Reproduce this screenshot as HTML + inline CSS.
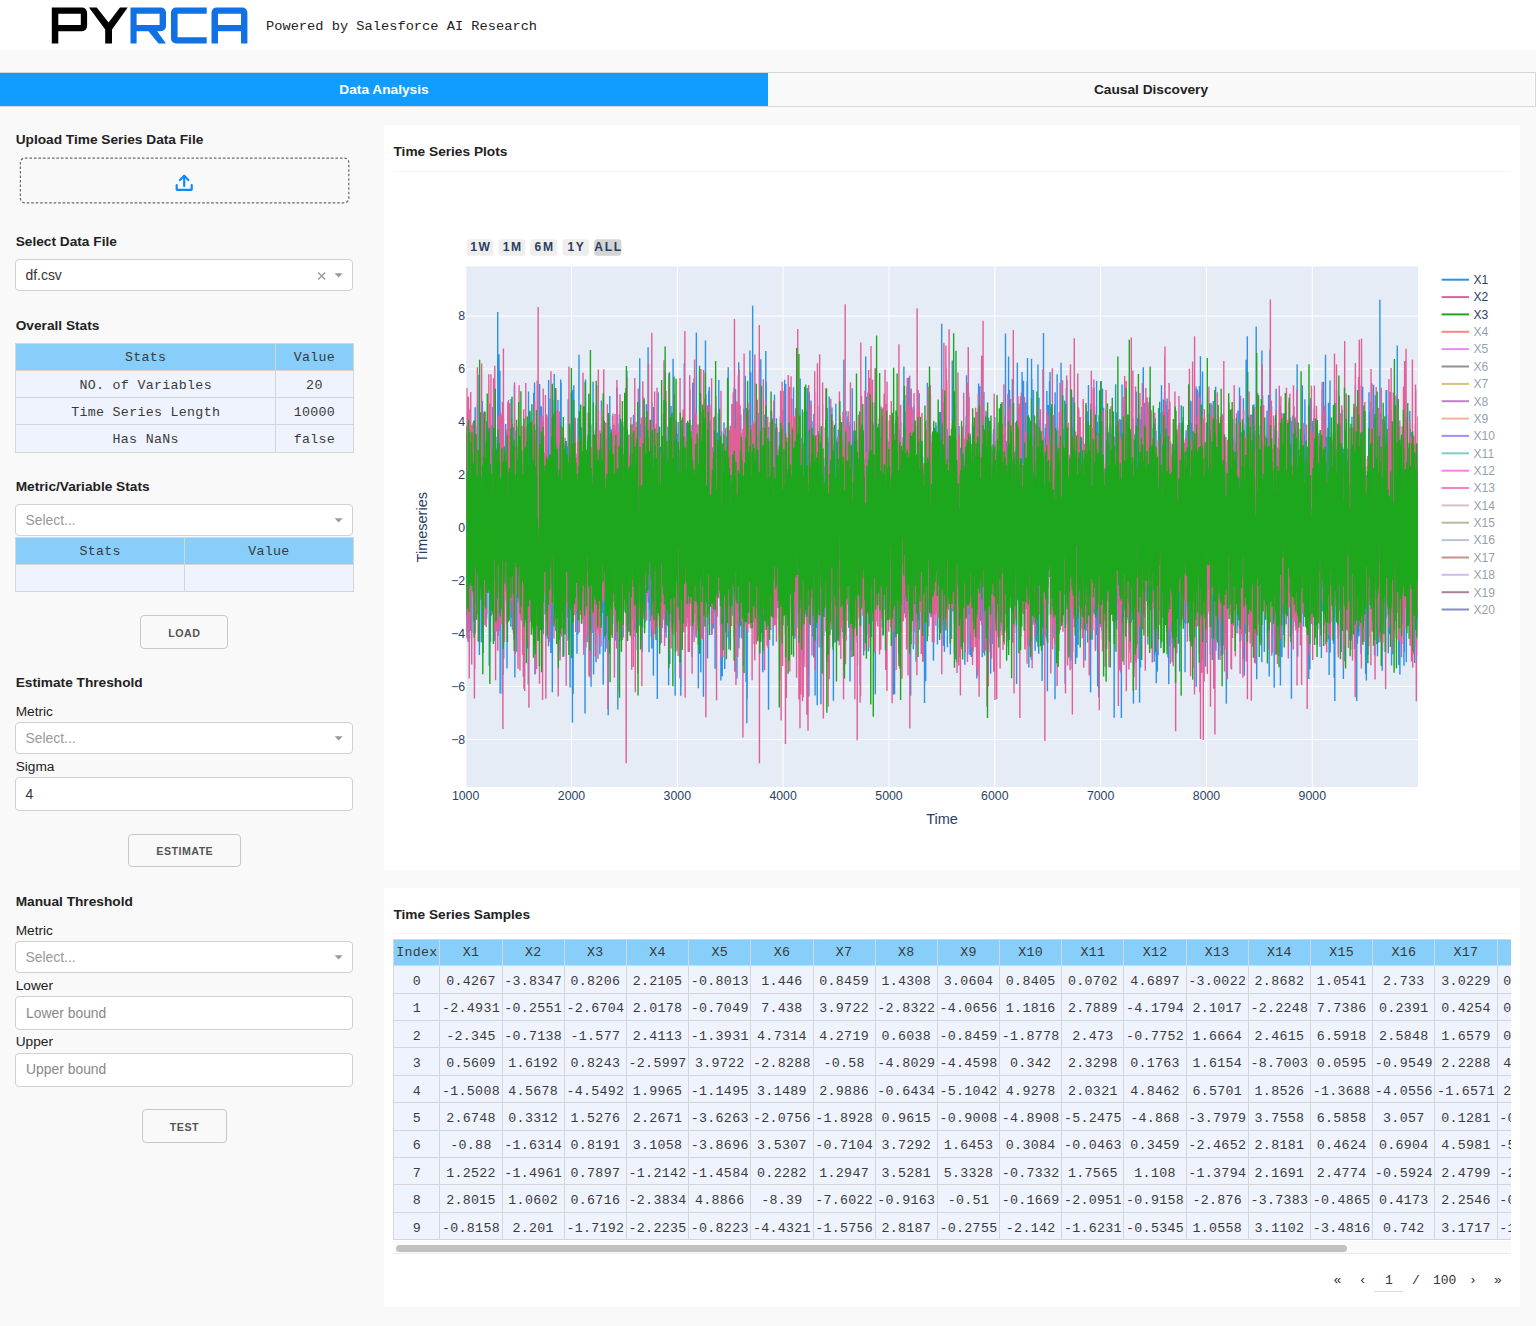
<!DOCTYPE html>
<html><head><meta charset="utf-8"><title>PyRCA</title>
<style>
html,body{margin:0;padding:0}
body{width:1536px;height:1326px;overflow:hidden;background:#f9f9f9;position:relative;font-family:"Liberation Sans", sans-serif}
.abs{position:absolute;box-sizing:border-box}
.t{position:absolute;white-space:pre;line-height:1;font-family:"Liberation Sans", sans-serif}
.m{font-family:"Liberation Mono", monospace}
.tab{display:flex;align-items:center;justify-content:center;font:bold 13.7px "Liberation Sans", sans-serif}
.inp{background:#fff;border:1px solid #d0d0d0;border-radius:4px}
.btn{display:flex;align-items:center;justify-content:center;border:1px solid #c8c8c8;border-radius:4px;font:bold 10.7px "Liberation Sans", sans-serif;letter-spacing:0.45px;color:#555;padding-top:2px}
table{border-collapse:collapse;table-layout:fixed}
.st th,.st td{box-sizing:border-box;border:1px solid #d6d6d6;padding:0;text-align:center;font:13.3px "Liberation Mono", monospace;letter-spacing:0.3px;color:#3a3a3a;background:#eff3fe}
.st td{padding-top:3px}
.st th{background:#87cefa;font-weight:normal;padding-top:1px}
.dt{border-collapse:collapse;table-layout:fixed}
.dt th,.dt td{box-sizing:border-box;border:1px solid #d6d6d6;padding:0;text-align:center;font:13.3px "Liberation Mono", monospace;letter-spacing:0.3px;color:#3a3a3a;background:#eff3fe;height:27.4px;white-space:nowrap;overflow:hidden}
.dt td{padding-top:4px}
.dt th{background:#87cefa;font-weight:normal;height:26.8px;padding-top:1px}
.tk{font:12.3px "Liberation Sans", sans-serif;fill:#2a3f5f}
.tt{font:14.5px "Liberation Sans", sans-serif;fill:#2a3f5f}
.lg{font:12.1px "Liberation Sans", sans-serif;fill:#2a3f5f}
.rb{font:bold 12.1px "Liberation Sans", sans-serif;fill:#2a3f5f;letter-spacing:1.7px}
</style></head><body>
<div class="abs" style="left:0;top:0;width:1536px;height:50px;background:#fff"></div><svg class="abs" style="left:0;top:0" width="260" height="50" viewBox="0 0 260 50">
<path fill="#000" fill-rule="evenodd" d="M51.8 7.5H82a5.1 5.1 0 0 1 5.1 5.1V26.1a5.1 5.1 0 0 1-5.1 5.1H58.3V43.5H51.8Z M58.3 13.7V24.9H80.8V13.7Z"/>
<path fill="#000" d="M89 7.5H96.7L108.6 22.6L120 7.5H127.7L112 29.5V43.5H105.2V29.5Z"/>
<path fill="#1170e4" fill-rule="evenodd" d="M130.5 7.5H160.9a5.1 5.1 0 0 1 5.1 5.1V26.1a5.1 5.1 0 0 1-5.1 5.1H157.1L166 43.5H158.5L148.5 31.2H136.6V43.5H130.5Z M136.6 13.7V24.9H159.6V13.7Z"/>
<path fill="#1170e4" fill-rule="evenodd" d="M176.1 7.5H206.7V13.7H177.6V37.2H206.7V43.5H176.1a5.1 5.1 0 0 1-5.1-5.1V12.6a5.1 5.1 0 0 1 5.1-5.1Z"/>
<path fill="#1170e4" fill-rule="evenodd" d="M216.6 7.5H242.3a5.1 5.1 0 0 1 5.1 5.1V43.5H241V31.2H218V43.5H211.5V12.6a5.1 5.1 0 0 1 5.1-5.1Z M218 13.7V24.9H241V13.7Z"/>
</svg><div class="t m" style="left:266px;top:19.5px;font-size:13.7px;color:#222;">Powered by Salesforce AI Research</div><div class="abs" style="left:0;top:72px;width:1536px;height:35px;border:1px solid #d6d6d6;background:#f9f9f9"></div><div class="abs tab" style="left:0;top:73px;width:768px;height:33px;background:#119dff;color:#fff">Data Analysis</div><div class="abs tab" style="left:768px;top:73px;width:767px;height:33px;color:#222;border-right:1px solid #fff">Causal Discovery</div><div class="t" style="left:15.7px;top:133.4px;font-size:13.7px;font-weight:bold;color:#222;">Upload Time Series Data File</div><svg class="abs" style="left:0;top:150px" width="360" height="60"><rect x="20.4" y="8.05" width="328.4" height="44.8" rx="4.5" fill="none" stroke="#6a6a6a" stroke-width="1.2" stroke-dasharray="2.6 1.9"/></svg><svg class="abs" style="left:170px;top:168px" width="28" height="28" viewBox="0 0 28 28">
<g fill="none" stroke="#0b8bff" stroke-width="2.2" stroke-linecap="round" stroke-linejoin="round">
<path d="M14.2 18V7.8"/><path d="M10 12L14.2 7.8L18.4 12"/><path d="M6.7 17.2V21.3a0.6 0.6 0 0 0 0.6 0.6H21.1a0.6 0.6 0 0 0 0.6-0.6V17.2"/></g></svg><div class="t" style="left:15.7px;top:235.4px;font-size:13.7px;font-weight:bold;color:#222;">Select Data File</div><div class="abs inp" style="left:15.3px;top:258.8px;width:337.6px;height:32.6px"></div><div class="t" style="left:25.5px;top:269.2px;font-size:13.9px;font-weight:normal;color:#333;">df.csv</div><svg class="abs" style="left:316px;top:270.6px" width="12" height="10" viewBox="0 0 12 10"><path d="M2.2 1.4L9.2 8.6M9.2 1.4L2.2 8.6" stroke="#999" stroke-width="1.4"/></svg><svg class="abs" style="left:333px;top:272.1px" width="11" height="7" viewBox="0 0 11 7"><path d="M1.7 1.2H9.6L5.65 5.5Z" fill="#999"/></svg><div class="t" style="left:15.7px;top:318.9px;font-size:13.7px;font-weight:bold;color:#222;">Overall Stats</div><table class="abs st" style="left:15.3px;top:343px"><tr><th style="width:259.8px;height:26.7px">Stats</th><th style="width:77.6px;height:26.7px">Value</th></tr><tr><td style="height:27.3px">NO. of Variables</td><td style="height:27.3px">20</td></tr><tr><td style="height:27.3px">Time Series Length</td><td style="height:27.3px">10000</td></tr><tr><td style="height:27.3px">Has NaNs</td><td style="height:27.3px">false</td></tr></table><div class="t" style="left:15.7px;top:480.3px;font-size:13.7px;font-weight:bold;color:#222;">Metric/Variable Stats</div><div class="abs inp" style="left:15.3px;top:504.4px;width:337.6px;height:31.6px"></div><div class="t" style="left:25.5px;top:514.3px;font-size:13.9px;font-weight:normal;color:#999;">Select...</div><svg class="abs" style="left:333px;top:517.1999999999999px" width="11" height="7" viewBox="0 0 11 7"><path d="M1.7 1.2H9.6L5.65 5.5Z" fill="#999"/></svg><table class="abs st" style="left:15.3px;top:537.3px"><tr><th style="width:168.6px;height:26.5px">Stats</th><th style="width:169px;height:26.5px">Value</th></tr><tr><td style="height:27.3px"></td><td style="height:27.3px"></td></tr></table><div class="abs btn" style="left:140.2px;top:614.5px;width:88.2px;height:34.3px">LOAD</div><div class="t" style="left:15.7px;top:676.3px;font-size:13.7px;font-weight:bold;color:#222;">Estimate Threshold</div><div class="t" style="left:15.7px;top:705.0px;font-size:13.7px;font-weight:normal;color:#222;">Metric</div><div class="abs inp" style="left:15.3px;top:722.2px;width:337.6px;height:32.2px"></div><div class="t" style="left:25.5px;top:732.4px;font-size:13.9px;font-weight:normal;color:#999;">Select...</div><svg class="abs" style="left:333px;top:735.3000000000001px" width="11" height="7" viewBox="0 0 11 7"><path d="M1.7 1.2H9.6L5.65 5.5Z" fill="#999"/></svg><div class="t" style="left:15.7px;top:759.9px;font-size:13.7px;font-weight:normal;color:#222;">Sigma</div><div class="abs inp" style="left:15.3px;top:777.3px;width:337.6px;height:33.5px"></div><div class="t" style="left:25.5px;top:788.2px;font-size:13.9px;font-weight:normal;color:#333;">4</div><div class="abs btn" style="left:128.2px;top:833.5px;width:113.2px;height:33.7px">ESTIMATE</div><div class="t" style="left:15.7px;top:894.9px;font-size:13.7px;font-weight:bold;color:#222;">Manual Threshold</div><div class="t" style="left:15.7px;top:924.0px;font-size:13.7px;font-weight:normal;color:#222;">Metric</div><div class="abs inp" style="left:15.3px;top:941.4px;width:337.6px;height:31.8px"></div><div class="t" style="left:25.5px;top:951.4px;font-size:13.9px;font-weight:normal;color:#999;">Select...</div><svg class="abs" style="left:333px;top:954.3px" width="11" height="7" viewBox="0 0 11 7"><path d="M1.7 1.2H9.6L5.65 5.5Z" fill="#999"/></svg><div class="t" style="left:15.7px;top:978.7px;font-size:13.7px;font-weight:normal;color:#222;">Lower</div><div class="abs inp" style="left:15.3px;top:996.3px;width:337.6px;height:33.7px"></div><div class="t" style="left:26px;top:1006.9px;font-size:13.9px;font-weight:normal;color:#888;">Lower bound</div><div class="t" style="left:15.7px;top:1035.3px;font-size:13.7px;font-weight:normal;color:#222;">Upper</div><div class="abs inp" style="left:15.3px;top:1052.5px;width:337.6px;height:34px"></div><div class="t" style="left:26px;top:1063.4px;font-size:13.9px;font-weight:normal;color:#888;">Upper bound</div><div class="abs btn" style="left:141.6px;top:1109.3px;width:85.6px;height:33.8px">TEST</div><div class="abs" style="left:384px;top:125.2px;width:1136.4px;height:744.6px;background:#fff"></div><div class="t" style="left:393.5px;top:145.3px;font-size:13.7px;font-weight:bold;color:#222;">Time Series Plots</div><div class="abs" style="left:393px;top:171.4px;width:1118px;height:1px;background:#f4f4f4"></div><svg class="abs" style="left:0;top:0" width="1536" height="900" viewBox="0 0 1536 900"><rect x="466.3" y="266.4" width="951.7" height="520.6" fill="#e5ecf6"/><path d="M571.5 266.4V787M677.3 266.4V787M783.1 266.4V787M889.0 266.4V787M994.8 266.4V787M1100.6 266.4V787M1206.5 266.4V787M1312.3 266.4V787M466.3 739.5H1418M466.3 686.6H1418M466.3 633.6H1418M466.3 580.7H1418M466.3 527.8H1418M466.3 474.9H1418M466.3 422.0H1418M466.3 369.0H1418M466.3 316.1H1418" stroke="#fff" stroke-width="1" fill="none"/><clipPath id="cp"><rect x="466.3" y="266.4" width="951.7" height="520.6"/></clipPath><g clip-path="url(#cp)"><path transform="translate(465.65 527.8) scale(0.10583)" d="M0-19l1-746 1 76 1 976 1-119 1 129 1-618 1 353 1-452 1 1459 1-1920 1 935 1-437 1 460 1 136 1-474 1-203 1 578 1-28 1-472 1 876 1 362 1-1074 1 599 1 703 1-622 1-195 1 408 1 169 1-861 1-484 1 636 1 287 1-635 1-186 1 572 1-475 1-281 1 703 1 342 1-654 1 57 1-479 1 1341 1-351 1 100 1 503 1-1046 1-226 1 713 1-1196 1 318 1 109 1 127 1-312 1 1287 1-1094 1 6 1 1333 1-1189 1 336 1-581 1 687 1-237 1-203 1 686 1-830 1 396 1-336 1 571 1-905 1 271 1 440 1-456 1-353 1-299 1 1893 1-1382 1 235 1 315 1 513 1-1273 1 1417 1-1029 1-413 1 1632 1-730 1 567 1-874 1-715 1-286 1 2138 1-677 1-719 1-492 1 651 1 657 1-587 1 176 1 106 1 298 1-631 1 45 1 225 1 73 1 598 1-450 1-952 1 786 1 703 1-1561 1 453 1-888 1 1151 1 295 1 554 1-1559 1-700 1 1907 1-98 1-699 1 802 1-315 1 45 1-305 1-508 1 604 1-505 1 753 1-420 1 1387 1-387 1-1264 1 780 1-658 1 21 1-439 1 287 1-115 1 635 1 330 1 19 1-137 1 361 1-328 1-256 1-194 1 333 1 891 1-1041 1-168 1-483 1 285 1 687 1 45 1-1538 1 705 1-604 1-168 1 1658 1-677 1-41 1-57 1 10 1 191 1 16 1 943 1-752 1 328 1-492 1 334 1-611 1-113 1 287 1-4 1 126 1 304 1-159 1 186 1-497 1 210 1-319 1 1074 1-1246 1 928 1-16 1-302 1 206 1-481 1 487 1 279 1-126 1-1214 1 713 1 682 1-662 1 880 1-1882 1 1865 1-1127 1-37 1 1122 1-985 1-392 1 298 1 116 1-387 1 443 1-98 1 260 1-426 1 885 1-975 1 729 1 330 1-819 1-747 1 411 1 831 1-683 1 649 1-186 1-120 1 1354 1-1412 1 687 1-187 1 437 1 24 1-322 1-995 1-473 1 951 1-628 1 763 1 927 1-1160 1-167 1 492 1-411 1-152 1 808 1 345 1-707 1-5 1 79 1-753 1-416 1 1205 1-627 1-136 1 128 1-188 1 808 1-635 1-723 1 687 1 801 1-691 1-368 1 502 1 525 1-1185 1 1571 1-986 1 292 1 663 1-1358 1 490 1 852 1-995 1 582 1 827 1-682 1-536 1-210 1 265 1 68 1-239 1 383 1-781 1 578 1-81 1-139 1 899 1-196 1-1259 1 671 1 348 1-351 1 463 1-428 1 532 1-530 1 1043 1-1637 1 1038 1 601 1-764 1 83 1-295 1 730 1-868 1-1814 1 2757 1-909 1 365 1-283 1 1127 1-371 1-907 1 281 1-942 1 1316 1-494 1-1541 1 2070 1 77 1-488 1 5 1-500 1 402 1 499 1-545 1-1365 1 769 1 2280 1-1485 1 412 1-842 1 447 1-1184 1 563 1 23 1 396 1 128 1-214 1-538 1 428 1 499 1-915 1 609 1 152 1 401 1-127 1 40 1 1213 1-2143 1 253 1 440 1-709 1 342 1 37 1 1601 1-1261 1-430 1-607 1-129 1 233 1 1455 1 583 1-1557 1 305 1-525 1 612 1-195 1 968 1-1096 1 502 1-447 1-61 1 324 1-244 1 186 1-435 1 145 1 590 1 23 1-1312 1 1038 1-615 1 337 1 538 1 104 1-489 1-76 1-202 1 1059 1-378 1-282 1-954 1 2229 1-1575 1 551 1-547 1 520 1-482 1-675 1 681 1-45 1 34 1 632 1-727 1 422 1 340 1-435 1 106 1-552 1 448 1 274 1-1117 1 263 1-158 1 372 1 404 1 174 1-79 1-690 1 470 1 897 1-812 1 775 1-890 1 770 1 34 1-778 1 111 1 891 1-1356 1-796 1 2050 1-1857 1 1411 1-109 1-177 1 712 1-1544 1 454 1 700 1-267 1 697 1-657 1-723 1 1492 1-720 1-328 1-507 1-169 1 1016 1 159 1-669 1 457 1-30 1-782 1-343 1 801 1 258 1-429 1 1383 1-1052 1 587 1-1941 1 939 1 325 1 189 1 1306 1-1816 1-516 1 1327 1-794 1-22 1 1277 1-1397 1-236 1 633 1 165 1-479 1 1310 1-919 1-541 1 1292 1-1257 1 793 1 936 1-1112 1 488 1-727 1 839 1-1250 1 1007 1-616 1 534 1-152 1-852 1 549 1 343 1 482 1-1357 1 241 1 596 1-321 1 716 1-8 1-106 1-664 1 33 1 585 1-834 1-26 1 344 1-487 1 746 1-98 1-330 1 285 1-466 1 1152 1-1507 1 1242 1-347 1 682 1-1113 1-379 1 114 1 134 1 1345 1-436 1-180 1 266 1-1158 1 528 1 118 1-288 1 809 1-24 1-15 1-776 1 88 1-133 1-282 1 1371 1-449 1-398 1 842 1-460 1-869 1-50 1 14 1 582 1 143 1-726 1 817 1-400 1-556 1 953 1 136 1-338 1-342 1 66 1 183 1-225 1 1213 1-417 1-575 1 614 1 233 1-76 1-162 1-417 1 475 1-707 1-822 1 1037 1-800 1 555 1 792 1-486 1 408 1-984 1 1081 1-1393 1 419 1 1463 1-1579 1-433 1 1319 1-999 1 1566 1-1154 1 1077 1-1206 1 1277 1 475 1-1704 1-1064 1 1622 1-802 1 405 1 244 1-528 1-578 1 1619 1-1012 1 123 1 995 1-1709 1-189 1 1633 1-1514 1 946 1 124 1-938 1 718 1-54 1-672 1 129 1 223 1 1290 1 97 1-1519 1 1155 1-605 1 688 1-501 1 616 1-1636 1 1490 1-504 1 37 1-784 1 1477 1-780 1 99 1-416 1 32 1 527 1-396 1 346 1-474 1 321 1 311 1-353 1-221 1-1070 1 1551 1-449 1-650 1 1992 1-188 1-312 1-605 1-1437 1 1153 1-460 1 805 1 1261 1-84 1-1875 1 469 1 834 1-1359 1 1495 1-1504 1-178 1 1246 1 193 1-1098 1 1091 1-1101 1 1157 1-1126 1 401 1 296 1 261 1-638 1 1199 1-910 1 68 1-605 1 1087 1-1669 1 1139 1 465 1-1420 1-155 1 1041 1 395 1-510 1 397 1-212 1-1053 1 657 1 138 1-113 1 228 1-506 1-22 1 703 1-267 1-1299 1 1121 1 342 1-1258 1 1148 1 622 1-996 1 885 1-226 1-464 1 255 1 359 1-120 1 24 1-990 1 1062 1-84 1-1469 1 1459 1-1150 1 98 1 826 1 712 1-1053 1-123 1-166 1 504 1-638 1-104 1 1375 1-1397 1 706 1 416 1-139 1-1235 1 502 1 1560 1-1053 1 126 1 20 1 190 1 530 1-1304 1 1014 1-321 1 131 1 70 1-827 1 202 1 595 1 153 1-268 1-808 1 473 1-60 1 316 1-40 1-267 1 1159 1-1944 1 1350 1-123 1-1073 1 628 1 101 1 352 1 550 1-982 1-568 1 1178 1-1273 1 1401 1-221 1-698 1 285 1-389 1 806 1 163 1 470 1-373 1-72 1 198 1-977 1 547 1 746 1-2516 1 1867 1 236 1-1403 1 41 1 1304 1 181 1-266 1-1198 1 810 1 280 1-439 1-693 1 1459 1-566 1 562 1-2000 1 199 1 488 1 610 1-446 1 1553 1-1338 1 908 1-7 1-349 1-199 1-520 1-71 1 246 1 679 1-911 1 448 1-732 1 1180 1 1038 1-1286 1-1478 1 946 1 373 1-606 1 214 1 23 1 549 1-332 1-70 1 475 1 267 1-707 1-467 1 181 1 86 1-6 1-1170 1 1308 1-440 1-515 1 1071 1-119 1-438 1-362 1 773 1-28 1 153 1 729 1-1307 1 771 1 825 1-886 1 891 1-407 1-577 1 528 1-1121 1 1429 1-975 1-166 1-509 1 303 1 387 1 86 1 78 1-674 1 1010 1-662 1 345 1-188 1 283 1-1349 1 1571 1-512 1-13 1-187 1 88 1 15 1-314 1 1399 1-852 1 699 1-825 1 797 1-126 1-506 1-820 1 461 1 158 1-623 1 1321 1 646 1-939 1-82 1-851 1-509 1 1952 1-2142 1 513 1 409 1 264 1-1158 1 1320 1 312 1-345 1 848 1-1035 1 327 1-248 1-17 1 799 1-1336 1 1311 1-1071 1 1396 1-1105 1 670 1-485 1 390 1 862 1-601 1-666 1-313 1 1178 1 369 1-705 1-372 1 238 1 99 1-934 1-65 1 126 1 945 1-571 1 152 1 694 1-1299 1 447 1 322 1-1070 1 368 1-52 1-194 1 272 1 1115 1-493 1-783 1 997 1-453 1-203 1-587 1 80 1 225 1 611 1-620 1 218 1 388 1-854 1 485 1 704 1-1138 1 856 1-477 1 1191 1-846 1 522 1 15 1 527 1-2280 1 1290 1-218 1-489 1 692 1-358 1 1054 1-875 1 343 1-514 1 180 1 881 1 263 1-471 1-986 1 176 1 12 1 1363 1 378 1-1162 1-164 1 153 1-539 1 296 1 571 1-172 1-575 1 39 1 83 1-1317 1 1424 1-216 1 628 1-358 1-496 1-24 1 407 1-310 1 191 1 1090 1 784 1-3142 1 833 1 499 1 946 1-260 1-1481 1 2331 1-1386 1-671 1 408 1-344 1 499 1-1420 1 1924 1 188 1-920 1-650 1 835 1-621 1 889 1 368 1-1455 1-94 1 20 1 1109 1 403 1 8 1-532 1-454 1 42 1 1093 1-917 1 100 1-41 1 64 1 101 1-448 1 263 1-56 1 516 1-612 1 291 1 1122 1-1462 1 421 1-670 1 612 1-37 1-173 1 126 1 244 1 758 1-2046 1 1925 1-696 1-559 1 153 1-105 1-114 1-278 1 544 1-1468 1 2205 1-698 1 331 1 104 1-469 1-658 1 1220 1 0 1-808 1 102 1-795 1 523 1 449 1 314 1-306 1 220 1 669 1-773 1 104 1 32 1 111 1-1193 1 559 1-135 1 869 1 233 1-416 1-296 1 331 1-88 1-647 1 373 1 722 1-313 1 129 1-472 1 759 1-556 1-491 1 374 1 530 1-167 1-417 1-202 1-199 1 553 1 659 1-1543 1 634 1-60 1 56 1 756 1-404 1-325 1-436 1 547 1 1789 1-1619 1-334 1-530 1 328 1-1001 1 600 1 43 1 228 1 1308 1-1255 1 140 1 633 1-626 1 95 1 497 1-193 1 79 1-278 1 369 1-546 1 1386 1-920 1 789 1-676 1-563 1 279 1 74 1-101 1-844 1 1505 1-1121 1 1350 1-588 1-355 1 571 1-594 1-295 1 1082 1-628 1 168 1 880 1-987 1 344 1-1202 1 1246 1-1449 1 1256 1-1390 1 787 1 48 1-198 1-55 1-281 1-186 1 1170 1 508 1 800 1-1285 1-646 1 215 1 148 1 262 1 163 1-200 1-379 1 1212 1-1403 1 1230 1-731 1 268 1-149 1 381 1 61 1-519 1 481 1-1993 1 1618 1 135 1-60 1 294 1 779 1-1237 1-319 1 1021 1-849 1 684 1-661 1-222 1-71 1 28 1 641 1-891 1 748 1-449 1-200 1 568 1 551 1-1067 1 973 1-127 1 119 1-1094 1 566 1 1173 1-1678 1-752 1 152 1 1333 1-363 1-243 1-216 1 483 1 635 1-1040 1 79 1 1094 1-542 1-357 1 153 1-297 1-152 1 143 1 369 1 694 1-1105 1-442 1-323 1 1130 1 2 1-834 1 4 1 618 1-209 1 830 1-757 1 793 1-383 1-12 1 194 1 925 1-723 1-653 1 222 1 187 1-462 1-146 1-90 1 931 1-466 1 201 1 306 1 348 1-787 1 436 1-1702 1 1267 1 71 1 97 1-1279 1 1585 1-439 1 342 1-362 1-50 1-639 1 1415 1-785 1-921 1 1196 1-187 1 399 1 974 1-1414 1-720 1 925 1 775 1-1188 1 105 1-518 1 50 1 665 1-377 1 1237 1-1639 1 522 1-506 1 13 1 759 1-77 1 408 1 670 1-1088 1-161 1 697 1-1011 1 345 1-200 1 689 1 559 1-1430 1 94 1 405 1 175 1-81 1-78 1 209 1 845 1-1573 1 1282 1-653 1-15 1-319 1 1054 1-1587 1 310 1-65 1-280 1 1162 1 1314 1-1951 1-552 1 84 1 955 1-250 1-213 1 1177 1-642 1-17 1-1249 1 1257 1-1251 1 876 1 950 1-2191 1 1794 1-895 1-612 1 1260 1 391 1-1278 1 549 1 727 1-82 1-389 1-761 1 703 1-529 1-562 1 216 1-95 1 116 1 1598 1-1593 1 503 1 255 1 540 1 284 1-269 1-613 1 649 1-202 1-112 1-722 1 541 1-84 1-828 1 927 1-518 1 932 1-780 1 118 1-32 1 361 1 318 1-411 1 94 1-844 1 70 1 1187 1-1029 1 623 1-528 1 529 1 557 1-1400 1 318 1 944 1 374 1-763 1 364 1-460 1-554 1-477 1 1027 1-976 1 120 1 899 1 694 1-1418 1 137 1-982 1 520 1 364 1-510 1 1539 1-699 1 263 1-1135 1 662 1 2039 1-2492 1 1280 1-948 1 707 1-408 1-220 1 247 1 646 1-1324 1 563 1 233 1-407 1 698 1-1363 1 934 1-79 1 10 1 709 1 147 1-783 1-77 1-559 1 504 1 866 1-909 1-169 1-99 1 376 1 875 1-1340 1 1065 1-735 1 1208 1-1315 1 872 1-1051 1-383 1 334 1 1316 1-126 1-41 1-863 1 179 1 105 1-85 1-152 1-40 1-584 1 982 1-145 1 1159 1-299 1-355 1 278 1-791 1-461 1 831 1 28 1 16 1-361 1 380 1-546 1 71 1-24 1-236 1 413 1-63 1-909 1 1016 1-474 1 419 1 288 1 0 1 205 1-468 1 346 1-101 1-924 1 761 1-717 1 492 1-335 1 829 1-427 1-1399 1 1017 1-99 1 434 1-351 1 1136 1-175 1-720 1-219 1 692 1-125 1 98 1-97 1 570 1 131 1-760 1 932 1-426 1-179 1 221 1-725 1 385 1-205 1 524 1-150 1-705 1 84 1 467 1-466 1 100 1 16 1-807 1 1123 1-461 1 0 1 369 1 524 1-1044 1 242 1 120 1 16 1 1 1 516 1-667 1 1180 1-999 1 828 1-643 1-600 1 549 1 124 1-558 1 441 1 79 1-8 1-1071 1 477 1 104 1 940 1-1017 1 1076 1-997 1 898 1-1725 1 2046 1-1635 1 237 1 1450 1-863 1-948 1 174 1 1572 1-640 1 368 1-84 1-215 1-1397 1 961 1 202 1 62 1-563 1-14 1 906 1-1342 1 1434 1-453 1-409 1-709 1 1157 1-355 1-572 1 382 1-283 1 50 1 437 1-208 1-161 1 531 1-914 1 2016 1-600 1-1330 1 572 1 603 1-575 1-399 1 926 1-747 1 501 1-5 1-25 1-664 1 1255 1-423 1-580 1 1059 1 203 1-1209 1 319 1 84 1-163 1 627 1-2186 1 2192 1-308 1 554 1-565 1-1093 1 848 1-324 1 607 1-1292 1 927 1 795 1-1136 1 642 1-550 1 263 1-70 1 72 1 586 1 336 1-1394 1 625 1-237 1 422 1 877 1-420 1-1503 1 1227 1-227 1 611 1-529 1-87 1-85 1-83 1 314 1-32 1-315 1-189 1 262 1-1061 1 865 1 25 1 460 1-946 1 1153 1 335 1-362 1-896 1 992 1-1372 1 741 1 840 1-724 1-1132 1 1488 1 253 1-1025 1-447 1 163 1 757 1-290 1-78 1-477 1-548 1 1269 1-792 1 925 1-525 1 856 1-95 1-663 1 738 1-1004 1 809 1-353 1 90 1 141 1-261 1-534 1-1140 1 2415 1-837 1 268 1 415 1-675 1 656 1-451 1-741 1 1834 1-1276 1-112 1 790 1-833 1 96 1 395 1-879 1 1418 1-1098 1 494 1 463 1-495 1 97 1-657 1 1301 1-731 1 147 1-1141 1 1513 1-1224 1 1584 1-1181 1 270 1-289 1 609 1 702 1-227 1-1607 1 619 1 606 1-992 1 926 1-3 1 267 1-1344 1-441 1 1646 1-704 1-387 1-640 1 2540 1-1428 1-283 1 1195 1-1061 1 119 1-296 1 735 1-562 1 575 1-681 1 252 1 301 1 585 1-1724 1 304 1 129 1 868 1-176 1-1137 1 521 1 898 1-506 1-53 1 191 1 418 1-1237 1 374 1 443 1 773 1-557 1-326 1-491 1 695 1-832 1 544 1 498 1 1151 1-910 1 177 1-754 1-273 1-595 1 789 1 644 1-1976 1 1148 1 323 1-1 1 613 1-1119 1 147 1-684 1 274 1 131 1-220 1 867 1 89 1-222 1 673 1-621 1 104 1-562 1 384 1 1064 1-1091 1-780 1 1829 1-606 1-437 1 755 1-438 1-341 1 774 1-909 1-65 1 943 1-729 1-593 1 706 1-344 1-117 1 493 1-685 1 335 1 774 1-852 1-193 1 33 1 814 1-621 1-514 1 641 1-537 1-66 1 752 1-393 1 535 1-765 1 651 1 258 1-295 1 26 1-256 1-47 1 916 1-289 1-569 1-69 1 222 1-1434 1 852 1 671 1-453 1-344 1 546 1 1187 1-1038 1 26 1-1172 1 2233 1-1905 1 957 1-613 1 688 1-264 1-538 1 588 1-546 1 638 1 184 1-107 1 159 1-216 1-834 1 1424 1 275 1-924 1-958 1 358 1-156 1 40 1 1114 1-478 1 1563 1-1154 1-685 1 1217 1 283 1-429 1-855 1-534 1-800 1 650 1 1657 1 451 1-1391 1-512 1 1505 1-617 1-43 1-273 1 119 1-393 1-306 1 554 1-383 1-700 1 1695 1 14 1-877 1-757 1 947 1-522 1 788 1-690 1 867 1-733 1 156 1-1 1-553 1 172 1 937 1-837 1 1453 1-1514 1-991 1 1246 1 12 1 248 1-433 1 720 1-633 1 529 1 84 1-309 1 102 1 942 1-2146 1 1089 1 1032 1-1561 1 622 1-131 1-283 1 901 1 1153 1-1600 1-193 1-428 1 990 1-275 1-375 1 402 1-37 1-284 1 704 1-1452 1 1410 1-539 1 206 1 213 1-699 1-267 1-250 1 491 1 580 1-737 1 1298 1-840 1-266 1-23 1 966 1 196 1-1776 1 1223 1 640 1-229 1-704 1-655 1 667 1-676 1 549 1-138 1-287 1 766 1-377 1 385 1 141 1-726 1 831 1-506 1 491 1-394 1 248 1-912 1 572 1 3 1-883 1 2558 1-999 1 916 1-1536 1-249 1-114 1 213 1 642 1-1475 1 815 1 320 1 485 1-866 1 513 1-22 1-368 1-6 1 585 1-1166 1 1270 1 65 1-801 1 102 1 33 1 272 1-255 1 341 1 611 1-1341 1 985 1-441 1-540 1 398 1-1529 1 2330 1-366 1-470 1-713 1 903 1 666 1-1448 1 1162 1-407 1-607 1 873 1-122 1-528 1 389 1-275 1 694 1-466 1 548 1 262 1-1863 1 732 1-260 1 1061 1-528 1 99 1 684 1-1106 1 713 1-292 1 740 1-1412 1 131 1 207 1 732 1-208 1-991 1 843 1-305 1 71 1 708 1-1487 1 1974 1-1242 1 175 1 861 1-1097 1-106 1 264 1 494 1-718 1-374 1 502 1-845 1 486 1 51 1-350 1 1154 1-78 1-584 1-2 1-557 1 205 1 545 1-25 1 278 1 49 1 49 1-764 1 773 1-66 1-289 1 377 1-161 1 1099 1-1440 1 381 1-281 1-101 1 1250 1-2398 1 1258 1-16 1 1099 1-1359 1 113 1 429 1-347 1-587 1 905 1 316 1-1262 1 597 1 246 1-1396 1 1204 1 186 1-247 1 375 1-346 1 37 1 454 1-223 1-319 1-40 1-112 1-113 1 303 1-150 1 506 1-69 1-727 1 1696 1-1318 1-1568 1 2822 1-1884 1 1835 1-1189 1-706 1 80 1 1350 1 224 1 80 1-1210 1 626 1-221 1-141 1-84 1-69 1 233 1 974 1-1721 1 2364 1-2239 1 1035 1-227 1 183 1-85 1-195 1 145 1 461 1-1095 1 804 1-1081 1 841 1 312 1-643 1-254 1 1020 1-361 1-962 1 1365 1-84 1-572 1 777 1 704 1-449 1-1148 1-158 1 35 1 113 1 914 1-1075 1-267 1 1041 1-923 1 736 1-313 1-100 1 1042 1-1660 1 1305 1-424 1 221 1-536 1 15 1 231 1-784 1 636 1 384 1 1395 1-1461 1 4 1 327 1-6 1-818 1-254 1-478 1 423 1 1041 1-542 1 911 1-1178 1 210 1 544 1-284 1 82 1 217 1-1101 1-1004 1 1283 1-132 1 505 1 287 1-1432 1 1441 1-429 1 290 1-399 1 360 1-362 1 1046 1-655 1-828 1 1352 1-206 1-1146 1 544 1-374 1 1860 1-1341 1 800 1 66 1-1015 1-435 1 1509 1-218 1-295 1-257 1 678 1-2022 1 942 1 535 1 89 1-1602 1 47 1 1540 1-472 1-514 1 1379 1-336 1-1093 1 1154 1-147 1 517 1-331 1-816 1 853 1 273 1-382 1-1355 1 902 1 417 1-403 1-163 1 182 1 1091 1-1190 1 290 1-597 1 1243 1-1358 1 874 1 686 1-1718 1 1045 1-503 1 304 1-710 1-7 1-5 1 227 1 1320 1 38 1-1066 1 654 1-804 1 171 1 895 1-213 1 55 1-139 1-386 1-503 1-374 1 1311 1-231 1-1202 1 375 1 374 1 1465 1-760 1-662 1 425 1-1464 1 1078 1-109 1 785 1-31 1-215 1-23 1-222 1-345 1 77 1-434 1 1337 1-888 1-16 1-766 1 1026 1-309 1 649 1-704 1 14 1 583 1-107 1-232 1-348 1 984 1-1157 1 692 1-1269 1 250 1 1060 1 126 1-1754 1 1040 1 35 1 563 1-166 1-532 1 107 1 821 1-1177 1 531 1 716 1-1106 1 665 1-545 1 760 1-521 1 1129 1-1135 1 1076 1-957 1 1534 1-1404 1-448 1 136 1-405 1 1290 1-1501 1-21 1 1594 1-230 1-127 1-312 1-118 1 1507 1-1738 1 481 1 434 1-1118 1 736 1-841 1 342 1 485 1-847 1 208 1 744 1 628 1-604 1-661 1 486 1-1136 1 853 1 37 1-118 1 730 1-432 1 306 1 957 1-323 1-1427 1 670 1-183 1 769 1-504 1-778 1 389 1 349 1-1162 1 902 1 165 1-848 1 1633 1-1296 1 944 1-185 1-59 1-461 1 12 1-111 1 54 1-677 1-163 1 556 1-27 1 642 1 410 1-958 1 315 1-466 1 1520 1-2553 1 2239 1-741 1-542 1 1347 1-471 1 831 1-334 1 287 1-1157 1-108 1 347 1-897 1-71 1 791 1 121 1 31 1 101 1-997 1 605 1 323 1-60 1-438 1 535 1-404 1 199 1-789 1 111 1 1460 1-712 1-495 1 658 1-714 1 269 1-146 1 372 1-208 1-125 1 1130 1-314 1 58 1-1530 1 781 1-39 1 112 1 392 1 128 1-902 1 692 1-1106 1 783 1 59 1 176 1-83 1-61 1-842 1-460 1 1974 1-797 1-257 1 911 1-152 1-100 1 1102 1-1728 1 393 1 27 1-100 1-94 1-1167 1 1205 1-369 1 765 1-493 1 376 1-93 1 426 1-50 1-718 1-164 1 161 1 639 1-558 1 1610 1-1965 1 554 1-175 1-505 1 896 1-780 1 789 1-556 1 537 1-402 1-648 1 1186 1-23 1-160 1-355 1-1382 1 1877 1 825 1-783 1 524 1-578 1-326 1 551 1-157 1 669 1-1156 1 524 1-1035 1 19 1 1083 1-282 1-239 1-398 1 1371 1-903 1-1092 1 1101 1-176 1 124 1 673 1-1209 1 384 1 59 1-318 1-35 1 1513 1-1341 1 600 1-419 1 492 1 86 1-1026 1 541 1 154 1 3 1-209 1 54 1 1325 1-843 1-360 1-554 1-348 1 1294 1-1620 1 1037 1-223 1 576 1 39 1-1152 1 932 1-66 1-712 1-319 1 1816 1-740 1-101 1-1030 1-368 1 1418 1-240 1-279 1-161 1 828 1-664 1 876 1 1114 1-731 1-900 1-322 1 1715 1-257 1-1001 1 1886 1-2221 1-269 1 2263 1-2115 1 540 1-910 1 640 1 293 1-204 1-463 1 421 1 84 1 836 1-1087 1 254 1-1021 1 1044 1 41 1 304 1-762 1 522 1 282 1-1301 1-102 1 1260 1 322 1-1215 1 1108 1-2065 1 1669 1-620 1 1275 1-713 1-637 1 369 1 551 1-1689 1 968 1 546 1 212 1-189 1-916 1 1199 1-454 1 481 1-1172 1 801 1-580 1 167 1 648 1-724 1-135 1 1179 1-1046 1-1614 1 2180 1-530 1 1117 1-1016 1 594 1-768 1 463 1 638 1-1290 1 746 1 452 1-612 1 585 1-772 1 260 1 174 1-588 1 1103 1-1276 1 1688 1-2048 1 808 1 253 1 268 1-728 1 401 1 10 1-687 1 833 1-113 1-378 1-365 1 694 1-176 1 65 1-396 1-425 1 1378 1-455 1-49 1-362 1-518 1 863 1-131 1-523 1 1352 1-270 1-181 1-252 1-135 1 426 1-1293 1 1401 1-287 1-734 1 179 1 448 1-222 1-251 1 473 1-376 1 892 1-562 1 977 1-427 1 143 1-1363 1 978 1-434 1 698 1-411 1 44 1 330 1-977 1 1439 1-1306 1-1160 1 1988 1-485 1 909 1-874 1 978 1-1348 1 642 1 775 1-313 1 169 1-743 1-649 1 717 1 449 1-194 1-543 1 1462 1-1727 1 106 1 1640 1-2082 1 1617 1-812 1-798 1 1616 1 123 1-417 1-19 1-541 1 223 1-15 1-8 1-171 1 386 1-678 1 189 1 583 1-1631 1 1777 1-1153 1 850 1-636 1-93 1-196 1-323 1 1299 1-2126 1 1408 1 698 1 312 1-2129 1 401 1 954 1-449 1-320 1 699 1 299 1-224 1-503 1 469 1 720 1-1142 1 1427 1-562 1-1143 1 575 1 2 1 73 1-532 1 623 1 1093 1-1263 1 1904 1-583 1-2090 1 313 1 865 1-224 1-92 1-527 1 1021 1 63 1-145 1-441 1-72 1 378 1-663 1 1025 1-544 1 354 1 181 1-1285 1 890 1 395 1-602 1 599 1-919 1-146 1-101 1 1199 1-525 1-1145 1 1184 1-852 1-150 1 1672 1-1491 1 263 1-71 1-468 1 707 1 219 1-306 1 550 1-484 1 1443 1-2152 1 1300 1-616 1 131 1 120 1-4 1 27 1 980 1-629 1-1001 1 1275 1 19 1-1823 1 522 1-204 1 906 1-162 1-283 1 115 1 374 1 791 1-419 1 446 1-1769 1 1135 1-125 1-266 1 154 1-293 1 662 1 518 1-1880 1 1415 1-135 1 185 1-142 1-325 1-416 1 1033 1-769 1 552 1-1073 1 1394 1-762 1-351 1 1187 1-840 1-20 1 540 1-331 1-689 1 426 1 377 1-117 1-374 1-468 1 271 1 37 1-475 1 1772 1-61 1 476 1-1767 1 1777 1-1276 1-454 1 1223 1-417 1-226 1-563 1 1276 1-1042 1-214 1 315 1-8 1-619 1 583 1 139 1 177 1-558 1 533 1-534 1 313 1-582 1 1087 1-490 1-155 1-36 1-406 1 417 1-288 1-597 1 632 1 1074 1 208 1-1184 1 591 1-377 1 263 1-836 1 61 1 1313 1-790 1 324 1 569 1-1104 1 446 1-331 1-1146 1 647 1 127 1 852 1 437 1-1370 1 875 1-196 1 237 1-269 1-1300 1 1535 1-19 1-273 1-46 1 837 1 324 1-671 1-207 1 324 1 122 1-33 1-306 1-154 1 852 1-608 1-508 1 270 1 696 1-564 1-189 1-443 1 1348 1-1299 1 645 1-374 1-269 1 874 1-36 1-389 1-472 1 715 1 489 1-403 1-606 1-436 1 937 1-102 1-81 1-24 1 456 1-283 1-368 1 63 1 46 1 576 1-255 1 91 1-988 1-226 1 623 1-702 1 1058 1-3 1 564 1-856 1 384 1-307 1-221 1 408 1 492 1-603 1 15 1-57 1-361 1 496 1 29 1-1117 1 368 1 649 1 470 1-273 1-462 1-259 1-872 1 1477 1-223 1 283 1-245 1 258 1 381 1-1166 1 498 1-645 1 995 1-428 1-220 1 1410 1-311 1-1153 1 361 1 1077 1-612 1 174 1-317 1-1128 1 1177 1-1447 1 1266 1 268 1-1280 1 344 1-241 1-315 1 488 1-89 1 1634 1-498 1-705 1 131 1-288 1 664 1-884 1-505 1 795 1-141 1 182 1-235 1 396 1 399 1-391 1 49 1 910 1-980 1 115 1-101 1 421 1-573 1-79 1 741 1-573 1-254 1 21 1 926 1 59 1-582 1 598 1-1972 1 1844 1-6 1-800 1 623 1 1045 1-1221 1 470 1-255 1 609 1-392 1-409 1-46 1 579 1-218 1 78 1-550 1 163 1 613 1-1050 1 746 1-602 1 726 1-673 1 232 1-96 1-248 1 36 1 152 1 1 1 797 1-667 1 1178 1 28 1-1071 1-49 1-954 1 460 1-246 1 786 1-418 1-401 1 351 1 96 1 138 1 567 1-16 1 298 1-1023 1 377 1 223 1-573 1 515 1-899 1-481 1 809 1 633 1 447 1-1949 1 867 1 903 1-1250 1 1523 1-682 1-113 1 68 1 433 1-1966 1 1553 1-435 1 194 1 910 1-585 1-423 1-402 1 711 1-397 1 393 1-517 1 1706 1-1713 1 681 1-24 1 1262 1-992 1-936 1-947 1 1681 1-24 1-643 1 114 1 488 1-235 1 120 1-560 1-98 1-540 1 470 1 140 1 284 1-436 1 1074 1-1757 1 1048 1-632 1 1234 1-1022 1 352 1 329 1 269 1 119 1-1500 1 324 1 618 1-45 1 516 1 621 1-25 1-662 1-254 1 570 1-1103 1 157 1 199 1 1076 1-865 1-104 1 691 1 518 1-2301 1 727 1 564 1-1112 1 273 1 372 1 125 1-311 1-384 1 782 1 169 1-457 1 1911 1-1633 1 278 1-219 1 94 1-293 1 131 1 20 1 113 1-330 1 541 1-838 1 1499 1-1061 1-140 1 969 1-473 1-987 1 819 1 423 1 1180 1-1868 1 134 1-286 1-810 1 1155 1-77 1 461 1-351 1-19 1-441 1 113 1 742 1-163 1-1043 1 1316 1-960 1-494 1 546 1 226 1-626 1 569 1 204 1 109 1-760 1 255 1-478 1 1058 1-13 1 69 1-402 1 547 1-911 1 330 1 743 1 1116 1-641 1-1836 1 844 1-118 1 323 1-461 1 1302 1 45 1-204 1-958 1-359 1 129 1 339 1 649 1-1168 1 606 1-147 1 31 1 222 1 143 1-74 1 394 1-866 1 237 1-670 1 1592 1-1679 1 700 1 51 1 362 1 6 1 381 1-1346 1 626 1-524 1-62 1 746 1-147 1 60 1-771 1 503 1-21 1-311 1 448 1-1192 1 1672 1-1228 1-85 1 1433 1-1128 1 327 1-332 1 1165 1-813 1 689 1-365 1-986 1 875 1 1191 1-480 1-146 1-1212 1 964 1 483 1-1504 1 487 1-52 1 642 1-1252 1 872 1 1041 1-470 1-166 1-383 1-521 1 839 1-71 1-1578 1 1194 1 343 1-316 1 723 1-1005 1-244 1 873 1-891 1 727 1-326 1 579 1 34 1 392 1-967 1 284 1-17 1 492 1 22 1-301 1-620 1 95 1 553 1-549 1-824 1 929 1-1077 1 893 1-505 1 1046 1-957 1 1326 1-803 1 325 1 935 1-355 1-1404 1 361 1-453 1 619 1 1743 1-1774 1 461 1-37 1-30 1 178 1 109 1-1238 1 448 1 619 1-130 1-786 1 334 1 105 1 799 1-445 1 395 1 439 1-1581 1 688 1 48 1 308 1-966 1-751 1 848 1-194 1 1224 1-800 1-23 1-716 1 833 1 537 1-494 1 207 1-1058 1 440 1 182 1 91 1-373 1 751 1 240 1 542 1-1726 1 384 1-77 1 338 1-911 1 1487 1-1229 1 1152 1-220 1 431 1-735 1 214 1-405 1 572 1 455 1-1103 1-405 1 311 1 445 1-258 1 1183 1-767 1-841 1 395 1 739 1-962 1 556 1-485 1 1203 1-496 1-479 1 13 1-141 1 317 1 106 1-377 1-221 1 1338 1-671 1-67 1-203 1-480 1 1315 1-1046 1 1272 1-549 1-130 1-142 1 192 1-55 1-97 1-40 1 883 1-249 1-540 1-542 1-267 1-1036 1 1539 1 501 1-541 1-282 1 304 1 672 1-538 1-33 1 766 1-113 1-1348 1 1920 1-1343 1 240 1-922 1 435 1 825 1-1189 1 1019 1-1428 1 187 1 972 1-478 1 330 1 607 1-1100 1 357 1-238 1-124 1-192 1 210 1 628 1-99 1-182 1 298 1 64 1-1172 1 766 1-785 1 1487 1-407 1 220 1-25 1-57 1-93 1 174 1-1248 1 628 1 792 1-111 1-719 1 111 1 643 1-855 1 1313 1-534 1-1226 1 2414 1-1338 1-664 1 631 1 354 1 61 1 663 1-421 1-775 1 354 1-310 1 76 1-242 1 1084 1-754 1 18 1-16 1 322 1 726 1-1572 1-103 1-866 1 913 1-508 1 583 1 543 1-487 1 926 1-785 1 195 1 527 1-1268 1 58 1 365 1-197 1-463 1 991 1 679 1-223 1-919 1 260 1 956 1-1565 1 617 1-780 1 269 1 872 1-296 1 462 1 59 1-303 1-445 1-485 1 1260 1-889 1 369 1 143 1-753 1 827 1-967 1 953 1 328 1-943 1 1241 1-152 1-558 1-106 1 151 1 952 1-357 1-1032 1-16 1 865 1-713 1 33 1-453 1 978 1-1225 1 984 1-977 1 289 1 1083 1-392 1-334 1-409 1 1343 1-495 1-628 1 81 1 856 1-86 1-743 1 814 1-703 1-383 1 504 1 1510 1-2158 1 13 1-149 1 312 1 1423 1-1735 1 600 1-333 1 615 1 47 1-4 1-1026 1 740 1 267 1 604 1-981 1 257 1-81 1-466 1 148 1 403 1-119 1 71 1-352 1 15 1 308 1 559 1-953 1-32 1 1105 1-817 1 435 1 1009 1-1200 1-558 1 943 1-13 1-967 1 1190 1-89 1-349 1-528 1-2 1 648 1-123 1-223 1 269 1 266 1 129 1-1013 1 523 1-1729 1 1256 1 772 1-423 1-190 1-32 1-27 1-4 1 332 1-442 1-862 1 1474 1-34 1-611 1-301 1 240 1-224 1 710 1 102 1-496 1-11 1-560 1 64 1 1897 1-1459 1 812 1 806 1-1401 1 315 1 101 1 525 1-150 1-449 1 719 1-777 1-124 1 149 1-252 1 206 1 613 1-71 1-655 1-465 1 457 1 366 1-374 1 1107 1-456 1-345 1-176 1 147 1-30 1 514 1-344 1-460 1 1172 1-359 1-478 1-1026 1 452 1-498 1 124 1 1005 1-213 1 620 1-1318 1 250 1 77 1-40 1 113 1 142 1-38 1-525 1 1121 1 145 1-588 1-649 1 516 1 249 1-582 1 404 1 1128 1-501 1 608 1-1049 1 127 1-497 1-938 1 1518 1-339 1 219 1 1361 1-1149 1-23 1-557 1 623 1 254 1-1054 1 367 1 464 1-77 1-256 1-627 1-338 1 1529 1-1386 1 623 1-172 1-342 1 1084 1-1021 1 1212 1-470 1 215 1-1421 1 26 1 494 1 135 1 586 1-1273 1 193 1 278 1 566 1 132 1-149 1-791 1 1272 1-595 1-849 1 418 1-480 1 741 1-8 1-534 1 407 1 172 1 476 1 543 1-1662 1 1065 1 182 1-901 1 979 1 258 1-437 1-283 1-188 1-134 1-255 1 605 1-269 1 266 1 294 1-582 1 27 1-835 1 698 1 722 1-721 1 472 1-1018 1 1827 1-580 1-2 1-434 1 139 1 812 1 152 1-1138 1-713 1 6 1 1031 1-478 1 737 1 321 1-1484 1 305 1 561 1 22 1-717 1 331 1 364 1-343 1 162 1 221 1 171 1-911 1 775 1 392 1-1657 1 311 1 401 1 327 1-146 1 913 1-793 1-162 1 263 1-351 1 666 1-525 1 970 1-853 1 326 1 396 1-514 1-231 1 341 1-842 1 899 1-903 1 116 1 737 1-1126 1 1545 1-1047 1 259 1-385 1 1288 1-207 1-198 1-468 1-35 1 38 1 154 1 247 1 367 1-518 1-528 1-268 1 840 1-870 1 1338 1-1174 1 1027 1-733 1 662 1 8 1-234 1-1083 1 1149 1-709 1 257 1-81 1-6 1-174 1 1008 1-686 1-168 1 513 1-517 1 758 1-961 1 785 1-232 1-590 1-158 1 906 1 39 1-895 1 2129 1-2321 1 25 1 1297 1-1241 1 456 1-53 1 1527 1-1004 1-164 1 119 1-11 1-56 1 1420 1-1467 1 271 1-332 1 225 1-272 1-157 1-821 1 1430 1-1382 1 1063 1 359 1 305 1-1273 1 1311 1-1337 1 312 1 503 1 55 1-634 1 182 1-324 1 410 1 282 1-579 1 956 1-1125 1 436 1 646 1-56 1-381 1 824 1-1770 1 234 1 1137 1-541 1-998 1 713 1 783 1 631 1-285 1-1565 1 484 1 899 1-1116 1 593 1 169 1-81 1-32 1-1184 1 1451 1-301 1-963 1-95 1 1379 1-1692 1 535 1 1438 1-1830 1 1827 1-1201 1 1019 1 350 1-1464 1 238 1 281 1-152 1 163 1 87 1 452 1-921 1 313 1 148 1 181 1-160 1 689 1-673 1 376 1-1265 1 1247 1-279 1-261 1-434 1 186 1 249 1-1197 1 1214 1-189 1-1344 1 2021 1-1034 1 290 1 982 1-387 1-813 1 1275 1-706 1-624 1 653 1-282 1 522 1-24 1-5 1-147 1-549 1 310 1-1058 1 793 1 153 1-1100 1 1316 1 389 1-536 1 694 1-896 1-474 1 406 1 584 1-147 1-351 1-389 1 882 1 9 1-839 1 484 1-70 1-78 1 702 1-349 1-676 1 680 1 23 1-278 1-50 1-1202 1 1871 1-531 1-1048 1 1107 1-193 1 1024 1-1356 1 57 1 28 1 560 1-308 1 244 1-513 1 483 1-447 1 1185 1-563 1 1408 1-1508 1-514 1 575 1-1457 1 1867 1-365 1 327 1-235 1-19 1 562 1-277 1-1681 1 1281 1-656 1 1219 1-644 1-365 1 396 1 190 1-181 1-121 1-449 1-209 1 1412 1 412 1-1042 1-109 1-398 1-196 1 968 1-1524 1 1008 1 1132 1-1524 1 381 1-5 1 1050 1-720 1-259 1 175 1-470 1-318 1-150 1 152 1 783 1-1044 1 815 1-332 1 614 1 644 1 488 1-1372 1 483 1-375 1-504 1 1355 1 131 1-1131 1-59 1 357 1 141 1 596 1-842 1 367 1-656 1-289 1 841 1-543 1 129 1-288 1-466 1 488 1-28 1-47 1 682 1-234 1-197 1-500 1-30 1-547 1 1881 1-588 1 943 1-665 1 619 1-1572 1 230 1 1023 1-788 1-226 1-559 1 508 1 394 1 122 1-402 1 180 1 438 1 415 1-1273 1 993 1-252 1-598 1 478 1-665 1 1262 1-1054 1 1169 1 97 1-257 1-649 1 444 1 394 1-1443 1 1210 1-475 1-206 1 408 1-468 1-144 1 403 1-639 1 914 1 261 1-707 1 656 1-752 1 268 1 205 1-586 1 24 1 1957 1-1478 1-257 1-196 1 579 1 338 1-712 1-312 1 1534 1-312 1-512 1 1121 1-1115 1-795 1 1056 1-673 1 575 1-734 1-127 1-366 1 688 1-547 1 365 1 490 1-1092 1 1162 1-431 1-1276 1 884 1 949 1-627 1 476 1-229 1 763 1-967 1 993 1-1078 1-2 1-265 1-775 1 2179 1-259 1-110 1-242 1-812 1 683 1 140 1 305 1-280 1-107 1-188 1 745 1-760 1-361 1 123 1 895 1-1161 1 10 1 283 1 857 1 137 1-849 1 600 1 173 1-1251 1-12 1 152 1-375 1 229 1 1156 1-1294 1 577 1-181 1-632 1 632 1-636 1 852 1 246 1 183 1-321 1 869 1-910 1 33 1 232 1 954 1-47 1-1604 1 935 1-1309 1 1172 1-603 1 1014 1-454 1-234 1-451 1-620 1 405 1 1358 1-820 1 98 1 263 1-689 1-557 1 1145 1-885 1-157 1 1383 1-1596 1 49 1 782 1-795 1 820 1-507 1 282 1 852 1-633 1 242 1 184 1 371 1-210 1 255 1-1334 1 1743 1-1147 1 388 1 359 1-1112 1 858 1-1129 1 780 1-288 1 261 1-439 1-163 1 782 1-248 1-995 1 1313 1-1342 1 1240 1 93 1 636 1-473 1 503 1-658 1-711 1 423 1 305 1 239 1-191 1 432 1-104 1-1810 1 960 1 651 1-894 1-466 1 1203 1-298 1 646 1 191 1-1674 1-1151 1 2344 1 498 1-1713 1 203 1 327 1-560 1 1019 1-346 1-290 1 622 1-445 1 402 1-389 1 165 1 1205 1-1165 1 856 1-326 1 458 1-1395 1 643 1 33 1-919 1 302 1 520 1 1050 1-1541 1 520 1 56 1-618 1 768 1-308 1-547 1 178 1 667 1-1163 1 172 1-418 1 1094 1-152 1-471 1 344 1 169 1 135 1 113 1 196 1-4 1-591 1 400 1 622 1-823 1-903 1 168 1 1894 1-654 1-913 1 392 1 5 1 113 1-107 1 605 1-1237 1 1251 1-506 1-942 1 252 1 613 1 0 1 331 1-54 1-148 1-884 1 993 1-561 1 76 1 13 1 385 1-570 1 321 1 35 1 319 1 940 1-1615 1-15 1 705 1-183 1-260 1 705 1-942 1-3 1-79 1-39 1 1579 1-1356 1 538 1-868 1 29 1 136 1 502 1-1612 1 1595 1 553 1-1126 1 1351 1-1884 1 506 1-175 1 157 1 358 1 961 1-402 1-651 1 427 1-320 1 588 1 58 1-605 1-247 1 410 1 548 1 383 1-2056 1 1765 1-149 1-79 1-905 1 922 1-727 1 141 1 803 1-725 1 771 1-591 1-502 1 545 1 377 1-274 1-129 1-289 1 1466 1-249 1-1300 1 340 1-70 1-112 1 211 1 162 1-312 1-309 1 182 1 179 1 592 1-711 1 775 1-269 1-457 1 18 1-543 1 118 1 218 1 452 1-173 1 128 1-1100 1 709 1 617 1 108 1-1160 1 1174 1-688 1 105 1-494 1 1079 1-744 1 144 1-331 1-313 1 699 1 181 1-612 1 1270 1-888 1 650 1 125 1 207 1 41 1-1380 1-25 1 427 1-517 1 558 1 291 1 325 1-1027 1-26 1-249 1 1145 1-288 1 593 1-1386 1 242 1 108 1 293 1 73 1 120 1-809 1 957 1-845 1 334 1 718 1 245 1-370 1-413 1 697 1-1067 1-284 1 330 1 1243 1 365 1-1789 1-345 1 1050 1-512 1 440 1 205 1-908 1 859 1-779 1-485 1 1026 1-1111 1 1774 1-1243 1 507 1-1425 1 1406 1 467 1-1350 1 1761 1-1101 1 673 1-1197 1 829 1-537 1 501 1 594 1 588 1-2203 1 869 1 775 1-469 1-728 1 1387 1-2103 1 1409 1 66 1-924 1 602 1 678 1-1074 1 262 1-378 1 1147 1 115 1-981 1 595 1 964 1-879 1-680 1 759 1-1123 1 999 1-227 1 857 1-462 1-343 1-429 1 220 1-491 1 1817 1-1234 1 95 1 505 1-563 1 395 1-658 1 434 1-478 1 795 1-1224 1 490 1-779 1 1078 1 206 1-358 1 338 1 323 1-593 1 45 1 329 1-150 1 332 1-629 1 837 1-1711 1 938 1-514 1 1208 1-871 1 269 1-628 1 62 1 1414 1-1570 1 1488 1-1596 1 785 1 644 1-1072 1 376 1 581 1-142 1-686 1 1042 1-287 1-1531 1 1478 1-642 1-44 1-289 1 45 1 1922 1-1152 1-942 1 1115 1-1476 1 889 1 830 1-1009 1-780 1 1478 1-695 1 815 1-169 1-395 1-226 1 91 1 80 1-1243 1 1975 1 440 1-1370 1 210 1 920 1-1790 1 1374 1 401 1-1037 1-125 1-971 1 2204 1-148 1-566 1 92 1-206 1 360 1 481 1-629 1-656 1-46 1 820 1-678 1 71 1 514 1-81 1-225 1-1561 1 1493 1 598 1-413 1 225 1-963 1 1874 1-606 1-1093 1 234 1 221 1-393 1 1163 1-962 1 856 1 81 1-1013 1 737 1-250 1-559 1 949 1-940 1-931 1 1390 1-659 1 106 1 1159 1 57 1-780 1 1216 1-1238 1-123 1-120 1 11 1-503 1 947 1-958 1 466 1 1 1 389 1-633 1 972 1-842 1-223 1 1017 1 161 1-111 1-408 1-230 1-292 1-581 1 155 1 768 1 377 1 465 1-1156 1 175 1 454 1-65 1-28 1 1402 1-1436 1-218 1 256 1 535 1-631 1-247 1-753 1 422 1 266 1 367 1 733 1-495 1 512 1-721 1-665 1 10 1 81 1 504 1-553 1 719 1 961 1-1194 1 57 1 1014 1-690 1 1091 1-1122 1-961 1 1058 1-1117 1 619 1 552 1 590 1-1440 1 49 1 1226 1-606 1-872 1 1057 1-651 1 1337 1-586 1-939 1 1088 1 147 1-28 1-578 1 683 1-834 1-383 1-555 1 1102 1-1148 1 600 1 446 1-423 1-569 1 13 1 422 1 483 1-527 1 351 1 27 1-52 1-886 1 1717 1-639 1 578 1-1115 1-141 1-138 1 974 1-233 1-408 1 334 1-63 1 54 1-43 1 220 1-317 1 1084 1-594 1 518 1-707 1 367 1-723 1-411 1 1423 1-262 1-632 1-633 1 380 1 188 1 285 1 219 1-471 1-66 1 194 1 422 1 582 1-429 1-270 1 448 1-846 1 994 1-635 1-373 1-264 1 325 1-548 1 1024 1 103 1-1060 1 1119 1-411 1 897 1-1623 1 230 1 835 1 566 1-1136 1-11 1-508 1-390 1 919 1 258 1 11 1 36 1 607 1-268 1-459 1 884 1-188 1-1438 1 1074 1-836 1-169 1 618 1-466 1 573 1 394 1-435 1-101 1-30 1 28 1 265 1-827 1 715 1 122 1-761 1 1092 1-565 1-838 1 799 1-769 1 949 1 143 1-198 1 225 1-115 1 46 1-702 1 227 1 344 1 305 1-2238 1 1927 1-906 1 1459 1-248 1-1112 1 1314 1-16 1-573 1 381 1-247 1-252 1-405 1 388 1-63 1-582 1-51 1 999 1 848 1-478 1-1175 1 875 1 129 1-145 1-1154 1 866 1 245 1 183 1 224 1-2214 1 1617 1-108 1 265 1-783 1 1172 1 516 1-760 1-515 1-1088 1 1320 1 444 1-358 1 313 1 2 1-495 1-116 1 540 1-994 1 664 1-108 1 356 1-500 1-24 1-143 1 836 1-819 1 679 1-378 1-366 1-436 1 1111 1 373 1-707 1-613 1 878 1-1561 1 2442 1-1919 1 191 1 31 1 1099 1-1240 1 107 1-45 1 835 1 9 1-871 1 536 1 402 1 268 1-622 1 917 1-1094 1 238 1 968 1-1136 1-425 1 541 1 894 1-410 1-817 1 1210 1-524 1-860 1 810 1 168 1-785 1-456 1 688 1 977 1 161 1-770 1 881 1-975 1-563 1 2021 1-1405 1-284 1 490 1-529 1-61 1-312 1-936 1 1350 1 691 1 72 1 120 1-1104 1 210 1-71 1 152 1-793 1 284 1 47 1 960 1-202 1 556 1-370 1-419 1 744 1-332 1-1508 1 1251 1 747 1-144 1-659 1-527 1 528 1-542 1 314 1 810 1-1218 1 843 1-1326 1 1403 1-253 1 227 1-157 1-411 1 365 1-779 1 431 1-657 1 858 1-694 1 50 1 763 1-1522 1 581 1 549 1 421 1-67 1 50 1-259 1 803 1-675 1 374 1-1286 1 509 1-513 1-405 1 1079 1-872 1 928 1-144 1 893 1-584 1-764 1 529 1 495 1-218 1 422 1-37 1 433 1-1443 1 9 1 682 1 698 1-625 1-1274 1 1891 1-467 1-18 1-720 1 1172 1-869 1 615 1-264 1 487 1-987 1 577 1 56 1-956 1 424 1-1140 1 1097 1 191 1-23 1-1488 1 851 1 867 1-342 1 473 1-668 1 660 1 31 1-566 1-516 1 283 1 60 1 400 1 1391 1-1272 1 24 1-420 1-690 1 563 1 1418 1-1000 1 148 1-541 1 443 1 1049 1-570 1-330 1 980 1-1090 1 93 1-769 1 675 1 288 1-282 1-80 1-541 1 1094 1 738 1-2845 1 1136 1 408 1-1353 1 2026 1-199 1-200 1-527 1 540 1-706 1 645 1-939 1 474 1 1210 1-925 1 632 1-571 1-78 1-1277 1 1412 1 785 1-980 1 727 1-1707 1 639 1-493 1 1126 1 369 1-763 1 953 1-234 1-117 1-351 1 788 1 309 1-1996 1 1128 1-206 1-445 1 89 1 625 1-119 1-1179 1 202 1 291 1-525 1 2030 1-1155 1 234 1 941 1-1296 1-177 1 221 1 1184 1-912 1-247 1 259 1-299 1-126 1-528 1 679 1-1377 1 1385 1-40 1-284 1 489 1 143 1-897 1 1937 1-211 1-2208 1 769 1 111 1 136 1 12 1 705 1-380 1 424 1-1250 1 296 1 227 1-86 1 299 1 585 1-1640 1 605 1 472 1-439 1-391 1 53 1 297 1-95 1 605 1-908 1 232 1-1 1 1291 1-1115 1-14 1-77 1 1953 1-417 1-1233 1 706 1-765 1 276 1-547 1 818 1 292 1-912 1 461 1 518 1 465 1-2950 1 2019 1-68 1 993 1-544 1-494 1-280 1-260 1 881 1-710 1-385 1 959 1-255 1 1001 1-568 1 326 1-1184 1 491 1-1023 1 809 1-354 1 165 1 180 1 737 1-1576 1 1008 1 1013 1-731 1 305 1-1321 1 75 1-280 1-380 1 1643 1 719 1-550 1-783 1 1808 1-1221 1-839 1 985 1-425 1 458 1-1544 1-119 1 1726 1-99 1-571 1-332 1 151 1-135 1-201 1-136 1-398 1 983 1 374 1-236 1-1349 1 808 1 71 1-371 1 62 1-658 1 1848 1-589 1-323 1-38 1 706 1 725 1-789 1 246 1-340 1-705 1 235 1 1080 1-229 1-550 1-552 1 705 1-164 1 1016 1-597 1 180 1-578 1 279 1 358 1 125 1-755 1 507 1-1043 1 577 1 247 1-685 1 1231 1-1231 1 956 1-844 1 823 1 157 1 526 1-1100 1-257 1 1100 1-1851 1 1046 1 650 1-1800 1 1380 1-1089 1 2498 1-2902 1 1147 1 114 1-190 1 862 1-1213 1 284 1 69 1 520 1 347 1-888 1-268 1 398 1 198 1 187 1-720 1-428 1 934 1 408 1-1930 1 2338 1-1054 1 210 1-822 1 842 1 886 1-306 1-722 1 76 1 372 1-60 1 582 1-47 1-495 1 35 1-319 1 602 1-1592 1 1925 1-1523 1 184 1-602 1 115 1 1566 1-972 1-238 1-106 1 247 1 628 1-1080 1 816 1 213 1-391 1 366 1 128 1-458 1-1454 1 1337 1 138 1 307 1-464 1 886 1-965 1 125 1 105 1-224 1 389 1-498 1 73 1-12 1 321 1-508 1 615 1-849 1 808 1-802 1 590 1 165 1 562 1-945 1 157 1 180 1-209 1 159 1 606 1 149 1-1043 1 260 1-774 1-283 1 683 1 109 1 42 1 266 1 429 1 1149 1-1959 1 102 1 319 1-55 1-485 1 30 1 418 1 255 1-490 1-115 1-813 1 1799 1-812 1 796 1-246 1-1617 1 1594 1-167 1 261 1-831 1 741 1 719 1-1043 1-395 1 492 1-105 1 494 1 141 1-545 1 660 1-400 1 318 1-435 1-595 1 480 1-675 1 445 1 288 1 449 1-582 1 731 1-1109 1 1216 1 28 1-309 1 474 1-1029 1 509 1-180 1-624 1 1635 1-1133 1-349 1-384 1 513 1 464 1-927 1 4 1-744 1 36 1 1362 1-911 1 671 1 709 1-996 1-348 1 2114 1-2128 1 1249 1-1409 1 793 1 50 1-720 1 999 1-1400 1 1764 1-208 1 281 1-938 1 353 1-502 1-171 1 174 1-163 1-6 1 681 1 378 1 142 1-998 1 740 1 255 1-74 1-358 1-258 1 280 1 449 1-904 1 1602 1-1099 1-784 1 448 1-531 1 627 1-273 1 311 1 273 1-465 1-340 1 1698 1-665 1 742 1-667 1 204 1-461 1-104 1-721 1-157 1 1175 1-177 1-644 1 731 1-136 1 833 1-1486 1 270 1 704 1 209 1-149 1-865 1 531 1 424 1-515 1-683 1-227 1-54 1 695 1-79 1-22 1-217 1 42 1 892 1-131 1-201 1-628 1 699 1 148 1-1028 1-253 1 1360 1-443 1-742 1 893 1-757 1 1340 1-687 1-503 1-502 1 333 1 1476 1-48 1-382 1-974 1 57 1-204 1 226 1 726 1-112 1 295 1-989 1 1201 1-759 1-105 1-565 1 1145 1-668 1 804 1-1164 1 798 1-32 1 369 1-197 1 23 1-22 1-1014 1 1231 1-706 1-341 1 1130 1 582 1-1502 1 1216 1-501 1-389 1-213 1 310 1 250 1-972 1 440 1-972 1 1617 1-465 1-27 1-334 1 177 1 117 1-1106 1 1211 1-343 1 144 1 456 1-774 1 1490 1-1719 1 1541 1-708 1-237 1 339 1 16 1-981 1-683 1 771 1 503 1 450 1 81 1-1130 1 180 1-242 1 180 1-184 1 1100 1 106 1 130 1-562 1 94 1-173 1 750 1-785 1-361 1 415 1 1581 1-1523 1 191 1-726 1 613 1-451 1 580 1-406 1-367 1 708 1-331 1 84 1-256 1 416 1-338 1 1310 1-908 1-601 1 89 1 928 1-93 1-679 1 21 1-59 1 227 1-24 1-527 1 1116 1 255 1-1355 1 1004 1-821 1 773 1 241 1-1498 1 913 1 758 1-672 1-26 1 22 1-211 1 745 1-489 1-415 1-95 1 301 1 502 1 661 1-1940 1 1458 1-377 1-263 1-244 1 265 1 447 1-438 1-1192 1-244 1 1536 1-488 1 1351 1-1107 1-283 1 572 1-1198 1 532 1 148 1 1822 1-1130 1-748 1 678 1 715 1-666 1-1185 1 475 1-106 1 379 1-802 1 2491 1-907 1-1757 1 489 1 455 1 331 1 829 1-782 1-161 1 442 1-1299 1 195 1 741 1-669 1 533 1-177 1 424 1-1672 1 2246 1-765 1-666 1 5 1 1496 1-382 1-480 1 397 1-73 1-236 1-55 1-710 1 1583 1-1558 1 725 1-458 1 526 1-1525 1 2345 1-1687 1 921 1-122 1-933 1 916 1-626 1-310 1 1157 1-1480 1 430 1 836 1-252 1 529 1-570 1-327 1-75 1 440 1 420 1 72 1 176 1-383 1-498 1 669 1 56 1 213 1-920 1 469 1 769 1-1541 1 28 1 587 1 210 1-179 1 502 1-1088 1-216 1 202 1 446 1 3 1-169 1-663 1 1412 1-438 1 378 1 295 1-871 1-450 1 1235 1-1153 1 177 1 116 1-504 1 1138 1-1281 1 1112 1-508 1 1176 1-1418 1 532 1 335 1 262 1-693 1-635 1 450 1 491 1 240 1 159 1-405 1 719 1-691 1-829 1 652 1 53 1 252 1-740 1 46 1-444 1 1194 1 235 1-285 1 352 1-664 1 216 1 242 1-456 1-594 1 163 1 758 1-374 1-156 1-196 1 567 1 531 1-919 1 741 1-338 1-57 1-669 1 783 1-356 1 212 1 188 1-803 1 755 1-529 1 107 1 1202 1-113 1 846 1-1939 1 20 1 440 1 0 1-115 1 175 1-333 1-1 1 480 1-1301 1 233 1 795 1-1448 1-158 1 679 1 26 1 998 1-151 1 711 1-654 1-784 1 779 1 712 1-1844 1-205 1 255 1 1709 1-1324 1 931 1-388 1-472 1-468 1 1213 1-156 1 515 1-715 1 552 1-269 1-708 1 436 1-75 1-91 1-294 1-329 1 1437 1 251 1-1198 1-101 1-393 1 342 1-534 1 688 1 647 1-925 1 1070 1-116 1-618 1 374 1-671 1 738 1-1243 1 1609 1-976 1 660 1-1060 1 1122 1-757 1 2219 1-1372 1-1350 1 824 1 60 1-453 1-861 1 1982 1-576 1 213 1-657 1 796 1 484 1-21 1-1236 1 254 1-366 1 1390 1-395 1-202 1-789 1 229 1 348 1 472 1-677 1 377 1-772 1-485 1 920 1 700 1-1980 1 987 1 55 1 238 1-33 1 45 1-96 1 995 1-444 1-353 1-135 1-27 1-133 1 1274 1-484 1-169 1-453 1 184 1-1228 1 1334 1-77 1 738 1-1907 1 985 1 111 1 299 1-413 1 247 1-885 1 1143 1-212 1 56 1-634 1 145 1-369 1 250 1-17 1 291 1-480 1 237 1 86 1 1094 1-642 1 125 1 639 1-1767 1-80 1 206 1 291 1-517 1 1789 1-1667 1 1865 1-1235 1 24 1-223 1-79 1-33 1 799 1-13 1 88 1-543 1 267 1 705 1-1440 1 1186 1-367 1 143 1 3 1-749 1 719 1 420 1-437 1 209 1 285 1-1382 1-136 1 1465 1-1698 1-149 1 1816 1-1019 1 394 1-626 1 2127 1-2010 1 559 1-476 1-231 1 1833 1-1305 1-27 1-341 1-302 1 214 1 863 1-836 1 827 1-861 1 532 1 3 1-177 1 975 1-719 1 494 1-1197 1-194 1 1532 1 450 1-1400 1 458 1 203 1-1815 1 1524 1 345 1-423 1-318 1-726 1 714 1 879 1-429 1-1314 1 2018 1-954 1-691 1 512 1 272 1 378 1-589 1-206 1 170 1-453 1 463 1-615 1 649 1-434 1 696 1-1167 1 275 1 317 1 948 1-665 1 1764 1-1453 1-297 1 581 1-579 1-286 1-646 1 1011 1 893 1 441 1-1232 1-601 1-126 1 577 1 428 1 25 1-319 1-130 1-287 1 270 1-1065 1 1043 1-190 1-311 1 54 1 899 1 550 1-181 1-943 1-126 1 140 1-253 1-285 1 1164 1-1877 1-59 1 1070 1 528 1-242 1 936 1-807 1 474 1-406 1 126 1-1345 1 1650 1-661 1 404 1-1123 1 294 1 1461 1-306 1-712 1 506 1-603 1 208 1 655 1-440 1-439 1 310 1-119 1-132 1 279 1-830 1 1475 1-980 1 559 1-521 1-249 1 117 1-22 1-48 1 129 1 430 1-544 1-135 1 60 1 331 1-1 1 1281 1-660 1-348 1-677 1-110 1 595 1 716 1-909 1-282 1 126 1 825 1 215 1-100 1 100 1-1172 1 388 1-1043 1 289 1 360 1 956 1-759 1 120 1 1048 1-77 1-300 1-1128 1 934 1 561 1-830 1-292 1 1026 1-1765 1 1503 1-1020 1 211 1 802 1-347 1-76 1 212 1-628 1 394 1 1014 1-1033 1 702 1-517 1-264 1 196 1-641 1 621 1 251 1-1229 1 518 1 493 1-81 1 232 1-273 1 591 1-1543 1 300 1 1969 1-726 1-517 1 340 1 840 1-1599 1 1067 1-1061 1 129 1-603 1 1367 1-1538 1 1728 1-1545 1 246 1 355 1 864 1-1531 1 457 1 1400 1 529 1-1096 1 112 1-891 1 325 1-102 1 470 1-829 1 863 1 533 1 507 1-1660 1 642 1 627 1-474 1-277 1-615 1 1601 1-977 1-653 1 150 1-197 1-660 1 1609 1-146 1-954 1-311 1 724 1 373 1 474 1-1011 1 153 1 806 1-312 1 259 1-889 1 414 1-789 1-62 1 579 1-490 1 80 1-258 1 1117 1-628 1-693 1 672 1 609 1-378 1-1162 1 1520 1 135 1-872 1 726 1 678 1 7 1-906 1 364 1-1191 1 1175 1 448 1-349 1 263 1-1371 1 1112 1-1302 1 534 1-836 1 1216 1-541 1 1673 1-924 1 157 1-1082 1 730 1-457 1 792 1 326 1-688 1-793 1 773 1-926 1 1085 1 13 1 0 1-54 1 246 1-257 1 326 1 127 1-1458 1 367 1 673 1 173 1 549 1-1229 1 720 1-1485 1 2093 1-1188 1-499 1 998 1-1466 1 585 1 8 1 1057 1-1079 1 10 1 498 1-951 1 833 1 1486 1-1489 1-806 1 1346 1-773 1 791 1-363 1 1548 1-514 1-862 1 160 1 738 1-1469 1 203 1 706 1 681 1-1512 1 614 1-698 1-229 1 849 1-64 1-565 1 586 1 987 1-1476 1 170 1 512 1-624 1 520 1 18 1-687 1 1247 1 141 1-838 1 670 1-1250 1 922 1 568 1-761 1 1047 1-2061 1 800 1-407 1 93 1 183 1 712 1-1048 1 641 1 248 1 729 1-1901 1 869 1 101 1 856 1-1627 1 598 1-641 1 599 1 465 1-812 1 1224 1-10 1-849 1-465 1-212 1 690 1 15 1-184 1 235 1 169 1-572 1 573 1-164 1-808 1 558 1 422 1-694 1 479 1-467 1 878 1-51 1 374 1-1455 1-159 1 122 1 476 1 89 1 248 1-466 1 438 1 472 1-1144 1 57 1 211 1 337 1 180 1-270 1-65 1 781 1-404 1 342 1-1230 1 1397 1-81 1-183 1-590 1 616 1-1518 1 579 1 1772 1-1483 1-70 1 913 1-664 1-98 1 410 1-304 1-248 1 482 1-255 1 644 1-1034 1 715 1-1047 1-478 1 218 1 1210 1-505 1 390 1-407 1 729 1 105 1-544 1 425 1-1147 1 284 1 220 1 273 1 13 1-645 1 506 1 34 1-1050 1 976 1 227 1-19 1-849 1 1001 1-11 1-889 1-39 1-139 1 1280 1-732 1 569 1-557 1 1128 1-780 1-723 1 494 1 1478 1-1927 1 358 1 360 1-152 1 180 1-834 1 670 1 886 1-423 1-1405 1 285 1 185 1 898 1-753 1-278 1 526 1-357 1-231 1 56 1 328 1-6 1 961 1-533 1-638 1-493 1 861 1-511 1 606 1 554 1-793 1-14 1 764 1-16 1-516 1 315 1-573 1 1052 1-1229 1 810 1-548 1 1081 1-1411 1 415 1-1079 1 2132 1 95 1-1440 1-99 1 1514 1-1310 1-228 1-267 1 720 1 948 1 223 1-2281 1 954 1-326 1 738 1-51 1-13 1 412 1-365 1 466 1-395 1-865 1 616 1 396 1-1361 1 239 1 714 1 1011 1-1719 1-9 1 1074 1-1141 1 1278 1-319 1 109 1-364 1 182 1-889 1 1009 1-449 1 225 1-113 1 606 1-447 1-805 1 317 1 1132 1-435 1 342 1-162 1-43 1 328 1-956 1-250 1 425 1 357 1-360 1 522 1-1022 1-733 1 2837 1-1732 1 190 1-83 1 268 1 693 1-805 1 183 1-143 1-58 1 257 1-1578 1 2000 1-485 1 503 1-631 1-967 1 902 1 446 1 280 1-1058 1 710 1-758 1 749 1-92 1-267 1 891 1-1603 1 1325 1-731 1-169 1-1077 1 1063 1-206 1 761 1-207 1-75 1-607 1 1162 1-789 1-1385 1 2157 1 496 1-746 1-219 1-1015 1 664 1-371 1 1047 1-381 1-187 1 642 1-638 1 319 1-288 1 917 1 363 1-1925 1 745 1 77 1-1511 1 883 1 318 1 623 1-583 1 76 1 274 1-950 1 378 1 104 1 781 1-73 1-1016 1 494 1 442 1-492 1 162 1 259 1-144 1-529 1 239 1 673 1-69 1-581 1 755 1-661 1 142 1 663 1 620 1-876 1-463 1-3 1-708 1 704 1 45 1-249 1 456 1-1214 1 1295 1 160 1-200 1-962 1 999 1 110 1-757 1-332 1 899 1-627 1 763 1-1155 1 1390 1-449 1 88 1 281 1-476 1-421 1 844 1-1537 1 933 1-50 1 625 1-397 1-537 1 1065 1-175 1 79 1 270 1-1090 1 807 1-1379 1 1632 1-511 1-218 1 584 1 645 1-837 1-352 1 521 1-684 1 1195 1-1212 1-1009 1 634 1-19 1 761 1 39 1-873 1 821 1-549 1 912 1-766 1 117 1 1349 1-1184 1-384 1 15 1 95 1-514 1 759 1 394 1-942 1-684 1 1387 1-1045 1 953 1 738 1-334 1-18 1-1142 1 597 1 369 1-382 1-717 1 834 1 362 1-608 1 672 1-754 1-275 1 454 1 348 1-310 1 866 1-1685 1-446 1 1321 1 1174 1-782 1 434 1 243 1-978 1 13 1 263 1-979 1 603 1 573 1-787 1 947 1-513 1 270 1-636 1 319 1 176 1-477 1-117 1 129 1-493 1 1221 1-816 1-720 1 938 1 1254 1-1796 1 663 1-480 1 210 1-194 1-340 1 617 1-372 1 1178 1-230 1-434 1-962 1 1360 1-270 1-573 1 673 1 436 1 377 1-1554 1 1082 1-833 1-94 1 853 1-815 1 1460 1-1144 1 525 1-717 1 17 1 10 1-248 1 712 1 455 1-116 1-1262 1 1150 1-391 1-397 1 290 1 469 1 633 1-1722 1 857 1 593 1-556 1-391 1 1137 1-1187 1 74 1-250 1 248 1 569 1 358 1-807 1 183 1-1159 1 1028 1-393 1 198 1 1021 1-1414 1 687 1 557 1-1048 1-464 1 764 1 92 1 203 1-120 1-868 1 580 1-191 1-86 1 1974 1-1742 1-228 1 195 1 962 1-394 1-822 1 147 1-16 1 894 1-797 1-660 1 790 1-735 1 272 1 23 1 842 1-13 1 13 1-1023 1-57 1 1285 1 138 1-792 1-664 1 583 1-204 1 85 1-53 1 399 1-344 1-115 1 445 1-1002 1 1536 1-379 1 257 1-1071 1-11 1 1028 1-461 1 295 1 512 1-313 1-636 1-131 1 725 1-408 1-462 1-311 1 577 1 649 1 426 1-919 1 211 1 152 1 59 1-72 1-399 1-292 1 833 1-1494 1 244 1 931 1-310 1-675 1 1356 1-166 1-4 1 223 1-962 1 519 1-177 1 9 1 157 1-955 1 936 1 385 1 290 1-389 1-483 1 8 1-64 1 392 1-476 1-11 1 923 1-892 1-10 1 383 1-762 1 578 1 451 1-944 1-462 1 1628 1-603 1-531 1 151 1-226 1-164 1 1726 1-1381 1 1290 1-378 1 78 1-872 1 1193 1-981 1 899 1-1955 1 1407 1-285 1 648 1-335 1-1054 1 595 1 785 1-367 1-192 1-1067 1 1044 1-309 1-345 1-743 1 970 1 959 1-44 1-1506 1 724 1 1303 1-788 1-30 1-65 1-551 1-16 1-374 1 1808 1-1224 1 280 1 480 1-1066 1 1215 1 34 1-1685 1 677 1-232 1-276 1 1454 1-1487 1 711 1-244 1-152 1 94 1 572 1-206 1-100 1-502 1 1834 1-2037 1 1318 1-1747 1 952 1-716 1 1114 1-1102 1 737 1 1 1-22 1 1659 1-568 1 79 1-960 1 173 1-589 1 265 1-501 1 1096 1-595 1 481 1 376 1 343 1-943 1 468 1-219 1 241 1 78 1-2210 1 1568 1 765 1-629 1-121 1 843 1-1428 1 1122 1-817 1 558 1 199 1-2284 1 2177 1 517 1-567 1 271 1-1180 1 370 1 919 1-1671 1 1130 1 614 1-1362 1 247 1 948 1 67 1-552 1 293 1-694 1 151 1 838 1-60 1-475 1-880 1 1102 1-704 1 708 1-614 1 573 1-564 1 747 1-81 1-1526 1 576 1 1239 1-1381 1 766 1-866 1 1534 1-706 1 189 1 155 1 263 1-1770 1 1110 1 176 1 763 1-1583 1-4 1 737 1 686 1-1110 1 326 1 830 1-2022 1 775 1 980 1-104 1-910 1-234 1 340 1 37 1 510 1-1400 1 1337 1-288 1-92 1 376 1-605 1-441 1 2152 1-1150 1-837 1-88 1 1069 1-651 1 275 1 24 1 442 1-932 1-112 1-228 1 759 1 72 1-568 1-1249 1 2024 1-83 1-1057 1 1652 1 797 1-2007 1-236 1 39 1 182 1-54 1 1020 1-993 1 1166 1 326 1-765 1 608 1-106 1-257 1-132 1-319 1 667 1-241 1-252 1-177 1-180 1-169 1 309 1-128 1-125 1 392 1-113 1 623 1-651 1-428 1 934 1-1124 1 1043 1-906 1-343 1 826 1 352 1-478 1 482 1 291 1-1111 1 1687 1-1608 1 958 1-973 1 820 1-1330 1 1327 1 994 1-2947 1 1651 1 90 1-66 1 177 1-351 1 601 1-1675 1 1641 1-767 1-396 1 893 1-625 1 807 1 259 1-110 1-1077 1 20 1 1118 1-1099 1 1098 1-620 1-295 1 1575 1-1530 1 528 1 673 1-1232 1 225 1-39 1 362 1 228 1 369 1-619 1 469 1-346 1-483 1-224 1 213 1 80 1 319 1-696 1-131 1 952 1-32 1 310 1-389 1 79 1-1364 1 341 1 1548 1-1215 1 578 1 856 1-1137 1 533 1-563 1-122 1 669 1-1224 1 775 1 525 1 485 1-2200 1 1725 1-493 1-126 1-344 1 1278 1 620 1-1449 1 913 1-691 1-1336 1 1517 1-724 1 1021 1-2339 1 1920 1-443 1 308 1 268 1-958 1 744 1 394 1-216 1-131 1-226 1-23 1 546 1-172 1-1474 1 1334 1-922 1 1030 1-454 1 564 1 775 1-813 1-816 1-221 1 111 1 932 1-127 1 470 1-811 1-309 1 339 1 557 1-656 1 174 1-220 1 379 1-222 1 529 1 64 1 971 1-1573 1 29 1 642 1-1434 1 183 1-287 1 1045 1 78 1-336 1-345 1-334 1 1411 1-453 1 1063 1-1011 1-673 1 127 1-958 1 959 1 633 1 190 1-585 1-797 1 1667 1-171 1-595 1 241 1-708 1 779 1-293 1 32 1-130 1-660 1 1527 1 251 1-138 1-688 1-234 1-240 1 127 1 105 1 1096 1-643 1-625 1 957 1-432 1-29 1-530 1 786 1 456 1-749 1-45 1-643 1 823 1-212 1 164 1-21 1-1465 1 2645 1-1794 1 795 1-500 1 926 1-996 1 578 1-785 1-460 1 1498 1 204 1-1578 1-463 1 1115 1 1192 1-291 1-1445 1-459 1 1080 1 702 1-1436 1 1441 1-388 1-30 1 6 1-678 1 866 1-641 1-539 1-1 1-148 1 987 1 765 1-1088 1-22 1-36 1 388 1-484 1 850 1-1058 1-547 1 935 1 46 1-334 1 49 1-13 1 210 1 277 1-1062 1 1587 1-1329 1 1134 1-763 1 818 1 341 1-293 1-36 1-1318 1 1110 1 57 1 159 1-541 1-4 1-333 1 718 1 292 1-651 1-534 1 71 1 991 1-280 1-475 1 521 1 471 1-912 1 314 1-372 1-316 1 765 1 367 1-215 1-875 1 385 1-387 1 640 1-619 1 695 1 90 1-361 1 66 1 66 1-166 1-515 1 927 1 615 1-1234 1-837 1 473 1 1279 1-938 1-377 1 123 1-527 1 553 1 2071 1-1914 1 766 1 88 1 450 1-247 1-519 1-834 1-27 1 272 1-327 1 932 1 253 1-1569 1 824 1 466 1-629 1 853 1-1327 1 1648 1-439 1-202 1 7 1 602 1-1207 1 135 1 322 1-298 1 595 1-819 1 880 1 283 1-509 1 11 1-315 1-186 1-582 1 1728 1 150 1-1075 1-587 1 156 1 647 1 74 1 28 1-1178 1 1127 1-303 1 881 1-1224 1 598 1 75 1 19 1-96 1-1618 1 1193 1-29 1 807 1 371 1 419 1-888 1-431 1-35 1 958 1-1197 1 688 1-961 1 787 1-172 1 441 1-27 1-411 1-306 1-82 1 809 1 303 1-944 1-488 1 1006 1-37 1 9 1-442 1-352 1 1072 1-777 1-566 1 474 1 771 1 385 1-842 1-745 1 312 1-363 1 1019 1-243 1 491 1-768 1 421 1 333 1-227 1-537 1-178 1 52 1-873 1 887 1 942 1-1127 1 1086 1 138 1-1025 1 735 1-335 1 288 1-179 1 869 1-1482 1-184 1 823 1-838 1 216 1-190 1-160 1 1522 1-1149 1 539 1-509 1 575 1-1311 1 226 1 940 1-257 1 120 1-15 1-380 1 1069 1 254 1-1431 1 436 1 449 1 126 1 453 1-676 1 815 1-1049 1-79 1 539 1-947 1 147 1 317 1 534 1-51 1 165 1 575 1-1105 1-403 1 1268 1-1054 1 342 1-201 1-340 1-113 1 905 1-804 1 658 1 1211 1-2592 1 1129 1 202 1-939 1 502 1 576 1-437 1-64 1 298 1 1232 1-1429 1 617 1 61 1-618 1-1190 1 1894 1-851 1 1013 1 73 1-703 1-727 1 361 1 0 1-532 1 415 1 608 1 208 1-366 1-372 1 385 1-50 1 182 1 138 1 224 1-229 1-1458 1 398 1-174 1 717 1 135 1-530 1 674 1-860 1 571 1-374 1 888 1-1469 1 912 1-260 1 799 1-32 1-787 1 1326 1-1633 1 1040 1-882 1 916 1-344 1-74 1-471 1 1002 1-796 1 146 1-271 1 911 1-475 1 418 1-201 1-821 1-65 1 1197 1-434 1-50 1 494 1-314 1 384 1-920 1 853 1-1336 1 1908 1-1431 1-20 1 712 1 592 1-1059 1 792 1-1306 1 554 1 71 1-71 1-361 1 437 1-321 1 103 1 500 1-915 1-279 1 277 1 557 1-315 1 983 1-136 1 33 1-167 1-797 1 933 1-105 1 491 1-459 1 548 1-1436 1 590 1-609 1-245 1 502 1 76 1 113 1 315 1 977 1-1320 1 494 1 165 1-232 1-311 1-401 1 943 1 150 1-1308 1 293 1-137 1 599 1 626 1-1519 1 45 1 1031 1-567 1-381 1-780 1 715 1 362 1 430 1 133 1-222 1 336 1-727 1 274 1 210 1 432 1-628 1 249 1-406 1 746 1-908 1 442 1-1136 1 1497 1-1529 1-526 1 1636 1-1163 1 503 1 1312 1-369 1-884 1 393 1-321 1 248 1-579 1 950 1 457 1-218 1-357 1 490 1-488 1 101 1 58 1-151 1 194 1-770 1 497 1-374 1 1235 1-820 1 282 1 826 1-2233 1 1878 1-1196 1 39 1-226 1 893 1 1183 1-1783 1 410 1-427 1 455 1-811 1 432 1 485 1-1543 1 1679 1 891 1-1292 1-203 1-51 1 620 1-293 1 462 1-238 1-605 1 663 1-693 1 540 1-187 1 230 1-821 1 576 1 505 1-509 1-591 1 514 1 740 1-167 1 156 1-1337 1 660 1-386 1 29 1 644 1-797 1 681 1-243 1 1312 1-1071 1 179 1 201 1-541 1 827 1-558 1 1282 1-1299 1 265 1-1358 1 867 1-228 1 1973 1-1393 1 411 1-1389 1 196 1 474 1-24 1 35 1 90 1-394 1 33 1 416 1 323 1-1313 1 1144 1 167 1-1709 1 1239 1 142 1 673 1-178 1-1354 1 948 1-830 1 1248 1-1068 1 372 1 310 1 759 1-1749 1 671 1 87 1-512 1 1058 1-1362 1 339 1 137 1-27 1 709 1-280 1-344 1 534 1-1047 1 298 1-321 1 1626 1-1710 1 1141 1 155 1-266 1-958 1 537 1 32 1-356 1-25 1-40 1 118 1 356 1-118 1 1054 1-676 1 1148 1-1178 1-109 1 482 1-130 1-882 1 788 1-205 1-1055 1 884 1-332 1 265 1-65 1-316 1 759 1-541 1 692 1-39 1-574 1 691 1 1121 1-1330 1-847 1 1283 1-888 1 537 1 641 1-665 1 1102 1-1940 1 884 1-425 1 215 1 827 1-605 1-878 1 208 1 661 1 195 1-360 1 682 1-863 1 1053 1-493 1-887 1 472 1 363 1-445 1 229 1-287 1-463 1 658 1 888 1-1180 1 681 1-1084 1 93 1 553 1-264 1 1067 1 154 1-775 1-382 1-563 1 1125 1 141 1-40 1-60 1-511 1 889 1-1213 1 1151 1-1984 1 1326 1-124 1 971 1-1080 1 1220 1-1526 1 823 1-494 1-144 1-236 1-230 1 122 1 212 1 753 1 290 1-1043 1 231 1 470 1-258 1-551 1 19 1 835 1 395 1 335 1-808 1-81 1 560 1-1323 1-462 1 1475 1-835 1 473 1-381 1 220 1 142 1-570 1 135 1 617 1-499 1 602 1-311 1-358 1 77 1 1118 1-1185 1 988 1-785 1-268 1 1219 1-236 1-1045 1 277 1 1325 1-1681 1 871 1 310 1-793 1 493 1-373 1-121 1-1200 1 831 1 370 1 88 1-138 1-78 1 617 1-629 1 664 1-67 1-264 1-614 1 107 1 2097 1-2310 1 638 1-11 1-763 1 1206 1 180 1 520 1-443 1-1108 1 905 1 125 1-789 1 779 1-141 1 28 1-667 1 606 1-104 1-175 1 916 1-877 1 863 1-336 1-399 1-325 1 207 1-726 1 521 1-251 1 581 1 93 1-1285 1 1837 1-1555 1 1063 1-785 1 1084 1-988 1 99 1 1342 1-811 1-712 1-206 1 397 1 478 1-285 1 690 1-169 1-673 1 126 1-392 1 290 1-224 1 379 1-395 1-1020 1 1899 1-621 1 332 1-533 1 18 1 702 1-535 1-31 1 176 1-237 1-593 1 428 1 478 1-277 1-973 1 1446 1-962 1 988 1 515 1-502 1-569 1 318 1 257 1 46 1 99 1 56 1-251 1 1042 1-1614 1 79 1 104 1-447 1 832 1-324 1 1434 1-1541 1 325 1-555 1-133 1 566 1 601 1-884 1-281 1-36 1 794 1 220 1-359 1 426 1 616 1-1390 1-40 1-120 1 836 1-451 1 650 1 148 1-1076 1 1267 1-817 1-1491 1 629 1 299 1 37 1 446 1 215 1-1442 1 1222 1 218 1-696 1 400 1-752 1 1068 1 106 1-235 1-1108 1 368 1 369 1 94 1-141 1 726 1-819 1 553 1-402 1 116 1-157 1 422 1-781 1 328 1 623 1-669 1 431 1-401 1-256 1 737 1-252 1-55 1 15 1-1101 1 928 1 824 1-692 1 363 1-1649 1 1695 1 262 1-1016 1 692 1-77 1-82 1 243 1-144 1 984 1-1158 1-412 1-676 1 994 1-422 1 856 1-1207 1-432 1 1052 1 371 1-217 1-828 1 1541 1-1393 1 1255 1-93 1-605 1-208 1-178 1-255 1 1412 1-665 1-386 1 275 1-472 1 601 1 184 1 1074 1-200 1-1472 1 1070 1-804 1-189 1 424 1-623 1 915 1-682 1 395 1 752 1 287 1-1000 1-1006 1 257 1 380 1-178 1-57 1 633 1-860 1 580 1 427 1-2418 1 1767 1 435 1-491 1 1097 1 5 1-1741 1 718 1 945 1 303 1-840 1 523 1-1313 1 1806 1-1749 1 1249 1 131 1-718 1 730 1-378 1-14 1 1042 1-689 1-851 1 1349 1-395 1-248 1-1025 1 0 1-319 1 1371 1-994 1 324 1 859 1-1017 1 296 1 367 1 235 1 299 1-1185 1 32 1 410 1 54 1 121 1-762 1 317 1 1108 1-1047 1-216 1 601 1-70 1 64 1-685 1 580 1-210 1-64 1-819 1 1712 1-2154 1 1986 1-555 1 332 1-529 1-236 1-1001 1 639 1 1051 1-505 1 56 1 441 1-707 1 182 1 400 1 138 1-787 1 464 1-736 1 185 1 1166 1 502 1-1207 1 405 1 203 1-176 1-1221 1 938 1-1193 1 629 1 1417 1-1229 1-588 1 1841 1-288 1-653 1 247 1-1264 1 1440 1-1446 1 1749 1-307 1-669 1-107 1 206 1-822 1-118 1-88 1 1165 1-549 1 648 1-963 1 2115 1-940 1-247 1 154 1-1174 1 1684 1-324 1 217 1-655 1 489 1-1045 1 28 1 1697 1 10 1-1665 1 241 1 1122 1-880 1 680 1-1153 1 1199 1-396 1-617 1 240 1-566 1 358 1 1082 1-980 1 771 1-1454 1-75 1 250 1-600 1 790 1-382 1 300 1 33 1 10 1 324 1-853 1 1635 1 271 1-451 1-1332 1 1049 1 309 1 18 1-739 1 293 1-709 1 861 1-698 1 1003 1-793 1-1413 1 1828 1-41 1-621 1 1108 1-300 1 49 1-452 1 918 1-1582 1 731 1-28 1 196 1-73 1 1286 1-2025 1 1217 1-963 1 552 1 31 1-400 1-668 1 1003 1 273 1-591 1 1660 1-909 1 74 1-354 1 568 1-1249 1 651 1-253 1 70 1 186 1 192 1-1098 1 261 1-376 1 934 1-247 1-46 1 388 1-164 1 892 1-242 1-152 1 125 1-888 1 39 1-25 1 377 1-717 1 53 1 195 1 511 1-1060 1 1542 1 250 1-186 1-1415 1 627 1 386 1 978 1-1183 1 433 1 619 1-1794 1 596 1-765 1 793 1-326 1 706 1-742 1 579 1-571 1 223 1 738 1-631 1-82 1 489 1-331 1-588 1-172 1 659 1 1317 1-1704 1-614 1 1168 1 352 1-655 1 52 1-379 1 851 1-1338 1 468 1 1087 1-1156 1 657 1-464 1 185 1 176 1-148 1 416 1 176 1-282 1 28 1-381 1 115 1 1019 1-1384 1 496 1-508 1 99 1 230 1-165 1 1125 1-1680 1-217 1 731 1 648 1-682 1 581 1-1107 1 1163 1 406 1-189 1-47 1-823 1 430 1-181 1 346 1-932 1 732 1-116 1-761 1 716 1 461 1-156 1-777 1 425 1 649 1-1094 1 1478 1 389 1-656 1 512 1-952 1-130 1 170 1 172 1 270 1-1113 1 1625 1-1512 1 264 1 184 1-290 1 1126 1-1424 1 263 1-339 1 1785 1-1300 1 217 1 1220 1-1106 1-218 1 474 1-659 1-101 1 569 1-56 1-628 1 985 1-834 1-465 1 765 1-228 1 195 1-447 1 1308 1 114 1-478 1-135 1-892 1-225 1 444 1-375 1 931 1 73 1 565 1-1519 1 352 1 325 1 736 1-184" stroke="#2E91E5" stroke-width="13.23" fill="none"/><path transform="translate(465.65 527.8) scale(0.10583)" d="M0 856l1-118 1 60 1-417 1-1268 1 1868 1-1559 1-195 1 991 1 211 1-718 1-455 1-576 1 774 1-430 1 1252 1 260 1 517 1-346 1-484 1-341 1 922 1-1304 1 563 1 330 1 76 1-1707 1 1134 1 654 1 34 1-1710 1 1480 1-1082 1-144 1 2296 1-2252 1 956 1 536 1-331 1-677 1 115 1-32 1 705 1-1228 1-136 1-203 1 510 1-547 1-123 1 852 1-109 1 183 1 19 1-191 1 1576 1-849 1-497 1 1590 1-408 1-1854 1 1620 1-365 1-514 1 522 1 235 1-211 1-54 1 93 1-467 1-874 1 768 1-777 1 542 1-59 1 153 1 542 1-441 1 72 1 867 1-1139 1 104 1 128 1 568 1 1271 1-2512 1 942 1 1291 1-1732 1 826 1-849 1 483 1-757 1 552 1-28 1 79 1-662 1 1548 1-1515 1 299 1 762 1-339 1 273 1-310 1-540 1 992 1-871 1-121 1 186 1-567 1 1001 1-468 1-1094 1 1501 1 102 1-88 1-356 1 738 1-229 1 925 1-432 1-18 1 86 1-439 1-697 1 660 1 576 1-959 1 44 1 963 1-950 1 749 1-271 1 65 1-954 1 1008 1-309 1-308 1-521 1-91 1 1348 1-1350 1 543 1-549 1 86 1 972 1-350 1 204 1-410 1-784 1 980 1 440 1-1959 1 2161 1-609 1 9 1 769 1-1263 1-166 1 701 1-85 1 135 1 979 1-1228 1 911 1-176 1-829 1-324 1 1098 1-1229 1-384 1 977 1 151 1-171 1 370 1 277 1-918 1-46 1 747 1-59 1 133 1 48 1 163 1 330 1-1475 1 768 1-256 1-1054 1 1392 1-649 1 1178 1-442 1-806 1 584 1 715 1 63 1-1141 1 774 1-981 1 247 1 362 1-154 1-497 1 437 1 597 1-779 1 417 1-74 1-486 1 147 1-418 1 729 1 163 1-70 1-434 1 714 1-269 1 292 1-41 1-361 1-1563 1 1685 1-386 1 98 1 162 1-124 1-1158 1 1333 1-1119 1 573 1 910 1-133 1-113 1 375 1-1338 1 440 1-69 1 930 1-893 1 600 1-1774 1 1507 1-224 1-78 1 531 1-50 1 2 1-744 1 944 1-340 1-292 1 441 1 571 1-104 1-463 1 329 1-1151 1 566 1 25 1 587 1-914 1 526 1 354 1-186 1-1799 1 1781 1 155 1-1202 1 246 1 610 1-990 1 1692 1-586 1 691 1-1788 1 788 1-1514 1 1267 1-9 1 956 1 33 1-410 1-824 1 1159 1 799 1-1918 1-34 1 1091 1-805 1-402 1-28 1 1631 1-968 1 499 1-1030 1 520 1 776 1-779 1-290 1 1280 1-115 1-400 1-221 1 159 1 756 1-157 1-911 1-269 1 776 1-630 1-1027 1 1249 1 136 1 156 1-706 1 142 1-16 1 372 1-472 1-5 1 332 1-781 1 1623 1-1361 1 500 1-581 1-638 1 1107 1 142 1-104 1-845 1-97 1 823 1-290 1-693 1 753 1 1222 1-412 1-201 1-529 1 573 1-1175 1 1120 1-1232 1 1337 1-1206 1 694 1-745 1-326 1 124 1 424 1 1077 1 37 1 1428 1-2809 1 122 1 145 1 1300 1-2353 1 2072 1-933 1 1503 1-610 1-1115 1 118 1 1279 1-604 1-731 1 1795 1-1581 1 1406 1-1321 1 541 1-752 1 912 1-96 1 5 1 370 1-407 1 451 1-273 1-754 1 612 1-848 1 223 1-74 1 1197 1-944 1-625 1 325 1-195 1-179 1 1846 1-1268 1 13 1 453 1 679 1-887 1 186 1-1285 1 390 1 1048 1 392 1-126 1-485 1 410 1-1646 1 1930 1-672 1-144 1-165 1 816 1-428 1-248 1-91 1 554 1-169 1-321 1-1032 1 1896 1-1158 1-539 1 1809 1-1732 1 21 1 815 1-549 1-318 1 990 1-233 1 788 1-233 1-465 1 96 1-1038 1 1114 1 600 1-1276 1-22 1 318 1 324 1 396 1-87 1-1319 1 450 1 412 1-192 1 464 1 353 1-274 1-253 1 967 1-119 1 178 1-773 1-641 1 1188 1-115 1 287 1-688 1 444 1-107 1 60 1-2036 1 1426 1 344 1-123 1-802 1-64 1 429 1 1358 1-1793 1-52 1 177 1 184 1 240 1-683 1 913 1-819 1 925 1-59 1 37 1 69 1-41 1-757 1-488 1 1376 1 204 1-1391 1 962 1-371 1 77 1-460 1 1089 1-1232 1 211 1 1821 1-1238 1 134 1-462 1 270 1 419 1-246 1-422 1 188 1 119 1-1441 1 1025 1 1000 1-750 1-126 1 800 1-672 1 581 1 838 1-1558 1-173 1 6 1 464 1 270 1-502 1-117 1-298 1-256 1 322 1 840 1-318 1 818 1-1288 1 83 1-371 1 425 1-657 1 1373 1-623 1 352 1-17 1 940 1-619 1 756 1-1003 1 224 1-501 1 1187 1-786 1-159 1 1245 1-2384 1 702 1 757 1-1604 1 324 1 2317 1-1316 1 198 1-404 1 603 1-417 1-205 1 1562 1-1588 1-778 1 775 1-623 1-266 1 784 1-64 1-11 1 501 1-1640 1 1108 1-72 1-241 1-320 1 1723 1-203 1-710 1-231 1 1053 1 99 1-1301 1 30 1 615 1 3 1 213 1 332 1-179 1-632 1 217 1-698 1 1394 1 233 1-1378 1 921 1-379 1-206 1 785 1 170 1-1094 1 1818 1-2029 1 1462 1-1570 1 302 1 46 1-156 1 213 1 920 1-1338 1 423 1-205 1 362 1 77 1-719 1-11 1 429 1 873 1-165 1 44 1-1296 1 367 1 262 1 126 1 356 1-947 1 1126 1-119 1-1033 1 127 1 422 1 726 1-2 1-1287 1 284 1-678 1 1188 1-239 1 522 1-1579 1 2030 1-1402 1-606 1 1562 1 296 1-261 1 252 1-1078 1 268 1 498 1-382 1-1093 1 1074 1 89 1-1426 1 1727 1-257 1-1181 1 877 1 1188 1-632 1 848 1-977 1-588 1 1202 1-1940 1 167 1 282 1 937 1-465 1-320 1-248 1-196 1 2105 1-887 1 275 1-502 1-336 1-1277 1 1464 1-613 1 487 1 90 1-1092 1 1752 1-1096 1-858 1-829 1 2415 1 255 1 202 1-520 1-251 1-9 1-683 1 886 1-388 1 1213 1-608 1-312 1 1360 1-1527 1-468 1 494 1-85 1 136 1 731 1-762 1 373 1-402 1 13 1-29 1 884 1-774 1-1111 1 499 1 719 1 306 1-1056 1 611 1 1091 1-815 1-1308 1 2075 1-1075 1 505 1-422 1 217 1 288 1 1045 1-1449 1-151 1 104 1 574 1-276 1-1744 1 2060 1-491 1 568 1-631 1-291 1-596 1 610 1 134 1-222 1-126 1 369 1-10 1-768 1 1195 1-389 1 516 1-248 1-1234 1 1351 1-749 1-986 1 978 1 422 1 381 1 1089 1-978 1-18 1-1157 1 162 1 1228 1-1180 1 775 1-1518 1 212 1 494 1 652 1-1337 1 542 1-178 1 374 1 484 1-650 1 993 1-1002 1 375 1 1130 1-1316 1 333 1 207 1-185 1-530 1 1180 1-39 1-1108 1 337 1 1180 1-1136 1 1121 1-1472 1 258 1-124 1 1245 1-453 1-1011 1 1394 1-1177 1 455 1-222 1 600 1-876 1 124 1-282 1-1002 1 1653 1-179 1 689 1-1724 1 1290 1-695 1 1171 1-546 1-528 1 73 1 461 1-726 1 477 1-581 1 791 1-548 1 686 1-1075 1 780 1-36 1 386 1-975 1 524 1 234 1-949 1 1281 1-1072 1-316 1 1981 1-1609 1 218 1 215 1-94 1 969 1-1053 1 168 1 1054 1-794 1 624 1-798 1 605 1-611 1 945 1-543 1-77 1-120 1-827 1-637 1 2266 1-1445 1 680 1 8 1 10 1-94 1-41 1-565 1-273 1 560 1 187 1-323 1 103 1-863 1 1689 1 268 1-680 1-344 1 323 1-266 1 1712 1-1097 1-59 1 418 1-444 1-220 1-373 1 800 1 450 1-1248 1-919 1 1074 1 19 1 673 1-726 1-825 1 2138 1-1799 1 1791 1-2081 1 399 1 680 1-360 1-833 1 1644 1-1361 1 355 1 349 1-873 1 1861 1-919 1 648 1-691 1-354 1 1291 1-1137 1-4 1 526 1-306 1-704 1 465 1-793 1 1616 1 123 1-1476 1 1527 1-1540 1 741 1-414 1 611 1-836 1-177 1 71 1 430 1 1090 1-1379 1 517 1-733 1 1702 1-1178 1 531 1-247 1-546 1 30 1-363 1 574 1-51 1 135 1 879 1-1334 1 1137 1-183 1-570 1 666 1-127 1 1218 1-964 1 146 1-287 1-698 1 488 1-80 1-148 1-544 1-44 1 394 1 396 1-680 1 707 1-70 1-292 1 474 1 361 1 82 1-557 1-311 1-256 1 845 1-596 1 107 1 282 1-1771 1 1938 1 55 1-582 1-841 1 1134 1-1015 1 1396 1-371 1-123 1 37 1-186 1 88 1 57 1 464 1-886 1 262 1-122 1-560 1 396 1 154 1-697 1 1093 1 660 1-584 1 383 1-575 1-10 1-98 1-206 1-202 1 115 1 166 1 266 1 115 1-276 1 144 1 484 1-388 1-646 1 377 1 516 1-621 1-228 1 991 1-1592 1 298 1 752 1-739 1 494 1-216 1 873 1-229 1-148 1-75 1 224 1 634 1-271 1-888 1 482 1-1190 1 186 1 912 1-245 1 1172 1-1457 1-231 1 1077 1 7 1-118 1-746 1-178 1 1161 1-344 1-524 1 180 1 296 1-468 1 814 1 333 1-1204 1-69 1-332 1 925 1 304 1-522 1 85 1-83 1 84 1-808 1 587 1-593 1 1171 1 173 1-1100 1 1218 1-34 1-8 1 408 1-1320 1-693 1 638 1-153 1 675 1 354 1-855 1 971 1 217 1-382 1-1098 1 393 1 359 1 480 1-73 1-731 1 238 1 400 1-1098 1 1035 1 554 1-778 1-761 1 213 1-127 1 1003 1-720 1 179 1 221 1 520 1-1369 1 651 1 378 1-743 1-1033 1 2332 1-1016 1-898 1-9 1 1659 1-285 1 882 1-1161 1 890 1-277 1-1430 1 1518 1 335 1-1050 1-116 1-19 1-553 1 1079 1-330 1-458 1 613 1-1059 1 239 1 547 1 121 1-131 1-167 1 1340 1-392 1-290 1 40 1-121 1-13 1-397 1 242 1-387 1 17 1 220 1 217 1 191 1-883 1 726 1-391 1-336 1 350 1 1056 1-477 1-1591 1 2112 1-1677 1 1379 1-688 1-569 1 1217 1-1172 1 1889 1-1203 1 286 1-610 1-212 1-238 1 28 1 910 1 293 1-783 1 569 1 928 1 46 1-1024 1-2 1-283 1-68 1 1060 1-1112 1 849 1-929 1 268 1-937 1 706 1 535 1-171 1-173 1-313 1-118 1 959 1 82 1-1043 1 426 1-626 1 335 1-715 1 613 1 1094 1-470 1-578 1 944 1-629 1-391 1-262 1 140 1 1394 1-1578 1 1210 1-574 1 527 1-1037 1 583 1-183 1-118 1 295 1 328 1-1211 1 488 1-112 1 1480 1 140 1-2141 1 559 1 1451 1-1273 1 196 1 627 1-324 1-1314 1 1485 1-699 1 753 1 423 1-2306 1 1019 1 675 1-63 1-53 1 459 1-871 1-108 1 616 1-214 1 730 1-905 1 1301 1-1091 1-907 1 1014 1-1750 1 2221 1-494 1-133 1-551 1-166 1 598 1 984 1-1717 1 452 1-89 1 1396 1-1201 1 377 1-658 1-445 1 1501 1-429 1-81 1 469 1-763 1 19 1 811 1-15 1-648 1 1179 1-1212 1-316 1 2 1 1033 1-1575 1-169 1 1840 1-1649 1 234 1 234 1 949 1-1029 1 1216 1-671 1-452 1 169 1 450 1-383 1 282 1-238 1 598 1 231 1-355 1 387 1-1357 1-839 1 1092 1-280 1 1275 1-527 1 563 1-1011 1 302 1 641 1-1382 1 828 1-467 1-66 1-303 1 82 1 716 1 155 1 242 1 240 1-1596 1 1332 1-1119 1 1305 1-78 1-952 1 658 1 370 1-1370 1 1652 1-262 1-842 1-469 1 868 1 477 1-1743 1 1266 1 367 1-424 1-603 1 2275 1-1004 1-1005 1 101 1 273 1 115 1-419 1-281 1 933 1-82 1-677 1 626 1 557 1-644 1 524 1-979 1-152 1 852 1-294 1-281 1-516 1 129 1 410 1-61 1-579 1 390 1 66 1 900 1-725 1-147 1 203 1 628 1 438 1-1371 1-14 1 280 1 580 1-244 1-221 1-465 1 364 1 514 1-173 1 377 1-1695 1 1430 1-1228 1 656 1-882 1 1641 1-1032 1 930 1-12 1-84 1 335 1-235 1-356 1-1080 1 1182 1 620 1-1216 1-430 1 2234 1-1712 1 1064 1 259 1-1419 1-464 1-220 1 1027 1 224 1-318 1-241 1-178 1-277 1 538 1-109 1 203 1 557 1-685 1-594 1 410 1 1658 1-2109 1 1368 1-1796 1 82 1 832 1-668 1 1537 1-351 1 291 1-601 1 176 1-97 1 70 1-782 1 851 1 260 1-305 1-204 1 23 1 851 1-299 1-100 1 366 1 399 1-563 1 1173 1-1344 1 578 1-551 1-105 1-1187 1-52 1-146 1 1235 1 337 1-777 1 1095 1-548 1 392 1-414 1-468 1 1068 1-777 1 44 1-18 1-155 1 515 1-180 1 160 1 696 1-1769 1 460 1 15 1 775 1 638 1-1177 1 685 1-1574 1 33 1 1315 1-1087 1 359 1 465 1 862 1-1265 1-166 1-21 1 833 1-344 1-13 1 8 1 373 1-989 1 293 1 558 1-479 1-320 1 367 1 15 1-270 1 897 1-848 1 790 1-507 1-601 1 979 1-939 1 286 1-416 1 1666 1 1396 1-1721 1-1765 1 1028 1 320 1-171 1-252 1 361 1-1450 1 1278 1 842 1-20 1-680 1-63 1-483 1-74 1-43 1 1194 1-845 1 633 1-483 1 712 1-1379 1-44 1 609 1 759 1-1170 1 443 1 965 1-1167 1-132 1 229 1 1327 1-1445 1-153 1 912 1-982 1 337 1-267 1 1579 1-839 1-451 1 1159 1-941 1-937 1 1910 1-1728 1 301 1 1048 1-47 1 43 1-698 1 1557 1-1762 1 1289 1-674 1 41 1-700 1 1034 1-97 1-1183 1-268 1 1001 1 182 1-358 1 112 1 39 1 595 1 723 1-1442 1 174 1-703 1 14 1-311 1 1268 1-724 1 1166 1-885 1-144 1 729 1-365 1-1508 1 1947 1-1118 1 832 1-748 1 2057 1-746 1-628 1-1131 1 1081 1 637 1-470 1-720 1 1377 1-951 1 151 1 123 1-483 1 685 1-790 1-37 1-655 1 818 1 237 1 615 1-340 1 450 1-1587 1 2186 1-1627 1-26 1-119 1 651 1-1572 1 1504 1 748 1-547 1 48 1-1211 1 796 1 521 1 2 1-460 1 185 1-217 1-660 1 1413 1-424 1-542 1 1020 1-1267 1-446 1 731 1-424 1 681 1-222 1-160 1 181 1-752 1 994 1-813 1 792 1-1196 1 116 1 608 1 1034 1-290 1 1071 1-2068 1 786 1 172 1-455 1 880 1-575 1-389 1-472 1-760 1 1814 1-1036 1 918 1 255 1-837 1 252 1 875 1-886 1-1205 1 1626 1-2 1-1206 1 583 1 591 1-738 1 601 1 152 1-703 1 769 1-1000 1-485 1 1348 1 22 1 22 1-409 1 453 1-527 1-418 1 1131 1-790 1-558 1 186 1 1054 1-1308 1 1338 1-1183 1 1560 1-1320 1 549 1 21 1 38 1 351 1-856 1 179 1-397 1 994 1-936 1-169 1 1145 1-1287 1-176 1 1635 1-159 1-2036 1 1262 1 286 1 475 1-956 1 666 1-507 1 114 1-160 1-113 1 566 1-445 1-80 1 513 1 280 1-592 1-779 1 1054 1 171 1-466 1 462 1-325 1 69 1 321 1-547 1 726 1-65 1 567 1-528 1-593 1-563 1-1106 1 1883 1 199 1-1429 1 2032 1-1387 1 352 1-789 1 1092 1-220 1 1123 1-635 1-336 1 317 1 95 1-1047 1 1509 1 128 1-103 1-431 1 141 1-372 1 244 1-1458 1 1462 1-326 1-441 1-1048 1 1471 1 223 1-921 1 835 1 685 1-11 1-656 1 554 1-1469 1 384 1-751 1 860 1 329 1-615 1 16 1 932 1-1559 1 890 1-375 1 808 1-936 1-731 1 1435 1 485 1-679 1 0 1-310 1 1332 1-1551 1 441 1 344 1 554 1-853 1-520 1 365 1 3 1 247 1-139 1 988 1-1698 1 269 1 770 1-184 1 858 1-310 1-763 1 666 1 255 1-478 1-548 1 994 1-908 1-70 1-27 1 57 1 268 1 212 1-750 1 1128 1-1283 1 1499 1-621 1-281 1 1215 1-1381 1-345 1 1296 1-525 1-595 1 21 1-147 1 1534 1-817 1-837 1 1586 1-125 1-672 1-9 1 795 1-257 1-511 1-146 1-1034 1 529 1 405 1 155 1-458 1-1134 1 1765 1 319 1 197 1-723 1 696 1 447 1-666 1 6 1-1034 1-372 1 1202 1 8 1-917 1 619 1 228 1-727 1 1051 1-949 1-858 1 2109 1-1134 1 411 1-906 1 184 1 1092 1-406 1 431 1-1130 1 1147 1-457 1-593 1 820 1 378 1 50 1-72 1-497 1 78 1-448 1 302 1-757 1 248 1-398 1 1190 1 354 1-1493 1 536 1 1474 1-892 1-603 1-462 1-681 1 720 1 507 1 434 1 234 1-98 1 256 1-634 1-640 1 322 1 881 1-991 1-259 1 740 1 67 1-154 1-270 1 1443 1-640 1 268 1-797 1-270 1 613 1-939 1 500 1-54 1 106 1 737 1-1698 1 885 1 1097 1-1325 1-174 1 1278 1-818 1-872 1 596 1 254 1 39 1-235 1 843 1-337 1-426 1 181 1-790 1 1848 1-2279 1 1499 1 113 1-354 1-660 1 753 1-935 1 107 1 631 1 125 1-9 1-243 1 969 1-1651 1 770 1-114 1 525 1-19 1-1254 1 1998 1-1260 1 595 1 529 1-1376 1 928 1-907 1 625 1 1043 1-1174 1 641 1-541 1 56 1-438 1 209 1 229 1 196 1 493 1 381 1-1346 1 842 1-425 1-677 1-112 1-9 1 395 1-155 1 15 1 85 1 852 1-860 1-376 1 573 1-100 1 1507 1-841 1-1995 1 1990 1-925 1-390 1 142 1 469 1 136 1 722 1-1750 1 948 1-624 1 1594 1 221 1 22 1-1627 1 647 1-12 1-315 1 106 1-30 1 496 1 178 1-663 1-509 1 925 1-396 1 266 1-481 1 968 1-1812 1 72 1 976 1 136 1 923 1-1534 1 439 1-27 1 1061 1-1365 1-663 1 1717 1-502 1-856 1 310 1-14 1-1414 1 988 1 723 1 1756 1-1538 1 695 1-45 1-1496 1 1389 1-548 1-919 1 1257 1-110 1 381 1-412 1 673 1-1075 1 544 1-676 1-97 1 410 1-119 1 307 1-538 1-233 1 272 1-558 1 681 1 140 1-317 1 1225 1-641 1 914 1-1351 1-404 1 1310 1-336 1-77 1-1042 1 463 1-549 1 380 1-20 1 1526 1 101 1-1999 1-617 1 2103 1-74 1-1355 1-539 1 1900 1-275 1-968 1 369 1 2 1-296 1 1191 1-143 1-1444 1 1898 1-1484 1 812 1-1106 1 872 1 64 1-800 1 680 1 2 1 1412 1-1756 1 430 1-727 1 866 1 431 1-1485 1 795 1 144 1 662 1-1676 1 281 1 1159 1-1056 1 132 1-419 1 719 1-1292 1 2492 1-229 1-1385 1-139 1 276 1-1192 1 1207 1 1193 1-1946 1 878 1 272 1-599 1 6 1 592 1-745 1 248 1 337 1-22 1 1186 1-707 1-34 1-234 1-1123 1 906 1 258 1 578 1-495 1 304 1 52 1-603 1 1009 1-548 1-1015 1 525 1 602 1-212 1 122 1-1186 1 48 1-243 1 1239 1-153 1-568 1 1187 1-340 1-942 1 941 1 158 1-805 1 450 1 218 1-452 1 1118 1-1483 1 321 1-103 1 82 1-288 1 1464 1-1084 1-833 1 1298 1 103 1-87 1 455 1-2417 1 1732 1-596 1 1055 1-148 1 145 1 355 1-606 1-1002 1 1124 1-1045 1-606 1 899 1-463 1-101 1 1122 1-85 1 772 1-797 1-1002 1 533 1 256 1 172 1 218 1-265 1-1661 1 606 1 577 1 304 1 261 1-1045 1 896 1-77 1-47 1-1003 1 696 1-895 1 1429 1 19 1 260 1-796 1 789 1-378 1-1145 1 490 1 516 1-36 1 1863 1-595 1-1712 1 1063 1-133 1-1004 1 1307 1-880 1 261 1-294 1 135 1-1097 1 608 1-521 1 1363 1-356 1-274 1-817 1 466 1 640 1 711 1-774 1 728 1-53 1-242 1-106 1 133 1-1089 1 757 1 563 1-639 1 969 1-1167 1-141 1-44 1 1057 1-1245 1 64 1-595 1 744 1 335 1 141 1 268 1 163 1-142 1-1025 1 725 1-126 1 279 1-518 1-277 1 68 1 1096 1-565 1-1416 1 1047 1 259 1 311 1 567 1 238 1-890 1-221 1 544 1-427 1-407 1 22 1-359 1 1571 1-1021 1-214 1 266 1 837 1 197 1-1951 1 1361 1-519 1 544 1 106 1-720 1-292 1 576 1 126 1-676 1 638 1 23 1 184 1-455 1 234 1 42 1 75 1-299 1-576 1 774 1 436 1-1782 1 687 1 885 1 736 1-1720 1 1172 1-420 1 1534 1-1980 1-237 1 784 1 47 1-94 1 688 1-40 1-1299 1 807 1-182 1 58 1-548 1 512 1-363 1-102 1 745 1-247 1-342 1-292 1 306 1-47 1 864 1-309 1-507 1 389 1-115 1-90 1-860 1 1437 1-1052 1 99 1 256 1 570 1-429 1 304 1-775 1 479 1-76 1 591 1-1217 1 1863 1-2520 1 1981 1-214 1-75 1 598 1-1428 1 1029 1 115 1-1130 1 292 1 1335 1-179 1-793 1-113 1-298 1 433 1-818 1 76 1 380 1 211 1-645 1-162 1 646 1 196 1-481 1 738 1-505 1-243 1 1088 1-192 1 677 1-789 1-615 1 555 1-552 1 251 1 470 1-1243 1 872 1-676 1 328 1 268 1-1035 1 1209 1 137 1-1116 1 530 1 649 1-223 1 529 1-1075 1-337 1 356 1-124 1-344 1 653 1 527 1-38 1-614 1 78 1 6 1 785 1-646 1-848 1 795 1-665 1 516 1 327 1-832 1-308 1 581 1-346 1 963 1 389 1 403 1-1058 1-840 1 1179 1 502 1-853 1 46 1 34 1 572 1-1459 1 1254 1-214 1 789 1-1218 1-674 1 393 1 1311 1-1118 1 1076 1-489 1 88 1-662 1 135 1 480 1-106 1-908 1 1692 1-544 1-1553 1 1136 1 616 1-888 1-236 1 1091 1-494 1 236 1-772 1 261 1 501 1-872 1 801 1-1493 1 479 1 903 1-309 1-539 1 378 1 926 1-289 1-3 1-111 1 881 1-1435 1-1572 1 1889 1 11 1 210 1-443 1 696 1-171 1-485 1 1629 1-960 1-1341 1 497 1 386 1-68 1 1609 1-1870 1 596 1-941 1 497 1-178 1 1270 1 57 1-2110 1 1311 1 112 1-1083 1 455 1-29 1-645 1 848 1 310 1 140 1 994 1-1171 1 22 1 289 1-1799 1 1981 1-299 1 97 1-64 1-681 1 646 1-590 1-1148 1 1692 1 166 1-69 1-1072 1 513 1 17 1 428 1 99 1-1435 1 125 1 1520 1 35 1-232 1-3 1-833 1-313 1 883 1 501 1-1108 1-312 1 1778 1-1060 1 741 1 4 1-24 1-1368 1 623 1 624 1-376 1-262 1 1093 1-1246 1 993 1-136 1-1425 1 2917 1-2600 1-26 1 823 1-852 1 576 1 460 1-605 1 544 1-112 1 338 1-2175 1 958 1 779 1 777 1-317 1-55 1 187 1-556 1-32 1-1085 1 141 1 1725 1-1703 1 1480 1-1246 1 530 1 84 1-165 1 601 1 324 1-1861 1 2024 1-1362 1 1017 1-830 1 291 1-123 1 583 1-708 1-906 1 643 1-329 1 1127 1-128 1-703 1 1475 1-1603 1 657 1 108 1-1054 1 1427 1-1393 1 1601 1 54 1-1351 1-91 1 1567 1-947 1-1145 1 1188 1 796 1-569 1-204 1 112 1 573 1-306 1-612 1-163 1 446 1-328 1 153 1 1045 1-1886 1 96 1 812 1 129 1-141 1-51 1-389 1-100 1 760 1 451 1 36 1-1639 1 1117 1 607 1 689 1-1766 1 446 1-46 1 746 1-332 1 77 1-439 1-1135 1 1520 1 381 1-1291 1 62 1 800 1-353 1 543 1-1635 1 856 1 1222 1-1505 1-62 1 1510 1-902 1 5 1 982 1 126 1-2889 1 2428 1-1027 1-97 1-209 1 77 1 494 1 571 1 264 1-1070 1 868 1-1178 1 731 1-897 1 1783 1-2073 1 1284 1-515 1 1138 1-1259 1 276 1-559 1 275 1-876 1 2271 1-702 1 558 1-768 1-661 1 9 1 976 1 546 1-923 1-388 1 1294 1-960 1 535 1-752 1 692 1-1094 1 1008 1-420 1-1928 1 4141 1-1968 1-90 1-345 1-45 1 163 1 531 1-297 1-453 1 1294 1-1575 1 689 1-853 1 1021 1-534 1 443 1-734 1-148 1 1057 1-782 1 525 1-498 1 714 1-17 1-562 1-287 1 446 1-148 1 545 1-883 1 635 1 568 1-1585 1 1756 1-1573 1 655 1-188 1-1106 1 1757 1 253 1 218 1-812 1-729 1 847 1-110 1-139 1 298 1-299 1 924 1 543 1-827 1-112 1-1057 1 498 1 862 1-1459 1 250 1 933 1-1656 1 1133 1 550 1-282 1-627 1 284 1 905 1-1730 1 1084 1 392 1-341 1-260 1-893 1 135 1 1983 1-902 1-224 1-129 1-433 1 172 1 1094 1-1739 1 592 1 1591 1-1774 1 479 1 1026 1-916 1-309 1 256 1 591 1-358 1 72 1 117 1-621 1 917 1-728 1-172 1-293 1 277 1 517 1 60 1 121 1-1395 1 1302 1 247 1-283 1-752 1-87 1 1538 1-1642 1 710 1-1144 1 167 1 1321 1 193 1 19 1-363 1-456 1-11 1-56 1-138 1 585 1-146 1-282 1-467 1 866 1 274 1-879 1 306 1-142 1 383 1-341 1 534 1 238 1-592 1 1024 1-1257 1-874 1 1899 1-159 1-787 1 769 1-762 1 413 1 179 1-773 1 847 1-19 1 518 1-1176 1 418 1 269 1-820 1 565 1-776 1 167 1 776 1 115 1-1259 1 910 1 333 1-322 1 956 1-1143 1 931 1-1157 1 741 1-498 1-899 1 259 1 937 1-435 1 924 1-904 1-575 1 215 1-107 1 407 1 953 1-713 1 677 1-1244 1 721 1 157 1 331 1-794 1-171 1 88 1 1236 1-1297 1 629 1 1099 1-1828 1 283 1 1147 1-1576 1 249 1-769 1 761 1 228 1 1130 1-2364 1 2240 1-663 1-676 1 607 1 1608 1-1547 1 78 1-931 1 726 1-985 1 300 1-66 1 249 1-1025 1 768 1 32 1 638 1 234 1 611 1 401 1-484 1-1263 1 974 1-343 1 154 1-294 1-311 1-685 1 1775 1-2123 1 1437 1 326 1-182 1-1078 1 393 1-425 1 1123 1-1163 1 957 1-404 1 742 1-223 1 164 1-967 1 89 1 2549 1-2126 1 17 1 869 1-59 1-1457 1 919 1-749 1 45 1 2107 1-2466 1 1733 1-498 1-255 1-375 1-2 1 466 1-66 1-396 1-303 1 812 1-581 1 46 1 706 1-203 1-117 1-1554 1 1251 1-328 1 5 1 903 1-699 1 1292 1-139 1-1145 1 548 1-449 1-219 1-909 1 1366 1-122 1 1448 1-2248 1 863 1 353 1-952 1 558 1 465 1 84 1-954 1-201 1 606 1 87 1-1452 1 1606 1 380 1-1048 1 809 1 483 1-1066 1 439 1-1391 1 851 1-405 1-181 1 427 1-273 1 1377 1-126 1-498 1-734 1 304 1-109 1-166 1 712 1 367 1 42 1-1425 1 1962 1-154 1-1103 1 891 1-1000 1 883 1-461 1 523 1-895 1 95 1-736 1 564 1 34 1 889 1-326 1 175 1 736 1-196 1-763 1-308 1-881 1 1551 1 438 1-1350 1 688 1 261 1-202 1 1159 1-1398 1-179 1 140 1 349 1-251 1-799 1 1229 1-1855 1 1307 1-199 1-1640 1 1612 1 418 1-414 1 971 1-1657 1 782 1 70 1 451 1-646 1-331 1 2245 1-774 1-1267 1 699 1-251 1 690 1-56 1-1450 1 480 1-110 1 2310 1-2053 1-104 1-54 1 707 1-1031 1-113 1 737 1 1594 1-1558 1-183 1-311 1 726 1-675 1 504 1-93 1 74 1-466 1-440 1 201 1 1216 1-1119 1 688 1-399 1 1897 1-2194 1 703 1-2 1-286 1 819 1-165 1 1089 1-1885 1 581 1-458 1-154 1 582 1-723 1 1768 1-1122 1-455 1 732 1-506 1 385 1-844 1-88 1 1083 1-141 1-424 1 330 1-341 1 234 1-241 1 814 1-857 1-441 1 1356 1-993 1 100 1-235 1 1662 1-1197 1 155 1-642 1-101 1 2230 1-1276 1-665 1-64 1 0 1 849 1-271 1-536 1-294 1 352 1 732 1 1324 1-1555 1-173 1-88 1-400 1-84 1-966 1 1259 1-261 1-770 1 441 1 969 1-855 1 1241 1-1260 1-52 1 838 1-983 1 333 1 649 1-849 1 927 1-435 1 880 1-1566 1 989 1 287 1-315 1-830 1-457 1 1111 1 428 1-474 1 80 1-344 1 412 1-271 1 1434 1-410 1-638 1 660 1-187 1-1178 1 641 1 4 1 5 1 282 1 34 1-237 1-442 1 278 1-101 1-750 1 638 1-388 1 271 1-338 1 1171 1 174 1-1187 1 315 1-273 1 1350 1-2380 1 1530 1-1335 1 1533 1-15 1 1113 1-1631 1 244 1 271 1-581 1 708 1-900 1 213 1 64 1 570 1 40 1-1221 1 770 1-41 1 65 1 137 1 723 1-1068 1 493 1 225 1-1230 1-752 1 1610 1-397 1 1067 1-1427 1 570 1-457 1-82 1 773 1-573 1 499 1-286 1 157 1 948 1-287 1 500 1 70 1-1376 1-569 1 387 1 655 1-1869 1 1215 1-466 1 970 1-456 1 936 1-364 1 628 1-920 1 427 1 264 1-1034 1 584 1-2 1-284 1 635 1-493 1 133 1 165 1-197 1-539 1 334 1 258 1 387 1-839 1-391 1 783 1 667 1-2132 1 1317 1-1108 1 2150 1-31 1-349 1-186 1 1380 1-577 1-1165 1 526 1-732 1 479 1 328 1-483 1-83 1 663 1-977 1 88 1 71 1 311 1-124 1-227 1-55 1 212 1-1003 1 611 1-602 1 126 1 1566 1-2072 1 2299 1-1246 1 598 1-195 1-735 1 2 1 260 1 687 1-558 1 306 1 31 1 455 1-203 1-857 1 1038 1 248 1-1066 1 63 1 459 1-1122 1 739 1-44 1 1849 1-1794 1-581 1 1421 1-1174 1 655 1 54 1 63 1 605 1 491 1-122 1-1835 1 481 1 1183 1-1428 1 125 1 494 1-594 1-7 1 172 1-500 1 1194 1-615 1-902 1-295 1 1155 1-968 1 1288 1 646 1-1343 1-336 1 1058 1-975 1 1658 1-235 1-304 1-278 1-168 1-84 1-359 1 951 1-186 1-1309 1 1132 1-571 1 336 1 169 1-400 1 856 1-619 1-297 1 291 1 355 1 148 1-211 1-793 1 385 1 679 1-1236 1 1181 1-848 1 630 1 887 1-823 1 277 1-243 1-24 1 230 1-443 1 179 1 635 1-930 1-59 1 554 1-248 1 234 1 152 1-344 1-476 1 110 1 1085 1-745 1-576 1-272 1 978 1-513 1 239 1 745 1-911 1 643 1 323 1-1707 1 219 1 533 1 876 1-1118 1 560 1-421 1 337 1-247 1 987 1-857 1-134 1-587 1 1826 1-2281 1-118 1 1297 1 325 1-1064 1 1742 1-879 1-731 1-453 1 501 1 423 1 81 1-146 1-498 1 1931 1-1185 1-195 1 399 1-255 1-778 1 895 1 64 1-1026 1 842 1 267 1 587 1-728 1 818 1-663 1-589 1 664 1-264 1-414 1-301 1-475 1 229 1 416 1 121 1 296 1 407 1 1251 1-1844 1 686 1-1204 1 1584 1 270 1-763 1-1019 1 850 1 77 1-898 1 747 1-363 1 457 1-149 1-2167 1 3173 1-1989 1 2218 1-88 1-1813 1 719 1-110 1-514 1 833 1 749 1-1142 1 565 1-1457 1 832 1-214 1 1230 1-945 1-85 1-242 1 1121 1-1062 1-360 1 872 1 117 1-615 1-291 1 772 1-757 1-505 1 797 1 348 1-573 1-401 1 92 1 676 1-318 1 819 1-414 1 339 1 93 1-344 1 306 1-326 1 15 1 713 1-366 1-684 1 590 1-1317 1-319 1 881 1 306 1-29 1 1113 1-625 1 950 1-1474 1-269 1 432 1 217 1 310 1-655 1 970 1-1343 1 1408 1 192 1-746 1-354 1 566 1-289 1-299 1 628 1-995 1 662 1-441 1 728 1 671 1-1387 1-204 1 997 1-391 1 739 1 144 1-1745 1-115 1 1265 1-1451 1 1441 1-661 1 298 1-46 1 1595 1-2421 1 1445 1-459 1-734 1 1411 1-721 1 35 1 39 1 609 1-958 1 1015 1-728 1-1027 1 944 1 852 1-914 1 915 1-311 1-598 1 571 1-339 1 1762 1-1839 1-680 1 1805 1-1070 1-830 1 459 1 178 1-94 1-103 1-376 1-526 1 894 1 416 1-960 1 210 1 228 1 93 1 461 1 584 1-1443 1 1228 1 152 1-203 1-685 1-386 1 254 1-763 1 2642 1-2583 1 1060 1-716 1 2175 1-1473 1-1866 1 2098 1-1299 1 912 1-291 1 1104 1-729 1-1292 1 437 1 1050 1-433 1 213 1-595 1-119 1 372 1 354 1-335 1 112 1 88 1 66 1 869 1-495 1 84 1-798 1 380 1-341 1 243 1 848 1-809 1 178 1-575 1 741 1-786 1 1127 1-979 1 307 1 356 1 590 1 258 1-2456 1 2072 1-1341 1 970 1-583 1-101 1 566 1-590 1 1011 1-1208 1-218 1 1141 1-494 1-85 1 70 1 17 1 376 1-341 1 522 1 1 1-806 1 758 1-35 1 41 1-908 1 1274 1-1594 1-499 1 1335 1-301 1-804 1 1343 1 83 1-816 1 422 1-1475 1 2248 1 376 1-1222 1 263 1 707 1-1410 1 453 1-1338 1 2459 1-179 1-776 1 204 1-1231 1 799 1-534 1 1298 1-844 1-143 1 57 1 138 1 189 1-1740 1 1516 1 6 1 466 1-308 1-291 1 990 1-1685 1 957 1-787 1 1552 1-1290 1 1407 1-1204 1-334 1-677 1 2286 1-1518 1-368 1 1556 1 245 1-258 1-746 1 728 1 257 1-1348 1 327 1 455 1-422 1 1290 1-749 1-470 1-87 1 825 1-958 1 1533 1-850 1 228 1-1414 1-651 1 1276 1 1411 1-139 1-1551 1-628 1 1408 1-504 1 1050 1 71 1-1545 1-366 1 797 1 101 1 62 1 310 1-25 1-1049 1 556 1 88 1 47 1 749 1-303 1-485 1 533 1 578 1-1346 1 255 1 662 1-358 1-580 1 418 1-362 1 249 1-250 1 171 1-97 1-246 1-62 1-413 1-8 1 1173 1 1058 1-1144 1-812 1 684 1 456 1 609 1-663 1-551 1-188 1 716 1 531 1-1571 1 1889 1-2302 1 1055 1 333 1 299 1-613 1 661 1-846 1 612 1-715 1 897 1 240 1 82 1-1708 1 799 1 84 1-1081 1 1580 1-973 1 191 1 11 1-305 1 128 1-720 1 1486 1 500 1-1103 1 761 1-1152 1 798 1-839 1-580 1 1143 1 150 1 162 1-360 1 599 1-933 1-203 1 1317 1-2102 1 1701 1-390 1-28 1 674 1-1635 1 2516 1-1033 1 615 1-1009 1-636 1 175 1 1360 1-646 1 59 1-13 1 675 1-1141 1 1791 1-2922 1 1332 1 343 1 171 1-1301 1 1068 1-973 1 1368 1-477 1 206 1-493 1-424 1 1363 1-1527 1 1174 1-621 1 1155 1-741 1 49 1-325 1-979 1 557 1 344 1-216 1 142 1 436 1-350 1-967 1 664 1 185 1-752 1 1484 1-235 1 566 1-1067 1 240 1 919 1-559 1-146 1 176 1-1605 1 944 1 203 1-458 1-59 1 1615 1-393 1-553 1 1556 1-1723 1 359 1 236 1-479 1-540 1 173 1 443 1-97 1-431 1 893 1-775 1 757 1-317 1-469 1 425 1 869 1-865 1 792 1-391 1-122 1-359 1 491 1-1415 1 768 1-126 1 246 1-203 1 854 1-287 1-1004 1 91 1 427 1-899 1 1859 1 119 1-193 1-1090 1 1669 1-1636 1 840 1-987 1-131 1 582 1 813 1-95 1-1463 1 302 1 630 1-205 1-1045 1 852 1-681 1 1179 1 59 1-7 1-179 1-921 1 1490 1-1465 1 1253 1-880 1 975 1-450 1-1909 1 2224 1-567 1 294 1 1071 1-1671 1 760 1 536 1-510 1-959 1 1891 1-2003 1 1947 1-1585 1 993 1 265 1-2114 1 1128 1-124 1 926 1-1476 1 161 1 522 1 432 1-819 1 912 1-968 1 25 1-118 1 1988 1-1565 1 383 1 244 1-953 1 932 1-366 1-331 1 406 1-1031 1 628 1-387 1 1496 1-1303 1 428 1-795 1 948 1-429 1 807 1-185 1 293 1-1763 1 1522 1-372 1 113 1 12 1-571 1 218 1 310 1-154 1-765 1 1267 1 388 1-442 1-754 1-205 1 1062 1-668 1 602 1-710 1 729 1-692 1 331 1 1047 1-870 1 155 1-1769 1 1731 1-796 1 1248 1-2266 1 802 1 836 1 500 1-417 1 478 1-1174 1 1786 1-1551 1-998 1 761 1-582 1 844 1 237 1 105 1 165 1-1529 1 1606 1 139 1-796 1 275 1-669 1 5 1-843 1 3332 1-2069 1 327 1 169 1-405 1 55 1-149 1 73 1-750 1-440 1 1779 1-481 1-292 1 367 1 438 1-626 1 1086 1-1327 1 1150 1-273 1-401 1-1246 1 175 1 594 1-514 1 475 1 860 1-405 1 8 1 301 1-751 1 659 1 140 1-286 1-109 1 753 1-1403 1 300 1 1425 1-736 1-1640 1 2078 1-937 1-459 1 1516 1-1662 1 749 1-191 1 311 1-771 1-68 1-305 1 1185 1 52 1-554 1 662 1-529 1 848 1-204 1-532 1 74 1 983 1-8 1-1440 1 598 1-349 1 257 1 1363 1-1438 1-2030 1 2119 1 588 1 159 1-932 1-642 1 1586 1-1624 1-32 1 907 1-1358 1 1648 1 104 1-447 1-563 1 722 1 20 1-702 1 1219 1-400 1-1442 1 1412 1-483 1 408 1-427 1 364 1 22 1 647 1-1159 1-205 1 649 1-348 1-70 1 366 1-623 1 819 1-571 1 476 1 773 1 287 1-881 1 755 1-862 1-345 1 713 1 22 1-1680 1 1075 1 106 1-143 1 598 1 651 1-1796 1 1863 1-944 1-444 1-89 1 265 1 1202 1-1365 1-380 1 1022 1-365 1-781 1 1005 1-524 1 516 1-584 1-324 1 668 1 642 1-469 1-220 1 75 1 28 1-807 1 586 1-299 1-133 1-161 1 412 1 142 1-120 1-325 1 476 1 878 1-1786 1 1051 1-687 1 1456 1-1044 1 1049 1-1051 1-217 1 390 1 468 1-1508 1 786 1 1084 1-369 1-1667 1 1981 1 236 1-2176 1 1044 1-1225 1 1602 1-545 1-159 1 241 1 622 1-1085 1 100 1 96 1 715 1-22 1 438 1-288 1-179 1-985 1 601 1-76 1-572 1 1364 1-1886 1 1042 1-951 1 429 1 1111 1-449 1 1014 1-664 1-990 1 360 1 895 1-857 1 521 1 192 1-432 1-83 1 692 1-929 1 601 1-68 1 998 1-1332 1-575 1 407 1 788 1-957 1 1363 1-1425 1 134 1 1374 1-1451 1 721 1 242 1-785 1 466 1 1032 1-932 1-378 1 494 1-715 1-93 1 138 1 1220 1-1087 1 363 1 197 1-318 1-369 1-474 1 613 1-387 1 1351 1-790 1 1010 1-673 1-1144 1 922 1 618 1-510 1-232 1-1 1-419 1 1314 1-1246 1 578 1-401 1 465 1-915 1 1238 1-659 1-148 1 27 1 278 1 749 1-537 1 622 1-616 1-893 1 465 1-45 1-693 1 987 1 26 1-584 1 199 1 97 1 522 1-148 1-7 1-345 1-176 1-29 1 1062 1-1214 1 1284 1-1000 1 411 1 401 1-85 1 343 1-614 1-359 1 280 1-60 1-286 1 445 1 139 1-369 1-364 1 1757 1-1473 1 15 1 1040 1-2274 1 586 1 511 1-151 1-819 1 808 1-563 1 686 1 85 1-127 1 587 1-967 1 811 1-1098 1 705 1 500 1-1993 1 2456 1 84 1-1952 1 1480 1-1370 1 519 1 333 1-397 1 719 1 764 1-1222 1-897 1 1586 1-182 1 463 1-1571 1 1224 1-64 1-1947 1 2047 1 527 1-2360 1 1785 1 309 1-71 1-1467 1-447 1 1280 1 374 1-686 1 1155 1-944 1 1167 1-1464 1 586 1 625 1-1302 1 303 1 56 1-163 1 56 1 1130 1-174 1-767 1-16 1 429 1-676 1 309 1-1755 1 1419 1 392 1-373 1 216 1 325 1-615 1 222 1 916 1-131 1-922 1-18 1 311 1 1230 1-1315 1 650 1-199 1-234 1-826 1 485 1 790 1-1213 1 810 1 294 1-1197 1 1360 1-1303 1 1563 1-483 1-950 1 996 1 290 1-444 1-514 1 539 1-355 1 819 1 118 1-739 1-314 1-71 1-232 1 1347 1-434 1-807 1 560 1 92 1 265 1-216 1 375 1 588 1-739 1-630 1 1019 1-1032 1 164 1 300 1-819 1 1261 1-665 1 91 1-1 1 565 1-924 1-210 1-402 1 1382 1-281 1-634 1 292 1-165 1 629 1 616 1-1472 1 671 1 1166 1-1244 1 487 1-686 1 150 1 281 1-696 1 338 1 173 1-1643 1 803 1 1193 1-958 1 639 1-276 1 904 1 463 1-506 1-1021 1 537 1-707 1 1616 1-2096 1 33 1 146 1 101 1-70 1 1337 1 116 1-1041 1 391 1-646 1 2094 1-718 1-1132 1 7 1 698 1-922 1 1004 1-1169 1 895 1-45 1 942 1-279 1-765 1 450 1-89 1 617 1-712 1-328 1-336 1 462 1-1123 1 965 1 338 1-546 1-302 1 920 1-1138 1 943 1 56 1 806 1-1319 1-1042 1 633 1 908 1 12 1-43 1 825 1-82 1-1265 1 504 1 79 1-479 1 202 1 234 1 17 1-375 1 1282 1-852 1-167 1-1017 1-1 1 593 1 309 1-104 1-614 1 1519 1-1135 1 576 1-1123 1-117 1 1641 1-323 1-1732 1 292 1 284 1 723 1 1066 1 274 1-1033 1-322 1-191 1 1045 1 365 1-1348 1-1491 1 199 1 1340 1 553 1-941 1 997 1-1396 1 1293 1-1574 1 1736 1-196 1 450 1-874 1-246 1 27 1 145 1 783 1-958 1-520 1 662 1-664 1 1284 1 109 1-939 1 1441 1-129 1-561 1-792 1 895 1 714 1-1765 1 980 1-330 1 243 1 111 1-772 1 1199 1-931 1-124 1 357 1-349 1 1547 1-1650 1 11 1-66 1 1187 1 3 1 390 1-512 1-799 1 1172 1-415 1-811 1 863 1-1517 1 656 1-580 1 661 1 515 1-851 1 76 1 139 1 210 1-912 1 1189 1 874 1-1120 1 553 1-705 1-122 1-870 1 1221 1-299 1 159 1-74 1-287 1-679 1 215 1 1026 1 1179 1-727 1-904 1 317 1-523 1-208 1-127 1 958 1-1011 1 2295 1-1149 1-634 1 709 1-53 1-1405 1 2142 1-2276 1 1732 1-432 1 646 1-1144 1 569 1 543 1-265 1 1218 1-1225 1 88 1-1604 1 1628 1-369 1 158 1-441 1-459 1 1131 1-576 1-78 1-556 1 628 1-437 1 470 1-170 1 389 1 278 1-835 1 771 1 399 1-1471 1 1601 1-2542 1 1730 1 386 1-132 1-108 1-26 1-743 1-202 1-587 1 735 1 656 1-236 1 411 1-2215 1 2344 1 122 1-1647 1 1013 1 120 1 1186 1-1467 1-89 1 584 1-109 1 77 1-265 1 168 1-513 1 341 1 323 1-135 1-49 1 161 1-242 1 65 1-61 1 1190 1-1292 1 185 1-1159 1 1249 1-35 1 143 1-521 1-664 1 1495 1-656 1-672 1 474 1 1561 1 419 1-2090 1 1145 1-1551 1 436 1-489 1 544 1-600 1 654 1 227 1-147 1 405 1-581 1 1859 1-1949 1 326 1 761 1-1541 1 2080 1-164 1-1573 1 939 1-95 1-94 1-132 1-747 1 479 1-106 1-465 1 251 1 685 1 585 1-96 1-656 1-185 1 464 1-853 1 193 1 1349 1-779 1 98 1-303 1 812 1-254 1 706 1-788 1 247 1-1182 1 121 1-362 1 565 1 869 1-1432 1 1437 1-972 1-238 1 543 1 367 1-222 1 382 1-672 1 523 1-796 1 859 1 875 1-1407 1 201 1-925 1-499 1 970 1 759 1 900 1-2281 1 1463 1-1213 1 2299 1-2453 1 1394 1-751 1 718 1-485 1-254 1 878 1-645 1 866 1 10 1-397 1-550 1-301 1 375 1-721 1 273 1 2037 1-667 1-989 1 33 1-453 1 421 1 841 1-414 1-466 1 30 1-375 1 15 1-300 1 873 1-133 1-198 1 1190 1-226 1-854 1-946 1 1533 1-703 1 238 1-40 1-449 1 326 1 552 1-875 1-73 1 643 1 901 1-1397 1 1670 1-1464 1 344 1-3 1-78 1-832 1 914 1-1284 1 1579 1 122 1-1088 1 565 1-480 1 531 1 57 1-278 1 58 1 129 1 771 1 123 1-1997 1 1373 1 286 1-353 1 192 1-355 1 358 1-520 1 1156 1-1461 1-571 1 1480 1-936 1-531 1 901 1 628 1-2021 1 818 1 479 1 698 1 463 1-580 1-1581 1 1725 1-1496 1 854 1-53 1 73 1 141 1-1145 1 1782 1-262 1-1355 1 677 1-21 1-325 1 1208 1-969 1 1195 1-628 1 58 1-403 1-521 1 144 1 627 1 8 1-935 1 1748 1-931 1-896 1 1274 1-234 1-355 1-1188 1 113 1 764 1-303 1 1364 1-282 1 470 1-420 1-694 1 114 1 123 1-432 1 658 1-166 1-790 1 201 1 133 1 868 1 150 1-1745 1 1040 1 186 1-1050 1 1194 1-606 1 906 1-249 1-1503 1 1101 1 625 1-1101 1 802 1 294 1-1148 1 170 1 437 1-281 1 460 1-1107 1 368 1 1088 1-1063 1 1416 1-149 1-427 1 817 1-1090 1-411 1 302 1-258 1-103 1 662 1-2054 1 1389 1 147 1 551 1-175 1 213 1-121 1 1427 1-1648 1 1028 1-474 1-250 1-212 1-53 1-95 1-225 1 319 1-360 1 12 1 1248 1-1101 1-750 1 1555 1-1203 1 1296 1 3 1-871 1-38 1 784 1-1119 1 350 1 79 1 87 1 421 1-747 1 51 1 526 1-638 1 597 1-769 1 607 1 241 1-248 1-491 1-718 1 1666 1-631 1 661 1-1 1-237 1 164 1-1514 1 827 1 595 1-25 1-451 1 71 1 358 1-69 1-1338 1 1736 1-968 1 2197 1-1920 1-282 1 1 1 788 1-116 1-1512 1 1839 1-139 1-772 1-582 1 1923 1-965 1-292 1-1051 1 1053 1 531 1 252 1-1080 1 234 1 42 1 31 1 838 1-969 1 621 1-374 1 41 1 468 1 397 1-382 1-327 1-704 1 574 1 850 1-804 1 336 1-624 1 192 1 495 1-644 1 612 1-190 1 507 1 22 1-1951 1 1246 1 93 1 1044 1-1287 1 620 1 668 1-1158 1-529 1 78 1 322 1 140 1-282 1 842 1-1475 1 1599 1-434 1-69 1 584 1-828 1 86 1 504 1 22 1-1202 1 1935 1-1163 1-586 1-18 1 439 1 921 1-617 1 494 1 85 1-973 1 1034 1-1282 1 1500 1-965 1-161 1 295 1-1069 1 1421 1-537 1-432 1-43 1 676 1-633 1 152 1-429 1 1657 1-1380 1 691 1-195 1 10 1-50 1-439 1-141 1 192 1 166 1-445 1 1563 1-1281 1-250 1-103 1-294 1 317 1 239 1 167 1-196 1 670 1-665 1 515 1 1186 1-1339 1 653 1-1094 1 104 1-71 1 1078 1-1091 1 256 1 749 1-140 1-472 1 402 1-651 1 339 1-1074 1 478 1 71 1 466 1-506 1 366 1 1067 1-989 1-164 1 622 1-632 1 195 1 1078 1-985 1-1030 1 1286 1 196 1 13 1-1182 1 1040 1-157 1-217 1-506 1 868 1-57 1 308 1-1450 1 1409 1-812 1 871 1 108 1-779 1-574 1 689 1 320 1-741 1 398 1 250 1-272 1-307 1-869 1 1433 1-562 1-359 1 288 1 594 1-1086 1 721 1-530 1 277 1 942 1-1258 1-238 1 1753 1-405 1-396 1-297 1-69 1 961 1-1420 1 820 1 759 1-572 1-1322 1 1460 1-231 1 354 1-81 1-34 1-1161 1 383 1-472 1 1049 1-652 1 1064 1-211 1-344 1-468 1 1356 1-970 1 1093 1-399 1-563 1 533 1-749 1-466 1 648 1-1520 1 1118 1 578 1 530 1-1197 1 211 1 212 1 347 1-655 1 685 1-1155 1-31 1 408 1-23 1 81 1 260 1 253 1-318 1 2211 1-2437 1-135 1 1458 1-1674 1 496 1-70 1 1341 1-107 1-839 1-523 1-187 1 490 1-147 1 12 1 355 1-266 1 405 1-288 1-1014 1 1410 1 450 1-285 1-440 1 28 1 784 1-351 1-821 1 392 1 672 1-1420 1-363 1 1122 1 319 1-1264 1 65 1 356 1-357 1 471 1 284 1-211 1 538 1-570 1-134 1 792 1-424 1 431 1-590 1-284 1-262 1 987 1-348 1-643 1 1070 1-691 1 279 1 1501 1-226 1-1664 1 976 1-1009 1-25 1-65 1 623 1 516 1-792 1 494 1-491 1 323 1-168 1 313 1-1690 1 2503 1 155 1-1448 1 523 1 247 1 33 1-654 1 423 1-729 1-146 1 341 1-803 1 818 1 1163 1-1296 1-562 1 635 1-166 1 1119 1-896 1 457 1 892 1-106 1-636 1 5 1-47 1-664 1-160 1 769 1-516 1-203 1 517 1-957 1 1615 1-82 1-817 1 779 1-750 1-446 1 698 1-58 1 22 1 132 1 1043 1 258 1-1191 1 509 1-1030 1 763 1-536 1-264 1 1204 1-1301 1 584 1-562 1 1484 1-1958 1 839 1-807 1 1622 1-1143 1 469 1-331 1 383 1-1323 1 396 1 1467 1-1391 1 516 1-204 1 1002 1-2064 1 978 1 200 1 1159 1-1396 1 130 1-365 1 212 1 1366 1-1372 1-644 1 1040 1 842 1-142 1 280 1-1025 1 74 1 361 1-656 1-3 1 651 1-77 1-539 1 483 1-1582 1 2047 1-313 1-564 1 1208 1-407 1-579 1-7 1 621 1-225 1-659 1-239 1 738 1 210 1-744 1 898 1-980 1-267 1 1043 1-913 1 77 1 781 1-734 1 896 1-1321 1 1445 1-998 1 682 1 1262 1-1277 1 624 1-1002 1 491 1-79 1-143 1-468 1 361 1 210 1-357 1-1362 1 1195 1 42 1 689 1-618 1-406 1 1276 1-11 1-1037 1 1609 1-728 1-768 1 387 1 570 1-1754 1 616 1 875 1-288 1 639 1-169 1-358 1-1004 1 1184 1-63 1-796 1 855 1-1043 1-14 1 762 1-384 1 1338 1-1489 1 1678 1-1691 1 590 1 164 1-1954 1 1213 1-707 1 1468 1 334 1-1110 1 619 1-807 1 626 1 162 1-924 1 971 1 195 1-1164 1 638 1-181 1 1033 1-733 1 1677 1-2014 1 553 1 870 1-732 1-146 1-31 1-365 1 184 1-137 1 914 1-358 1-550 1-484 1-306 1 1429 1-626 1 333 1-2090 1 2556 1 174 1-987 1 634 1-643 1-138 1 323 1-734 1 29 1 526 1 473 1-1331 1 1252 1-105 1-416 1 296 1 698 1-1393 1 905 1-574 1 84 1-324 1 169 1 665 1-1051 1 178 1 256 1 1022 1-1381 1-92 1 549 1-652 1-635 1 1643 1 175 1-834 1 467 1 431 1 342 1-1087 1-815 1 1534 1-1506 1 1548 1-974 1-288 1 1182 1 210 1-693 1-723 1 719 1 116 1 237 1-476 1 284 1-1080 1 465 1 720 1 830 1-1106 1-156 1 695 1-408 1 308 1-65 1-519 1 57 1 498 1-406 1-305 1 707 1 516 1-374 1-347 1-487 1 1466 1-720 1-980 1 701 1-155 1 806 1-228 1 138 1-1821 1 152 1 802 1 833 1-575 1 1327 1-1598 1-366 1-49 1 357 1-13 1 1197 1-1645 1 309 1 130 1 1264 1-1249 1 515 1-168 1-185 1 287 1-429 1 1109 1-470 1-500 1 37 1 827 1-1843 1 1142 1 929 1-732 1-843 1 1310 1-821 1 1148 1-1758 1 630 1 849 1-1181 1-298 1 1046 1-516 1 625 1-540 1-326 1 418 1 105 1-856 1 1432 1-1198 1 699 1-461 1 183 1-619 1 689 1-163 1 661 1 1001 1-1466 1-467 1 1068 1-850 1 794 1-1168 1 340 1 1399 1-1348 1 283 1 674 1 412 1-841 1-1399 1 119 1 1608 1-88 1-187 1 721 1-2483 1 1347 1-256 1-177 1 863 1-218 1 147 1-612 1-424 1 1508 1-1586 1 37 1-89 1 1277 1 635 1-372 1-393 1-1526 1 1172 1 514 1-616 1 994 1-291 1-610 1-1241 1 864 1 1180 1-1967 1 790 1 1011 1-1624 1 1151 1 283 1-50 1-896 1 808 1-489 1 589 1 653 1 262 1-925 1-379 1-68 1 718 1-391 1-421 1 213 1-166 1 1031 1-380 1 101 1-1299 1 869 1 453 1 4 1-629 1-775 1 216 1 973 1-92 1-988 1 697 1-377 1-418 1 1590 1-851 1-464 1 287 1 413 1 562 1 11 1-690 1 331 1 1007 1-1589 1 626 1 1359 1-1593 1 344 1-1260 1 149 1 1514 1-906 1 877 1 95 1-467 1-624 1 200 1-997 1 1024 1 461 1-1448 1 906 1-338 1 1243 1-1559 1 1081 1-34 1 242 1-624 1 621 1-402 1-894 1 1725 1-215 1-162 1 486 1-958 1-506 1 801 1-1614 1 1009 1-522 1 150 1 1035 1-243 1-330 1 186 1-81 1 782 1-1229 1 1102 1-1285 1 633 1 470 1-350 1 65 1 506 1-1029 1-75 1 169 1 1462 1-1385 1-535 1 879 1-49 1 172 1-1525 1 1599 1-1774 1 791 1-249 1 197 1 746 1-207 1 1168 1-482 1 395 1-1859 1 1120 1-557 1 634 1-1079 1 823 1 241 1-392 1 91 1 195 1-881 1 710 1-247 1 567 1 115 1-729 1 1063 1-734 1 1180 1-1402 1 503 1-311 1 85 1 408 1-663 1-729 1 434 1 119 1-224 1-114 1-401 1 796 1 491 1 322 1-430 1 38 1-285 1-1103 1 1226 1-734 1 808 1 100 1 271 1-763 1 810 1-1459 1 1038 1-647 1 775 1-961 1 1273 1-452 1-318 1 623 1-78 1-244 1-217 1 619 1-304 1-719 1-461 1 837 1 876 1-303 1-365 1-869 1 1069 1 419 1-282 1-1280 1 733 1 300 1 259 1-406 1-698 1 734 1-593 1 454 1-663 1 584 1 212 1 100 1-637 1 334 1 35 1-275 1 709 1 171 1-846 1-248 1 89 1 153 1-433 1 1135 1-256 1-565 1-521 1 189 1 1387 1-1158 1 958 1-1242 1 582 1-281 1 1394 1-635 1-1199 1 1373 1 1316 1-1233 1 855 1-1821 1 763 1 369 1-1095 1 267 1 40 1 1059 1-218 1-1699 1 1685 1-1068 1 1758 1-1894 1-11 1 148 1 329 1 763 1-151 1-648 1-215 1 1700 1-2218 1 404 1-294 1 155 1 301 1 812 1 43 1 160 1-517 1 191 1-1008 1-121 1-102 1 1337 1-1014 1 912 1-146 1 6 1-1137 1 1132 1-1502 1 92 1 2007 1 141 1-1402 1 933 1-771 1-519 1 570 1 1484 1-1525 1-119 1 1012 1-379 1-560 1-1160 1 1964 1-284 1-113 1 622 1-409 1 227 1-259 1-146 1 66 1 157 1-271 1-34 1-502 1 439 1-1409 1 2930 1-957 1-587 1-515 1 993 1-482 1 581 1-1020 1-322 1 12 1 1600 1-285 1-971 1 569 1 76 1-839 1 1160 1-30 1-1166 1 1237 1-774 1 583 1-570 1-122 1 1623 1-1072 1-331 1 1241 1-938 1 153 1-923 1 1350 1-713 1-206 1 86 1 157 1 785 1-612 1-169 1 503 1-674 1-126 1 1425 1-1338 1-137 1 857 1-173 1-2282 1 1585 1 515 1 232 1-1188 1 781 1-319 1-435 1 719 1-133 1 368 1-128 1 255 1-825 1 1192 1-2306 1 1101 1 594 1-486 1 274 1-265 1 505 1 248 1-273 1-781 1 1979 1-1634 1 318 1-136 1 569 1-1073 1 1179 1-914 1 1533 1-1688 1 223 1 205 1 641 1-896 1-630 1-443 1 1262 1 1134 1-927 1 586 1 814 1-2284 1 468 1-145 1 1215 1-66 1-1010 1-81 1 915 1-902 1 1459 1-1415 1-24 1 21 1-19 1 55 1 52 1-40 1 545 1 961 1-736 1-371 1 786 1-871 1-481 1 285 1-921 1 775 1 222 1 478 1 341 1-401 1-89 1 6 1 669 1-453 1-1750 1 1374 1-1027 1 1326 1-618 1 158 1-368 1-42 1 440 1-45 1 691 1-1032 1 708 1-493 1 965 1-815 1 378 1-41 1-560 1-360 1 1296 1-850 1 391 1-1569 1 240 1 1753 1 335 1-1766 1 942 1 564 1-1776 1-131 1 2037 1-1023 1 540 1-310 1-77 1-64 1 836 1-1060 1 34 1 692 1-1100 1 672 1 441 1-391 1 173 1 20 1-380 1 918 1-902 1 1500 1-604 1-486 1-801 1-392 1-388 1 1211 1-128 1-114 1-251 1 51 1 42 1-569 1 1624 1-29 1-115 1-183 1-20 1-1431 1 1414 1-332 1 929 1-516 1 258 1-800 1-638 1 17 1-287 1 1589 1-870 1-369 1-120 1 677 1-250 1-616 1 1003 1-93 1 5 1 1103 1-1564 1 502 1 304 1-537 1 63 1-333 1 592 1 63 1 333 1-50 1-295 1 582 1-538 1-76 1-3 1 646 1-1677 1 1310 1-102 1-594 1 333 1-259 1 33 1 79 1-26 1 303 1-555 1 1866 1-1407 1-25 1-612 1-65 1 363 1 1202 1-1381 1 927 1-139 1 457 1-480 1-916 1 751 1-149 1 960 1 4 1-213 1-443 1 495 1-299 1-1142 1 1013 1-613 1-647 1 1669 1-314 1 500 1-547 1 118 1-197 1-885 1 1249 1-75 1 152 1-630 1 289 1 717 1-1350 1 397 1-467 1 244 1 480 1-149 1-64 1 1114 1-593 1 162 1-902 1 955 1-1112 1 485 1-513 1 52 1-362 1-164 1 1337 1-629 1 596 1-595 1-98 1 220 1-815 1 556 1 772 1 268 1-517 1-181 1-782 1 932 1-704 1 876 1 508 1-1088 1 111 1 772 1-1218 1 291 1 559 1-475 1-2 1-78 1 805 1 501 1-1134 1 237 1-469 1 215 1 180 1 242 1-783 1 1260 1-1720 1 1161 1 240 1-263 1-103 1-243 1-1014 1 1728 1-1632 1 218 1 516 1 212 1-701 1 587 1-106 1 227 1-588 1 868 1 384 1-810 1 811 1-525 1 193 1-205 1-1352 1 1064 1-1415 1 1410 1-1498 1 2136 1-225 1 155 1-397 1 660 1-1053 1 444 1 342 1-1543 1 1588 1 317 1-1778 1 1523 1-194 1-253 1-414 1 1133 1-377 1-1085 1 1832 1-796 1 129 1 14 1 700 1-1563 1 1447 1-299 1-1231 1 1425 1-1125 1 1088 1-475 1-15 1-1518 1 480 1 870 1 147 1-476 1-1267 1 2085 1-289 1 543 1-1068 1 602 1-152 1-771 1-773 1 1094 1-125 1 566 1 941 1-1844 1 581 1-833 1 1285 1-508 1-660 1 468 1-364 1 1338 1-1000 1 124 1-417 1 1440 1-572 1-10 1-172 1 99 1 131 1-1043 1 320 1 403 1-55 1-744 1 1228 1 26 1-541 1 1344 1-1360 1-330 1-71 1 459 1-618 1 1105 1-505 1-222 1 339 1 41 1-87 1-44 1 113 1-761 1 2 1-658 1 1406 1 378 1-265 1-923 1 838 1 42 1 1734 1-1490 1-992 1-163 1 1339 1-1310 1 905 1-813 1 1384 1-1234 1-449 1 2086 1-1337 1-147 1 509 1-482 1 183 1-430 1 187 1-129 1 915 1 125 1-238 1-545 1-230 1-99 1-433 1 1084 1-338 1-209 1-187 1-630 1 1214 1 326 1 166 1-821 1 971 1-1149 1-391 1 324 1 270 1 20 1 849 1-862 1-106 1 1 1-299 1 700 1 955 1-855 1-365 1 640 1-641 1-15 1 427 1 239 1-871 1 657 1-227 1-93 1-420 1 93 1 329 1 89 1 747 1 180 1-327 1-60 1-1393 1 1810 1-579 1-1068 1 1419 1-1139 1-282 1 1191 1-1243 1 1199 1-1153 1 553 1-486 1 1441 1-1213 1 1368 1-1344 1-132 1 1232 1-1433 1 180 1 546 1 267 1-887 1 901 1 19 1-328 1-132 1-616 1 1551 1-553 1 46 1-378 1 327 1 199 1-996 1 555 1 770 1-170 1 160 1-676 1 116 1 542 1 437 1-198 1-1448 1-60 1 929 1-1230 1 1354 1-937 1 1104 1-961 1 1108 1-1255 1 731 1-605 1 628 1-113 1 411 1-829 1 727 1-1936 1 1382 1 270 1-611 1 1027 1 105 1 241 1-1708 1 581 1-633 1 1632 1 619 1-1358 1-867 1 578 1-17 1-121 1 232 1-345 1-90 1 469 1 27 1 771 1-440 1-738 1 833 1-816 1 750 1-544 1 823 1-2120 1 2079 1-436 1-221 1 1247 1-724 1-728 1 502 1 271 1 26 1 230 1-1104 1 83 1 1674 1-1389 1 217 1 43 1-1119 1 2494 1-3383 1 1919 1-854 1 1404 1-1117 1-239 1 971 1-249 1-231 1 163 1-627 1 196 1-383 1 1793 1-1172 1 680 1-289 1-154 1 694 1-322 1-428 1 9 1-269 1-734 1 1563 1 16 1-675 1-879 1 1262 1 693 1-468 1-1201 1-548 1 1278 1-118 1-690 1 557 1-324 1 568 1-459 1-178 1 1320 1-809 1 468 1 865 1-1144 1-340 1-129 1-815 1 2081 1 707 1-1089 1-404 1-961 1-14 1 138 1 2773 1-2101 1-875 1 1208 1 820 1-511 1-617 1-757 1 1787 1-1000 1 223 1 1200 1-1740 1 1033 1-107 1-273 1-1360 1 1401 1-279 1 286 1 22 1 898 1-1833 1 354 1 386 1-497 1 2342 1-3037 1 1040 1-25 1-588 1 857 1-266 1-497 1 1962 1-2266 1-308 1 1116 1-1042 1 1057 1-649 1-177 1 1565 1-1276 1 982 1 114 1-344 1-908 1 402 1-20 1 761 1-313 1-354 1-157 1 457 1 224 1-694 1 1277 1-696 1 884 1-793 1 570 1-873 1 391 1 999 1-2319 1 1018 1 484 1 251 1-1198 1 328 1-443 1 628 1 314 1-741 1 93 1 710 1-309 1 65 1-1598 1 588 1 693 1 120 1 724 1-636 1-1298 1 1185 1 595 1 304 1-843 1-850 1 154 1 860 1 133 1 1299 1-632 1-1069 1 633 1 396 1-1732 1 26 1 562 1 875 1-861 1 22 1-973 1 916 1 352 1-438 1 316 1-237 1 440 1 335 1-1620 1 441 1 230 1 556 1-1391 1 256 1 425 1 826 1-1019 1-114 1 1077 1 138 1 1094 1-1504 1-1087 1 847 1-213 1-62 1 1192 1-1556 1 639 1 1090 1-1177 1 2263 1-1851 1-363 1-401 1 728 1-635 1 1289 1-22 1-730 1-994 1 460 1 165 1 734 1-778 1 1143 1-166 1-602 1 55 1 320 1 63 1-115 1-127 1-552 1-855 1 1363 1 701 1-732 1-32 1-697 1-303 1 361 1 569 1 589 1-1073 1 906 1 448 1 30 1-905 1-538 1 453 1 66 1-220 1 833 1 184 1-867 1 79 1-780 1 1154 1 939 1-1506 1-145 1-421 1-226 1 91 1 865 1-571 1 1135 1-865 1 992 1-931 1 1096 1-1411 1 1022 1 555 1-1558 1 358 1 643 1-184 1-209 1-373 1 244 1 430 1-1353 1 642 1 436 1 547 1-1228 1 1282 1-1177 1 415 1 804 1-874 1-14 1 135 1-1471 1 1741 1-643 1 24 1 1075 1 196 1-902 1 1445 1-2020 1 328 1 311 1-45 1-191 1 1130 1-379 1 194 1-873 1 753 1 44 1-1468 1 891 1-21 1 1132 1-1310 1 821 1-553 1-676 1 1168 1-209 1-377 1-302 1-216 1 719 1 198 1 1024 1-1847 1-417 1 1190 1-1021 1-45 1 1077 1-82 1-354 1 537 1-824 1 1113 1-1208 1 208 1 18 1-958 1 1195 1-879 1 1005 1-136 1 353 1-70 1 37 1-470 1-701 1 1672 1-1386 1 445 1-71 1 306 1-62 1-564 1-268 1 507 1 1601 1-1372 1-335 1-746 1 927 1 1532 1-1162 1-193 1-18 1 173 1-419 1 424 1-115 1 428 1 210 1 375 1-1358 1 1241 1-792 1 402 1-172 1-934 1 1495 1-271 1 87 1-536 1 38 1-920 1 288 1-116 1-840 1 1517 1-582 1 974 1-281 1-22 1-11 1-337 1 881 1-975 1 646 1 749 1-1000 1-90 1-553 1 159 1 1030 1 9 1-1571 1 660 1-95 1-142 1 1017 1-1379 1-341 1 1641 1-1028 1 798 1-896 1 765 1 405 1-778 1 17 1 529 1 209 1-258 1-207 1-28 1-18 1 26 1-1090 1 1261 1 227 1-255 1-947 1 698 1 490 1-788 1 658 1 655 1-442 1-710 1 392 1-97 1 25 1 363 1 846 1-621 1-1314 1 1342 1-2034 1 943 1 821 1-397 1-802 1 1656 1-1228 1 1142 1-1648 1 1764 1-1849 1 1583 1-777 1-652 1 825 1-20 1 475 1-785 1-127 1 365 1 682 1-409 1 1101 1-1820 1 76 1 1454 1-44 1-1710 1-283 1-207 1 1332 1-597 1 984 1-1114 1 797 1 372 1-1289 1-279 1 515 1 506 1 383 1 240 1-192 1-889 1 326 1 923 1-1555 1-201 1 1133 1-1029 1 227 1 1421 1-1327 1 1103 1 592 1-917 1-871 1-28 1 1149 1 143 1-500 1-1097 1 1076 1-338 1 1160 1 580 1-1281 1-1405 1 2053 1-939 1-965 1 1455 1-970 1 349 1-25 1-799 1 476 1-584 1 1146 1-166 1 395 1-1649 1 1456 1 753 1-1555 1 1618 1-1359 1-89 1 624 1 399 1-808 1 1342 1-1979 1 600 1 662 1-532 1-271 1 446 1-322 1-193 1 1437 1-1994 1 2688 1-1619 1-16 1-734 1 719 1-571 1 710 1 198 1-846 1 873 1-705 1 309 1 1171 1-830 1-597 1 379 1 305 1-119 1 704 1-480 1-1095 1 738 1 524 1 55 1-1033 1 416 1 91 1-280 1-206 1-835 1 1129 1-21 1 56 1 342 1 896 1-1573 1 524 1 476 1-1321 1 1913 1-709 1-1299 1 593 1-238 1-13 1 1127 1-857 1-795 1-212 1 1282 1-415 1-98 1-190 1 566 1 479 1-565 1 871 1-1067 1 431 1-1448 1 2293 1-1738 1-330 1 781 1 1185 1-472 1-45 1-1217 1 1282 1-776 1 293 1 348 1 555 1-477 1 302 1-778 1 388 1-782 1 339 1-758 1 1121 1 288 1-325 1-848 1-92 1 511 1 224 1 458 1-1604 1 825 1 660 1-1160 1-154 1 1563 1 183 1-1680 1 1252 1-512 1-202 1-56 1 1138 1-542 1-692 1-1018 1 1208 1 92 1-663 1 1479 1-1583 1 1680 1-699 1 474 1-1148 1 1216 1-733 1 499 1-1311 1-128 1 1951 1-975 1 354 1-1018 1 1505 1-547 1-751 1 1017 1-540 1 262 1 48 1 699 1-785 1-409 1 33 1-322 1 758 1-26 1-450 1-300 1-213 1 593 1 820 1-680 1-99 1 270 1 230 1-513 1-102 1-156 1 271 1 131 1 151 1 10 1 273 1-505 1 108 1-560 1 360 1 478 1-1013 1 853 1-164 1 557 1-445 1-794 1 1945 1-1154 1-1090 1 1229 1 472 1-1073 1 683 1-627 1 974 1-1668 1 653 1 113 1 921 1 77 1-318 1-925 1-1573 1 2441 1 414 1-1062 1-174 1 405 1 585 1 39 1-65 1-1630 1 359 1 1013 1-484 1 1525 1-750 1-141 1-197 1-478 1 157 1 697 1-1246 1 113 1 718 1-202 1-225 1 1163 1-511 1-1 1 126 1 38 1-1530 1 1160 1-651 1-483 1 1652 1-825 1-219 1 488 1 960 1-877 1-632 1 507 1 1161 1-1378 1-334 1 57 1 1131 1-916 1-706 1 1637 1-1315 1 1140 1 13 1-183 1-1441 1 98 1 628 1 91 1 288 1 81 1-2 1 737 1-1568 1 671 1-347 1 203 1 1000 1 521 1-1026 1 758 1-712 1-631 1 27 1 306 1-246 1 751 1-26 1 24 1-866 1-492 1 2058 1-645 1-1576 1 237 1-571 1 1130 1 449 1-272 1-152 1 264 1 142 1-481 1-111 1-670 1 1617 1-1196 1 685 1-52 1 144 1-1396 1 2292 1-1145 1 160 1-598 1 271 1 747 1-659 1 1021 1-125 1-956 1-839 1 394 1 1393 1-580 1-393 1 483 1-151 1 622 1 40 1-481 1-208 1 309 1-599 1 648 1 149 1-940 1 347 1 214 1-347 1-897 1 391 1 314 1-547 1 1565 1 282 1-230 1-1605 1 853 1-881 1 1195 1 276 1 190 1-233 1-421 1-293 1 480 1-1354 1 672 1 874 1-533 1-1034 1 1055 1-1269 1 1257 1-348 1 780 1-251 1 372 1-1099 1 428 1-265 1 338 1-502 1 1241 1-744 1-161 1-331 1-412 1 508 1 197 1 1551 1-860 1-222 1-236 1-460 1 438 1-910 1 727 1-901 1 1265 1-307 1 982 1-844 1-464 1-712 1 1075 1 197 1 294 1 105 1-675 1-77 1 810 1-596 1 172 1 633 1 27 1-1038 1 506 1-244 1-27 1 172 1-101 1 408 1 99 1 147 1-248 1 488 1-1095 1 369 1-528 1-293 1 903 1-265 1 337 1-471 1-724 1 2059 1-1144 1-1353 1 1556 1-968 1 385 1 162 1 161 1-1095 1 1489 1-291 1 213 1 555 1-1163 1 479 1-1186 1 1936 1-1028 1 309 1-610 1 680 1 10 1 378 1-747 1 92 1 999 1-1802 1 949 1-95 1-556 1-23 1 157 1 547 1 240 1-1693 1 989 1 1807 1-1863 1 281 1 344 1-117 1 216 1 638 1-1265 1 481 1 101 1 609 1-1127 1-115 1 886 1-799 1 36 1 722 1-1245 1 371 1 591 1-394 1 10 1 604 1 206 1-446 1-21 1-759 1 369 1 740 1-915 1-304 1 1786 1-952 1-709 1-252 1 568 1 148 1-436 1 289 1-535 1 279 1 705 1 839 1 430 1-885 1-335 1 284 1-366 1-519 1 669 1-544 1 1023 1-1388 1 811 1 53 1-902 1 269 1-589 1-58 1 323 1 469 1 268 1-8 1 201 1-362 1-303 1 39 1 899 1-863 1 1119 1-232 1-1011 1 593 1-595 1 718 1-536 1 956 1-73 1-265 1 84 1 414 1-285 1-471 1 280 1-203 1-276 1-162 1 351 1-1054 1 501 1 1363 1-1551 1 408 1 432 1 135 1 562 1 839 1-1646 1 531 1-1028 1 1521 1-1201 1-79 1 608 1-659 1 347 1-537 1 1074 1-274 1-1511 1 1092 1-713 1 1134 1-812 1 120 1 667 1-1030 1 1878 1-1676 1-147 1 398 1 131 1-277 1 694 1-797 1 968 1 15 1-763 1 192 1-859 1 1119 1-71 1-287 1 694 1-604 1 982 1-2249 1 1212 1-748 1 947 1-295 1-13 1 337 1 520 1-1125 1 584 1-342 1 224 1 1291 1-1736 1-339 1 984 1-582 1 355 1-832 1 238 1 669 1 82 1-233 1-281 1 371 1-1069 1 791 1-581 1-431 1 1698 1-802 1 1380 1-1749 1-97 1 692 1 606 1-1248 1 647 1-30 1-262 1 850 1 64 1-1270 1-168 1 1495 1 56 1-584 1-1086 1 11 1 478 1 1094 1-1204 1 439 1 826 1 341 1-328 1-1112 1 533 1 942 1-921 1 836 1-170 1-551 1 240 1 554 1-1225 1-273 1 289 1 1158 1-735 1-936 1 1091 1-576 1 515 1-275 1 92 1-30 1-667 1 1070 1-17 1 788 1-1262 1 189 1 61 1-186 1 93 1 546 1-365 1-974 1 965 1-565 1 399 1-711 1 557 1-271 1-395 1 1106 1-717 1 688 1-1588 1 1416 1-1488 1 1205 1-190 1-739 1 1393 1-775 1 279 1 320 1 581 1-63 1-1617 1 1640 1-425 1-689 1 946 1 508 1-1063 1-196 1-829 1 724 1 738 1-210 1 758 1-696 1-24 1-1352 1 789 1 318 1-131 1-304 1 333 1-100 1-449 1 1800 1-1681 1 668 1 207 1 532 1-949 1 234 1 263 1-172 1 524 1 449 1-1618 1 520 1 795 1-1316 1 204 1 961 1-760 1 135 1-229 1 699 1-251 1 525 1-1178 1-387 1 1291 1-379 1 354 1-876 1 947 1 401 1-156 1-313 1-582 1 257 1 661 1-1193 1 232 1-99 1 417 1-607 1 434 1-472 1 285 1-168 1 714 1-954 1 1587 1-1669 1 756 1-602 1 1348 1-893 1 649 1-517 1 218 1 148 1-209 1-1117 1 1458 1-786 1 755 1-949 1 912 1-38 1-595 1-142 1 104 1 434 1-549 1-376 1 1388 1-929 1-751 1 81 1 1039 1-660 1-132 1-224 1 757 1-587 1 689 1 117 1 556 1-2390 1 2009 1 192 1-43 1-844 1-287 1 745 1-597 1-144 1 884 1 298 1-136 1-475 1 76 1-908 1 1125 1-599 1 628 1-247 1-1574 1 1872 1-589 1-470 1 1145 1-121 1-490 1-538 1 18 1 1034 1-262 1 460 1 74 1 463 1-1169 1 1064 1 251 1-1411 1 1440 1-742 1-1432 1 358 1 673 1-857 1 1199 1-251 1-1421 1 87 1 1377 1-627 1-188 1 391 1 703 1-444 1-1058 1 514 1 541 1 968 1-2100 1 175 1 1028 1-769 1-315 1 1393 1 250 1-218 1-1229 1 444 1 105 1-939 1 1299 1 631 1-1003 1 61 1-193 1 914 1-483 1-476 1 256 1 447 1-788 1 4 1 330 1 121 1 191 1-211 1 1367 1-1167 1-460 1 133 1 595 1 684 1-1678 1 1126 1-798 1 1372 1-1031 1-1851 1 2427 1-823 1 666 1-893 1 262 1-149 1 782 1-1455 1 186 1 457 1 1273 1-813 1-673 1 509 1-1259 1 1325 1-329 1 394 1 643 1-483 1-368 1-63 1-267 1 706 1-293 1 936 1-1513 1 54 1 952 1-829 1 173 1 824 1-657 1 672 1 528 1-1373 1-116 1-122 1-275 1 995 1-173 1 544 1-1218 1 100 1 501 1-21 1-209 1 1231 1-1947 1 1307 1-525 1 1047 1-1276 1 1343 1-973 1-216 1 123 1-292 1 641 1-122 1 682 1-612 1-621 1 688 1 64 1-817 1-262 1 1333 1-1208 1-92 1 700 1 221 1 821 1 248 1-1707 1 715 1 382 1-339 1-1254 1 1102 1 432 1-41 1 431 1-256 1-1263 1 239 1 253 1-26 1 407 1-1175 1-284 1 1796 1 38 1-1229 1 1185 1 197 1-1182 1 1190 1 734 1-1609 1-1548 1 2824 1-1194 1-561 1 111 1 1194 1-1094 1-326 1 190 1-310 1 1465 1-408 1-1483 1 900 1 274 1 902 1-1207 1 836 1-285 1 647 1-981 1-493 1 488 1-510 1 924 1-310 1-402 1 541 1-877 1 266 1-988 1 2073 1-252 1-190 1-875 1 973 1-513 1-1568 1 2550 1-157 1-1378 1 1224 1-264 1-306 1 118 1 534 1 251 1-202 1 335 1-209 1-579 1 784 1-655 1 706 1-2322 1 1401 1-72 1 1347 1-3117 1 1440 1 379 1-1238 1 1957 1-767 1 440 1 356 1-489 1-735 1 731 1-49 1-271 1-624 1-207 1 1944 1-1274 1-327 1 518 1-573 1 1295 1-704 1-111 1 209 1-134 1-518 1-110 1 391 1 860 1-249 1-376 1-1166 1 2265 1-1546 1 1336 1-441 1-344 1-567 1-94 1 672 1 621 1-1101 1-2 1-64 1 799 1 345 1-1098 1-50 1 1092 1-933 1 468 1 477 1-781 1-193 1 528 1-420 1-430 1 203 1 816 1-1047 1 857 1-9 1-412 1 289 1 11 1-549 1 16 1-141 1 942 1 793 1-1742 1 657 1-680 1 615 1 372 1-834 1-181 1 935 1-558 1-188 1 1147 1-370 1-849 1 444 1 276 1 6 1 435 1-1798 1 1562 1 930 1-2799 1 1277 1 289 1-104 1 182 1 262 1-928 1 875 1 507 1-2225 1 1468 1 227 1 25 1 629 1-523 1-1377 1 1216 1-294 1 214 1-1035 1 1036 1-599 1 373 1 21 1-262 1-13 1-684 1 1447 1-921 1 719 1 281 1-497 1 199 1-472 1 61 1 58 1-246 1-128 1 1877 1-1344 1-190 1-342 1 10 1 270 1-47 1-117 1-613 1 1536 1-63 1-1864 1 1442 1-380 1-561 1 715 1 1069 1-344 1-1196 1-5 1 830 1-618 1 470 1 629 1-1066 1 474 1 405 1-1002 1 966 1-310 1-1014 1 502 1-78 1-572 1-158 1 1905 1-1229 1 1420 1-587 1 663 1-736 1 175 1-204 1-726 1-288 1 1049 1-251 1 310 1 650 1-930 1 987 1-1840 1 579 1 330 1-210 1-570 1 1286 1-752 1-140 1-1083 1 804 1-200 1 395 1 107 1-492 1 570 1 1284 1-371 1-1800 1 467 1 393 1-415 1 935 1 382 1 351 1-393 1-234 1-481 1 687 1-348 1-562 1 190 1-796 1 680 1 528 1-1271 1 699 1-318 1-483 1 1356 1-637 1 452 1-216 1-95 1 31 1 1302 1-958 1-291 1-699 1 813 1 1484 1-2049 1 406 1-351 1 753 1-63 1-154 1-673 1 236 1 103 1 799 1-488 1 603 1-597 1 419 1-640 1 232 1-366 1 80 1 721 1 265 1-1556 1 673 1 148 1 686 1-878 1 543 1-1152 1 198 1 460 1-188 1-1103 1 1290 1 371 1 683 1-1793 1 1412 1-855 1 1182 1-1172 1 1065 1-2059 1 798 1 898 1-228 1 167 1-12 1-474 1-421 1 877 1-135 1 712 1-2410 1 2453 1-1428 1 302 1 195 1 109 1 1053 1-691 1-129 1-957 1 836 1 369 1 164 1-805 1-93 1 18 1-399 1 448 1 1130 1-685 1-1657 1 620 1 501 1-55 1-332 1 1220 1 13 1 42 1 39 1-892 1 1091 1-1263 1 360 1-177 1-459 1-262 1 1446 1-175 1-1095 1 822 1 565 1-360 1-189 1-743 1 1144 1-1438 1 991 1-167 1-807 1 947 1 292 1-858 1-196 1 156 1-763 1 973 1 544 1-522 1 271 1-11 1 347 1 460 1-635 1-490 1 991 1-1307 1 920 1 777 1-1264 1 204 1-796 1 691 1-236 1 320 1 661 1-246 1-816 1 447 1 191 1 856 1-396 1-1345 1-344 1 439 1 1090 1-204 1-374 1-133 1 80 1-38 1 64 1-1 1 671 1-1360 1 1732 1-733 1 138 1 270 1 598 1-414 1-1485 1 1535 1-648 1 137 1-1307 1 1343 1-159 1-238 1-638 1 34 1 468 1 460 1 207 1 131 1-939 1 1386 1-1929 1-502 1 1024 1 389 1-279 1-132 1 844 1-198 1-334 1-424 1 1090 1-2221 1 2056 1 467 1-1266 1 184 1 634 1-352 1 389 1-1782 1 1546 1-596 1-202 1 775 1-846 1-1124 1 779 1 1674 1-1479 1 816 1-917 1 942 1-762 1-190 1 463 1 200 1-125 1-40 1 930 1-833 1 190 1-113 1 209 1-419 1 743 1-196 1-202 1-731 1 583 1-432 1 791 1-343 1-225 1 66 1-351 1 1033 1 92 1-1189 1 700 1-467 1-526 1 1462 1-498 1 95 1 1076 1-805 1 412 1-1142 1 633 1 24 1-939 1 547 1-105 1-382 1-213 1 1592 1 527 1-1082 1 621 1-1158 1 267 1 89 1 355 1 451 1-984 1-1413 1 1644 1-665 1 1934 1-881 1-612 1 343 1-391 1-123 1 795 1 742 1-219 1-1841 1 1304 1-383 1-566 1 1366 1-1458 1 995 1-367 1 384 1-547 1 830 1-201 1-515 1 800 1-447 1-1305 1 400 1-780 1 1006 1 284 1-1242 1 469 1 1964 1-388 1-372 1 1273 1-600 1-1243 1-296 1 1705 1-1040 1 0 1-442 1 123 1 321 1-712 1 1333 1-179 1 117 1-154 1-1624 1 1710" stroke="#E15F99" stroke-width="13.23" fill="none"/><path transform="translate(465.65 527.8) scale(0.10583)" d="M0-209l1 505 1-605 1 287 1 847 1-1351 1 577 1-376 1-639 1 823 1 705 1-206 1-892 1 1299 1-903 1-59 1 801 1-693 1-203 1 698 1-154 1-538 1 968 1-220 1-963 1 456 1 789 1-750 1-1013 1 1813 1-1222 1 30 1 491 1-411 1 672 1-1165 1-92 1 1365 1-350 1-181 1 397 1-513 1 730 1-848 1 461 1-132 1-273 1-239 1 1002 1-930 1-48 1 522 1-867 1 1208 1-115 1-487 1 558 1-1088 1 627 1-799 1 1456 1-54 1-1200 1 1251 1-1115 1 989 1-563 1-473 1 643 1 571 1-346 1-854 1 496 1-270 1 326 1-106 1 250 1 434 1-819 1 189 1 1137 1-1044 1-507 1-504 1 1726 1-771 1-234 1-105 1 764 1-634 1 487 1-195 1 256 1-442 1 366 1-363 1 204 1-526 1-402 1 924 1 344 1-264 1 159 1 591 1-884 1 271 1-731 1 541 1-554 1 83 1 665 1-89 1 104 1-38 1-669 1 704 1-52 1 203 1-1157 1 924 1-107 1 374 1-574 1 533 1-59 1 719 1-205 1-961 1-299 1 1273 1-959 1-12 1-1500 1 2119 1-169 1 201 1-984 1-116 1 690 1-938 1-307 1 1347 1-534 1 390 1 231 1-90 1-120 1 550 1-630 1-465 1 913 1-220 1 202 1-676 1 253 1-543 1 653 1 606 1-1068 1 453 1-757 1 224 1 1755 1-343 1-1052 1 412 1 782 1-896 1-958 1 343 1 799 1-615 1-382 1 629 1-1028 1 1303 1-1478 1 300 1 532 1 155 1 100 1 508 1-1005 1-154 1 256 1 264 1 92 1 545 1-145 1 415 1-1013 1 727 1-913 1 788 1-1094 1-78 1 19 1 204 1 761 1 4 1 223 1-560 1-707 1 1452 1-1844 1 1570 1 315 1-791 1-387 1 753 1 348 1-1457 1 1499 1-1101 1 443 1 276 1-221 1 596 1 13 1-745 1 706 1-141 1-1165 1-184 1 363 1 111 1 603 1-180 1 435 1 1087 1-1577 1-14 1-401 1 1147 1-1232 1 887 1 367 1-514 1-622 1 494 1-238 1 695 1-713 1-266 1 981 1-685 1 927 1-826 1 905 1-997 1 216 1 585 1-778 1 706 1-562 1 524 1-761 1 575 1-1046 1 513 1-44 1 979 1 396 1-677 1-1368 1 1443 1-1135 1-19 1 966 1-196 1-797 1 820 1 79 1 89 1-340 1 95 1-705 1 523 1-495 1 675 1-1370 1 1375 1 15 1 342 1 467 1-431 1-566 1 631 1-955 1 1288 1 23 1-1036 1-41 1 792 1-1159 1-159 1 536 1 862 1-1326 1 803 1-59 1-345 1 617 1-1155 1 1116 1-884 1 153 1-523 1 663 1-188 1 655 1-84 1 194 1-713 1 734 1-1131 1 846 1 561 1-272 1-956 1 858 1-562 1 1132 1-1060 1-170 1 137 1-147 1 923 1 348 1-180 1-1124 1 227 1-211 1 711 1-714 1 1224 1-1020 1 754 1-318 1-568 1-115 1 538 1 101 1-891 1 162 1 893 1-506 1 260 1-615 1 265 1 11 1 176 1 327 1-853 1 358 1 1419 1-1008 1-337 1 524 1 95 1-149 1-513 1 679 1-687 1-516 1 213 1-19 1 623 1-728 1 606 1-449 1 1049 1-1240 1 954 1-319 1-532 1 549 1 247 1-160 1-654 1-7 1 233 1 675 1-116 1-552 1-45 1 761 1-6 1-727 1-205 1 526 1 663 1-1447 1 809 1-222 1 1365 1-741 1-276 1-258 1 628 1 342 1 60 1-653 1-349 1 24 1 1031 1-526 1-315 1-566 1 229 1 156 1 1008 1-1436 1 612 1-158 1 461 1-242 1 71 1 35 1 248 1-809 1-118 1 748 1 152 1-5 1-268 1-895 1 808 1-1017 1 1601 1-90 1-158 1 39 1-614 1-733 1 1281 1-558 1-510 1-557 1 1133 1-402 1-177 1 634 1-244 1 475 1 276 1-152 1-905 1-98 1 564 1 761 1-1271 1 637 1-776 1 722 1 648 1-450 1 198 1-1169 1 1999 1-870 1-144 1 895 1-1279 1-98 1-122 1 9 1 481 1-538 1 718 1-246 1-99 1 77 1-228 1 605 1-276 1 241 1-340 1-126 1 551 1-1139 1-256 1 715 1 238 1 372 1-236 1 23 1-471 1 362 1-369 1 71 1 542 1 437 1-77 1-60 1-537 1-625 1 1088 1-815 1 427 1-744 1-510 1 611 1 374 1-88 1-418 1 828 1 251 1-492 1-744 1 1197 1-943 1 123 1 569 1 295 1 437 1-244 1-685 1-294 1 709 1-29 1 106 1-1664 1 1979 1 55 1-1315 1 1121 1-1086 1 952 1-964 1-181 1 957 1-228 1 505 1-971 1 621 1 331 1-721 1 38 1 217 1 201 1-724 1 841 1 109 1-320 1-398 1 473 1 128 1 205 1-116 1-67 1-1385 1 1969 1-691 1-272 1 495 1 161 1-912 1-431 1 145 1 567 1 239 1-576 1 1207 1-422 1-1206 1 542 1 139 1 183 1 101 1 242 1-745 1 37 1-7 1 1549 1-1949 1 221 1-372 1 1116 1 844 1-456 1-218 1-1519 1 1448 1-151 1-767 1 54 1-40 1 753 1-1225 1 770 1 655 1-659 1 955 1-88 1-295 1 265 1-362 1 81 1-94 1 211 1-1045 1 1110 1-244 1 199 1-167 1 369 1-1786 1 1249 1-574 1 622 1 491 1-413 1 88 1 287 1-702 1-791 1 746 1-446 1-135 1 1693 1-2013 1 1689 1-1655 1 849 1-204 1-844 1 606 1 1394 1 103 1-316 1-1157 1 362 1-306 1 249 1-411 1 1182 1 423 1-611 1-777 1 957 1 699 1-943 1-645 1 141 1 399 1 90 1 839 1-1086 1-1003 1 1257 1-1114 1 1509 1-429 1 40 1-236 1 936 1-1561 1 800 1 969 1-1468 1 265 1 745 1-609 1-489 1 56 1 181 1 524 1-505 1-530 1-474 1 804 1-103 1-86 1 640 1 783 1-617 1-187 1-208 1 137 1 406 1-75 1-142 1 354 1-6 1 481 1-697 1-229 1 411 1-192 1-178 1 628 1-230 1 143 1-717 1 825 1-602 1 1074 1-1979 1 619 1 702 1-403 1-1035 1 931 1 819 1-768 1 227 1-535 1 165 1 918 1-979 1-396 1-238 1 544 1-805 1 210 1 348 1-413 1 2129 1-1980 1-107 1 811 1-485 1 773 1-255 1 5 1 457 1-433 1 814 1-854 1-963 1-104 1 1003 1-925 1 698 1 883 1-344 1-298 1-20 1-353 1 711 1-156 1-762 1 471 1-148 1 245 1-403 1-30 1 800 1-1006 1 935 1-524 1 340 1-507 1 200 1-155 1 227 1 133 1-166 1 113 1 429 1 381 1-1094 1-394 1 1179 1-771 1 585 1-416 1-365 1 272 1 314 1 893 1-906 1-93 1-659 1 1011 1-310 1-154 1-557 1 1280 1-1054 1 485 1 300 1 363 1-209 1-938 1 704 1 224 1-283 1-907 1 177 1 87 1-83 1 106 1 618 1 360 1-1219 1 709 1-131 1 309 1-508 1-438 1 913 1-292 1 46 1-314 1 350 1-27 1 332 1-331 1 394 1-761 1 453 1-928 1 1212 1 182 1-1012 1 145 1 1045 1-2071 1 1446 1-671 1 786 1-564 1-218 1 828 1-436 1-271 1-615 1 552 1-220 1 422 1-61 1 68 1 400 1 847 1-76 1-1057 1-68 1 218 1 340 1-38 1 401 1-1269 1 1484 1-1719 1 1080 1-1551 1 1071 1 420 1-228 1 316 1-1041 1 806 1-135 1 582 1-759 1 1083 1-428 1-1000 1 1734 1-1234 1-459 1 552 1-704 1 112 1 397 1 1089 1-583 1-73 1-691 1 571 1 110 1 522 1-561 1-220 1 1396 1-1237 1-227 1 339 1-60 1 221 1-760 1 754 1-906 1 433 1 1181 1-838 1-303 1-291 1 377 1 130 1-491 1-406 1 1764 1-610 1-1205 1 728 1 657 1-1402 1-136 1 1142 1-512 1 381 1-181 1-320 1 647 1-98 1 121 1 736 1-1132 1-194 1 350 1 62 1-399 1 788 1 184 1-786 1 157 1-829 1 1649 1-716 1 615 1-1746 1 1319 1-613 1 1555 1-656 1-899 1 610 1 107 1-674 1 291 1-5 1-73 1 388 1-1051 1 267 1 598 1 120 1 770 1-375 1-1274 1 1303 1-399 1-1083 1 309 1 376 1-33 1 378 1-260 1 69 1-666 1 287 1 776 1-1116 1 291 1-144 1-77 1 242 1 296 1-574 1 71 1 724 1-42 1-223 1-135 1 292 1 694 1-1331 1 961 1 251 1-158 1-464 1 149 1 1079 1-384 1 23 1-425 1-455 1 405 1-1349 1 561 1-306 1 374 1 1021 1-900 1 1003 1-244 1-634 1 90 1-304 1 451 1-693 1 136 1 232 1 552 1-72 1-851 1-942 1 1719 1-333 1 542 1 814 1-1582 1 233 1-269 1 681 1 104 1-1195 1 1247 1-838 1-131 1 498 1 289 1-414 1 1037 1-764 1 49 1 537 1-579 1-608 1-735 1 1759 1-794 1 7 1 370 1 140 1-551 1-121 1 1114 1-1518 1 854 1-130 1 351 1-929 1 1321 1-437 1-318 1 547 1-347 1-387 1-342 1 697 1 150 1-482 1 183 1 591 1-977 1 592 1 313 1-958 1 204 1 695 1-752 1 709 1-68 1 227 1-949 1 510 1-374 1 976 1-447 1 649 1-527 1-123 1-103 1 694 1-1333 1 1389 1-1454 1 678 1-608 1 1069 1-587 1-237 1-830 1 901 1-700 1 718 1-557 1 717 1-59 1-447 1 1123 1 182 1-931 1-1011 1 341 1 699 1-274 1 203 1-94 1-534 1 1326 1 22 1 384 1-547 1-982 1 567 1 639 1-343 1-83 1-772 1 278 1 42 1-430 1 352 1-292 1 974 1 79 1-296 1-1243 1 1640 1-681 1-175 1 766 1 146 1-1695 1 1139 1 117 1-377 1 135 1 806 1 158 1-789 1 305 1-371 1 588 1-1943 1 1088 1-803 1 1284 1-204 1 192 1-296 1-196 1 489 1 285 1-185 1-249 1-526 1 1241 1-393 1-603 1-482 1 930 1-381 1 264 1 32 1-202 1 356 1-150 1 36 1-962 1 816 1-863 1 918 1-138 1 510 1-525 1-622 1-105 1 1382 1-1824 1 1103 1-100 1-245 1 484 1 467 1-467 1 212 1-1179 1 971 1 1180 1-1842 1 378 1 331 1 943 1-2649 1 1860 1 3 1 120 1-382 1 129 1-207 1-86 1 240 1-564 1 1107 1-1021 1 291 1 177 1-363 1 241 1 19 1 349 1 200 1 329 1-117 1-312 1-745 1 537 1-188 1 618 1 244 1-829 1-1154 1 1775 1-1253 1 1284 1 26 1-140 1-31 1-860 1 331 1 57 1 318 1-742 1-464 1 781 1 335 1 347 1-375 1 473 1-1330 1 1072 1-988 1 1214 1-1073 1 137 1-93 1 233 1 692 1-1932 1 2113 1-1291 1 666 1 470 1-971 1-330 1 213 1 1211 1-298 1-674 1 89 1-273 1 591 1 807 1-269 1-759 1 677 1 183 1-1020 1-391 1 1040 1-234 1-39 1-534 1 605 1 1 1-109 1 604 1-1304 1-121 1 762 1-39 1-48 1 93 1 399 1-730 1-28 1-154 1 1035 1-600 1 770 1-1615 1 1724 1-708 1-874 1 1694 1-952 1 924 1-1334 1 663 1 113 1 182 1-754 1 201 1-296 1-67 1 716 1-440 1-534 1 398 1 47 1 146 1 282 1-244 1 36 1-1303 1 1413 1 366 1-703 1 310 1 205 1-741 1 510 1 323 1-712 1-712 1 329 1 545 1-26 1 174 1-384 1 472 1-289 1 267 1-189 1 1136 1-1019 1 282 1-118 1-362 1 848 1-201 1-537 1 59 1-440 1 296 1 1003 1-1037 1 290 1-150 1-446 1 461 1 158 1 723 1-600 1-645 1 148 1 899 1 84 1-510 1-433 1 615 1-1077 1-399 1 1673 1-1623 1 46 1 2051 1-199 1-763 1-80 1 444 1-440 1-404 1 864 1 706 1-997 1-573 1-353 1 211 1 1981 1-811 1-560 1 386 1-726 1 48 1-228 1-288 1 1020 1-1200 1 1637 1-178 1 17 1-110 1-807 1-528 1 1637 1-1153 1-248 1 476 1 1195 1-1285 1-238 1 1395 1-674 1-812 1 369 1-416 1-76 1 1318 1-32 1-1092 1 641 1-618 1 156 1 724 1-910 1 259 1 566 1-56 1 36 1-445 1-334 1 220 1 376 1 633 1-765 1 107 1 295 1 123 1-1274 1 32 1 1517 1-1234 1 308 1-730 1 1366 1-934 1 804 1-166 1-227 1-382 1 429 1 877 1-1239 1 439 1 118 1 777 1-670 1-828 1-48 1 407 1 705 1-864 1 848 1-857 1 690 1 516 1-1023 1 120 1 0 1 573 1 78 1-1126 1 608 1-877 1-1 1 1413 1-370 1 1327 1-1472 1 306 1-462 1 299 1 101 1 147 1-24 1-1037 1 298 1-789 1 705 1 617 1 43 1-1094 1 1825 1-1037 1 140 1 1001 1-1662 1 554 1 126 1 333 1-423 1 43 1-598 1 700 1-1442 1 1577 1-392 1 409 1-780 1 661 1-975 1 216 1 308 1 1088 1-859 1 38 1-367 1 1061 1-1067 1-23 1 398 1-188 1 409 1-751 1 1115 1-265 1-1691 1 1370 1-14 1 461 1-352 1-275 1 751 1 139 1-542 1-1054 1 987 1-1518 1 718 1 295 1 580 1-518 1-1282 1 2246 1-903 1-682 1 367 1 449 1 295 1-718 1 1406 1-1857 1 1386 1 609 1-879 1-75 1 110 1 675 1-460 1-791 1 206 1-414 1 517 1 651 1-409 1-200 1-83 1-46 1 20 1-225 1-22 1 803 1-1026 1 253 1 533 1-289 1 215 1-217 1 1086 1 18 1-1427 1 629 1-907 1-77 1 610 1-825 1 1467 1-601 1 768 1-767 1-498 1 495 1-73 1 681 1-650 1 541 1-462 1 437 1-862 1 164 1 103 1-220 1-239 1 661 1 373 1-45 1-1187 1 676 1 774 1-29 1-1176 1 763 1-1035 1 110 1 932 1 25 1 338 1-880 1 1130 1-946 1 433 1-989 1 988 1 223 1-712 1 851 1-886 1 523 1 153 1-137 1-36 1 525 1-960 1 342 1 283 1-1001 1 549 1-734 1 1785 1-1648 1 627 1-813 1 827 1 294 1 77 1-539 1 1028 1-626 1 337 1-1743 1 949 1 414 1 1409 1-1477 1 272 1-283 1-38 1 395 1 301 1-520 1-87 1-37 1-16 1-235 1 653 1-897 1 665 1-300 1 325 1-376 1-692 1 567 1 169 1 18 1 367 1 342 1 451 1-1143 1-206 1-91 1 1357 1-564 1-642 1 448 1-603 1-110 1 1153 1-1120 1 498 1 214 1-430 1 506 1 519 1-1310 1 153 1 4 1 189 1 827 1-731 1-869 1 650 1 185 1-113 1 242 1-133 1 17 1 359 1-240 1-72 1-42 1-1269 1 1480 1 465 1-575 1 845 1-1858 1 1261 1-231 1-191 1-378 1 768 1-484 1 293 1-95 1-330 1 653 1-1114 1 828 1-531 1 759 1-286 1 401 1-809 1 408 1 339 1 215 1-1719 1 894 1-139 1-285 1 372 1-433 1 733 1-213 1-753 1 1520 1-710 1 415 1-1145 1 986 1-252 1 43 1 513 1-271 1 172 1-833 1 837 1-951 1 414 1-261 1-275 1 215 1 246 1 574 1-259 1-143 1-347 1 391 1 130 1-1105 1 735 1-33 1 648 1-84 1-23 1 270 1-503 1-140 1 526 1-112 1-788 1 1354 1-745 1-859 1 324 1 86 1-557 1 180 1 325 1 725 1 350 1-238 1-1086 1 1009 1-85 1-818 1 733 1-352 1 913 1-409 1 24 1 55 1 469 1-400 1-883 1 373 1-341 1 791 1-1345 1 1286 1-135 1-417 1 464 1-344 1-706 1 518 1 479 1-872 1 943 1-79 1-383 1-39 1 1278 1-1271 1 462 1 408 1 4 1-33 1 247 1-1289 1-248 1 776 1-62 1-22 1-604 1 381 1-706 1 646 1-498 1 1554 1-289 1-585 1 190 1 322 1 151 1 207 1-792 1 201 1-595 1 690 1-325 1-265 1-142 1 685 1-264 1-948 1 2143 1-1383 1 5 1 320 1 798 1-908 1 337 1-107 1 181 1 158 1-560 1 678 1-1113 1 352 1 315 1-294 1-418 1 603 1-620 1-929 1 1253 1-167 1 539 1-309 1 411 1-1199 1 1206 1-675 1 658 1-376 1 544 1 73 1-1243 1 153 1 435 1 301 1-101 1 523 1-682 1-652 1 1169 1-1670 1 1109 1-688 1 528 1 874 1 106 1-1449 1 128 1 1131 1-1593 1 1180 1-1835 1 1983 1-745 1 488 1 458 1-777 1 842 1 110 1-469 1 743 1-47 1-555 1-317 1-364 1-243 1 762 1-978 1 706 1 264 1-650 1-150 1 696 1 247 1-457 1 245 1 700 1-699 1 16 1-106 1-152 1-457 1 1144 1-558 1-344 1 1706 1-1971 1 567 1-1381 1 1040 1 910 1-531 1 209 1-393 1 1040 1-935 1 293 1-7 1-395 1 166 1-986 1 895 1-234 1 733 1 24 1-1183 1 1125 1 349 1 12 1-185 1 134 1-171 1-1089 1 784 1-407 1-829 1 1469 1-24 1 582 1-1496 1 405 1 1149 1-1648 1 153 1 1995 1-798 1-1077 1 1008 1-408 1-471 1 157 1 461 1-664 1-374 1 882 1-1643 1 1087 1 116 1 883 1-129 1-64 1-953 1 1039 1-1240 1 169 1 852 1-288 1-879 1 1269 1 744 1-824 1-468 1-431 1 232 1-1093 1 770 1 382 1-466 1-28 1 546 1-320 1 99 1 227 1 125 1 591 1-506 1 431 1-877 1 342 1 680 1-540 1 103 1 602 1-408 1-418 1-738 1 804 1-292 1-449 1 127 1 514 1-254 1 463 1 87 1-185 1-82 1-444 1 166 1-140 1 1372 1-656 1-139 1 598 1 598 1-1476 1-891 1 1670 1-622 1-912 1 1055 1 44 1 491 1-539 1-528 1-78 1 672 1-657 1 1174 1-370 1-421 1-4 1-397 1 662 1 1005 1-1757 1-441 1 811 1 402 1 134 1-303 1 810 1-814 1 273 1 634 1-879 1-200 1-687 1 932 1-845 1 1152 1-84 1-418 1 600 1-477 1 512 1 22 1-184 1-629 1 382 1 256 1-1115 1 873 1-445 1 207 1-270 1 448 1 314 1-524 1-51 1-118 1 60 1 24 1 755 1-1057 1 0 1 559 1-207 1 63 1-687 1 1535 1-674 1-479 1 1151 1-506 1-1225 1 1572 1-653 1 415 1-369 1 333 1-477 1 837 1-1639 1 671 1 10 1 398 1-338 1 223 1-404 1 471 1-2 1-899 1 155 1-313 1 369 1 1367 1-1140 1-182 1 283 1-402 1-2 1 379 1-117 1 271 1-717 1 1383 1 51 1-1225 1 1356 1-1081 1 185 1-609 1 1140 1 20 1-440 1 18 1 341 1 68 1-467 1-398 1 1498 1-1571 1 223 1 500 1 286 1-172 1 705 1-1059 1 46 1 32 1-193 1 809 1-1091 1 543 1-121 1-108 1-1 1-260 1 286 1 8 1 544 1-167 1 526 1-881 1 266 1-106 1-350 1 498 1-887 1 1312 1-1340 1 170 1 739 1-377 1-288 1 781 1-422 1-361 1 244 1 434 1 577 1-1102 1-45 1-443 1 409 1 1075 1-101 1 234 1-1060 1 436 1-169 1 362 1 578 1-952 1 1007 1 175 1-518 1-720 1-475 1 496 1 87 1-177 1-212 1-181 1 1064 1-114 1-1888 1 2247 1 476 1-838 1-31 1 150 1-1304 1 304 1 1001 1-1748 1 1482 1-320 1 514 1 54 1-730 1-544 1 453 1 294 1 144 1-831 1 1459 1-612 1 349 1-358 1 37 1 240 1 202 1-783 1-939 1 925 1 255 1 344 1-744 1 93 1-827 1 1190 1-977 1 1260 1-686 1-160 1 662 1 658 1-1017 1-87 1-467 1 63 1-357 1 1414 1-1320 1 598 1-182 1 1458 1-1273 1 205 1-26 1-1305 1 1723 1-141 1-329 1-37 1 754 1 38 1-592 1 622 1-942 1 584 1 483 1-1095 1 86 1-62 1 257 1-230 1 475 1 717 1-712 1-33 1 87 1-367 1-746 1 447 1 176 1-85 1 836 1-1542 1 944 1-599 1 123 1-1 1-358 1 894 1-497 1 588 1-76 1 1092 1-1143 1 97 1-201 1 635 1 125 1-746 1 275 1-370 1 795 1 266 1-1033 1 89 1 37 1-96 1 102 1 175 1 398 1-562 1 156 1 142 1 552 1-490 1-506 1-89 1 1092 1-1221 1 794 1-840 1 611 1 436 1-1045 1 1267 1-931 1 193 1-251 1-75 1 139 1-455 1 1433 1-1220 1-270 1 1420 1-8 1-431 1 263 1-1055 1 193 1 646 1-89 1-1137 1 1156 1 80 1-1371 1 348 1 841 1-533 1 1175 1-1342 1-1011 1 1728 1-587 1 422 1 416 1-407 1 196 1 424 1-706 1-150 1-128 1 81 1 33 1 113 1 247 1 534 1-720 1 236 1 502 1-696 1-349 1-447 1 1223 1-1095 1 1007 1-470 1-555 1 665 1 183 1 345 1-1082 1 1007 1-539 1 144 1-264 1-513 1 460 1-807 1 161 1 976 1 583 1-501 1 28 1-885 1 729 1-314 1 1087 1-1066 1-544 1 787 1 490 1-338 1-195 1 43 1 22 1-143 1 586 1-292 1 57 1-6 1 768 1-971 1-142 1 860 1-1452 1 941 1-56 1-319 1 234 1-464 1-54 1 1670 1-1109 1-484 1 178 1-134 1 319 1 255 1 473 1-1538 1 722 1 51 1-57 1 192 1-108 1-521 1 364 1 871 1-604 1 183 1-213 1 82 1-805 1 1352 1-935 1 48 1 565 1 492 1-772 1 798 1-1432 1 302 1 1550 1-1266 1 276 1 209 1 34 1-1258 1 1271 1-75 1-931 1 594 1 807 1-2320 1 1270 1 640 1-1870 1 1165 1 81 1 321 1-574 1 165 1 92 1-537 1 711 1 388 1 150 1-981 1 206 1 422 1-797 1 223 1 664 1 417 1-446 1 302 1-505 1-223 1-108 1 1400 1-856 1-469 1-58 1 151 1 330 1-250 1-504 1 675 1 210 1-688 1-78 1 967 1-237 1 388 1-648 1-262 1 314 1 360 1 23 1-527 1-434 1 349 1 64 1-674 1 826 1 20 1 351 1-1183 1 158 1 556 1-161 1 689 1-185 1-446 1-247 1 1573 1-1983 1 361 1 967 1-721 1 379 1 108 1-64 1 7 1-337 1-47 1-406 1 593 1 306 1-485 1-169 1 201 1-591 1 791 1 516 1-966 1-33 1 342 1-44 1 580 1-454 1-185 1 187 1 610 1-747 1 496 1-605 1 90 1-251 1 776 1-540 1-91 1 86 1-477 1 1094 1-929 1-104 1 496 1 522 1-467 1-62 1-53 1-469 1 233 1 1072 1-1256 1 1399 1-532 1 516 1-1071 1 455 1-801 1 911 1-443 1-692 1 914 1-764 1 446 1 111 1 730 1-683 1-889 1 906 1-260 1-482 1 1035 1-366 1-11 1 358 1-585 1-374 1 372 1 293 1-106 1 933 1-1054 1 723 1-1019 1 926 1-895 1 784 1-27 1 573 1-1003 1 16 1-361 1 945 1 404 1-1254 1 1762 1-771 1-988 1 522 1 605 1-541 1-814 1 759 1 109 1-762 1 871 1-386 1-568 1 1481 1-456 1-755 1 417 1-947 1 958 1-102 1 767 1-166 1-1313 1 1131 1-483 1 273 1-1344 1 2028 1-1116 1 287 1 529 1-375 1-473 1-1139 1 767 1 351 1 202 1 831 1-17 1-978 1 1038 1-1356 1 294 1-457 1 552 1 620 1-1071 1 1128 1-532 1 110 1 318 1-344 1-108 1 476 1-1199 1 1017 1-52 1-458 1 417 1-114 1-123 1 970 1-1823 1 1473 1 357 1-1056 1-25 1 104 1 543 1 34 1-490 1 68 1-559 1 538 1-305 1 310 1 886 1-451 1-1220 1 614 1-511 1 640 1 12 1 237 1-836 1-227 1 1243 1-599 1 516 1-447 1 824 1-47 1-988 1 168 1 158 1-787 1 1117 1-290 1-720 1 641 1 280 1-776 1 577 1 110 1 448 1 150 1 73 1-328 1-342 1-333 1 909 1-848 1-592 1-30 1 1006 1-1658 1 970 1-154 1-338 1 1396 1-300 1-231 1-167 1 741 1-1026 1 759 1-466 1-183 1 680 1-1060 1 1158 1 652 1-1652 1 623 1 789 1-655 1-353 1 254 1-419 1 817 1-478 1 244 1-35 1-352 1-378 1 665 1 94 1-572 1 247 1 1278 1-1067 1 196 1 257 1-184 1 39 1-1345 1 1286 1-80 1 788 1-859 1-516 1 721 1-584 1 124 1 163 1-1469 1 1850 1-554 1 816 1-1134 1 812 1-50 1-672 1 721 1-788 1 1388 1-1364 1 814 1 665 1-1591 1-351 1 667 1-658 1 405 1 847 1-1236 1 893 1-627 1 366 1 595 1-210 1 384 1-830 1 950 1-1709 1 956 1 869 1-913 1 684 1-1281 1 482 1 765 1-1234 1 185 1 248 1 859 1-96 1-1735 1 2120 1-1058 1 53 1 750 1 119 1 104 1-1395 1 1030 1-971 1 159 1 293 1 211 1 85 1-382 1 412 1 386 1-518 1-1089 1 203 1 990 1 577 1-230 1-165 1-569 1 149 1-566 1-366 1 961 1-610 1 323 1 629 1-161 1 225 1 515 1-1455 1-82 1 220 1 446 1-221 1-111 1 113 1 294 1-168 1-29 1-478 1-86 1 1139 1-1929 1 1056 1 635 1 433 1-1006 1-331 1 968 1-229 1-1072 1 377 1 127 1 45 1-738 1 1308 1-420 1 437 1 314 1 232 1-484 1 89 1-95 1-616 1 558 1 200 1-231 1 88 1-167 1-764 1 855 1-284 1 158 1 214 1-502 1-40 1 223 1-408 1 343 1-452 1 788 1-672 1 114 1 384 1 176 1 106 1 147 1-248 1-27 1-72 1-1212 1 1122 1 412 1-1204 1 205 1 829 1-718 1 218 1-305 1 692 1-310 1 181 1 202 1-293 1-736 1 870 1 188 1 4 1-642 1 395 1 564 1-11 1-426 1-583 1-339 1 180 1 597 1-272 1-337 1 791 1 1405 1-2474 1 217 1 335 1-408 1 259 1 725 1 306 1-497 1 385 1-270 1-637 1 1085 1-621 1-1098 1 1015 1 726 1-839 1 260 1-672 1 801 1-1032 1 183 1-383 1 734 1-566 1 1863 1-393 1-779 1 177 1 248 1-469 1-2 1-125 1 1170 1-1280 1 137 1 462 1 222 1-707 1 395 1 45 1-567 1-372 1 862 1 247 1-307 1 249 1 521 1-1101 1 197 1 694 1-323 1-81 1 381 1-1006 1 330 1 779 1 312 1-1899 1 2115 1-1626 1 217 1-99 1 876 1-425 1 54 1-1036 1 741 1 892 1-1019 1-251 1-55 1 703 1-209 1 412 1-297 1-323 1-71 1 1170 1-925 1-176 1 67 1 1532 1-1182 1-732 1-311 1 840 1-33 1 693 1-427 1-138 1-1082 1 2252 1-1848 1 41 1-48 1 1146 1-583 1 162 1-318 1 437 1 151 1 5 1 226 1-1227 1 1145 1-83 1-922 1 649 1-42 1-589 1 500 1-283 1 331 1 1091 1-736 1-554 1 384 1-786 1 820 1-106 1 149 1-90 1-1212 1 1392 1 560 1-475 1 469 1-883 1-21 1 201 1 155 1-116 1 869 1-1038 1 240 1-1178 1 905 1-153 1 537 1-384 1-596 1 1053 1-633 1 90 1-415 1 579 1-183 1 123 1-988 1 248 1 602 1-373 1 815 1-447 1-24 1-90 1-675 1 902 1 77 1-517 1 103 1-573 1-925 1 1246 1 501 1 79 1-903 1 1223 1-331 1-353 1 1 1 457 1-1114 1 183 1-77 1 916 1 260 1-721 1 371 1 24 1 27 1-729 1 937 1-1941 1 2729 1-923 1-102 1 237 1-295 1 141 1 614 1-938 1-882 1 1746 1-306 1 190 1-616 1 728 1-705 1-55 1-178 1-333 1 985 1 94 1-791 1-221 1 690 1 803 1-1438 1 10 1 1612 1-1485 1 535 1 732 1-1541 1 354 1-866 1 941 1 213 1-602 1-528 1 553 1 550 1-167 1 217 1 441 1-331 1-317 1 363 1-632 1 758 1-531 1 830 1 271 1-1398 1 387 1 315 1-594 1-954 1 1089 1-413 1 821 1-281 1 110 1-1186 1 631 1 1042 1 301 1-2134 1 947 1 280 1 292 1-197 1 374 1-202 1 441 1-586 1 214 1-803 1 380 1 1053 1-598 1-818 1 589 1 210 1-630 1 174 1 713 1-812 1 287 1 637 1-321 1-426 1 563 1-370 1-285 1 423 1 311 1-53 1-210 1 507 1-1656 1 1099 1-221 1 18 1-594 1 1528 1-1230 1 470 1 150 1 624 1-1271 1-8 1 214 1 305 1 505 1-305 1-814 1 391 1-509 1 449 1-404 1-164 1 39 1 1228 1-971 1 374 1-921 1 748 1-470 1 897 1-580 1 525 1 132 1-508 1 111 1-250 1 1167 1-145 1-1563 1 1173 1-283 1-400 1-187 1-53 1 1058 1-864 1 266 1 407 1-252 1-356 1-88 1 569 1-625 1 1238 1-676 1 1018 1-1933 1 558 1 607 1-98 1-112 1-58 1 846 1-510 1-764 1 131 1 720 1-689 1-429 1 1185 1 382 1-24 1-1418 1 573 1 172 1 320 1-1171 1 632 1-328 1 396 1 767 1-1535 1 940 1-648 1 190 1 488 1-972 1 161 1 209 1-538 1 1021 1-546 1 542 1-57 1-517 1 1216 1-1064 1 790 1-949 1 1275 1-545 1-875 1 510 1-324 1 619 1-1015 1 772 1-687 1 1020 1 146 1-852 1 789 1-510 1-835 1 1120 1 370 1-929 1 976 1-489 1 178 1-129 1 131 1 1112 1-1544 1-337 1 8 1 377 1-107 1 972 1-171 1-1327 1 1096 1 490 1-666 1 173 1-441 1-119 1 974 1-776 1-408 1 279 1 476 1-747 1 337 1 821 1 20 1-926 1 886 1-95 1-793 1 258 1 427 1-406 1 331 1-908 1 639 1-1192 1 246 1 252 1 299 1 119 1 436 1-1077 1-572 1 1416 1-89 1 1736 1-1584 1 383 1-1678 1 1744 1-667 1-452 1 195 1 939 1-778 1-92 1 231 1 59 1 1149 1-1273 1 528 1-776 1 1052 1 109 1-869 1 201 1 617 1-473 1 88 1-374 1 13 1 776 1-1085 1-246 1 1529 1-626 1-855 1 1316 1-167 1 208 1-1527 1 328 1 1014 1-984 1-50 1-15 1-70 1-39 1 738 1-799 1 889 1-1447 1 1452 1-561 1-667 1 1016 1-204 1 10 1 183 1-516 1-311 1 1060 1-1117 1 1304 1-358 1 934 1-191 1-1268 1 995 1-242 1 643 1-1468 1 886 1 104 1-1561 1 893 1-1 1 626 1-1542 1 1162 1-575 1 82 1 948 1-588 1-280 1-189 1 166 1 605 1-549 1-281 1 1215 1-815 1-84 1-301 1 500 1-161 1 1571 1-841 1 464 1-1111 1-615 1 261 1 671 1-1091 1 658 1-166 1 395 1-341 1 516 1-516 1 3 1 651 1-1041 1 443 1 750 1 525 1-854 1-639 1 733 1-863 1 421 1 147 1-248 1 11 1 296 1-182 1-109 1 300 1-1276 1 788 1-158 1-15 1 98 1 529 1 521 1-322 1-1158 1 625 1 1037 1-759 1-316 1 742 1-251 1-140 1-1024 1 955 1 58 1 717 1-1318 1 30 1 338 1 231 1-382 1 275 1-171 1-330 1 558 1 217 1-426 1 757 1 25 1-1209 1 1453 1 89 1-427 1-232 1 158 1-723 1 470 1 1228 1-709 1-665 1 1455 1-1767 1 60 1 431 1-72 1 930 1-1016 1-166 1 966 1-896 1-497 1-306 1 667 1 246 1-82 1 520 1-445 1-198 1 754 1-208 1-404 1 436 1-1013 1 1314 1-630 1-118 1-257 1 754 1 124 1-432 1 69 1 32 1-631 1 845 1-915 1 358 1-503 1 400 1-96 1 294 1 6 1 968 1-1652 1-106 1 1051 1-714 1 669 1-609 1 905 1-468 1-259 1 411 1-584 1 952 1-232 1-872 1 1033 1-234 1 674 1-435 1-256 1-995 1 955 1-577 1 295 1 325 1 172 1-1178 1 1013 1 181 1 494 1-852 1-42 1-129 1 748 1 140 1 180 1-630 1 130 1-138 1-543 1 654 1-683 1 1474 1-1650 1 555 1 235 1-224 1 71 1-438 1 406 1-989 1 1752 1-568 1-154 1-457 1 1199 1-572 1-1301 1 971 1-868 1 1465 1-652 1-175 1 538 1-113 1 160 1-565 1-234 1-270 1 462 1 155 1 733 1-2142 1 320 1 2156 1-1409 1 268 1 261 1 181 1-671 1-114 1-254 1 1081 1-214 1-638 1 312 1 217 1-38 1-407 1 783 1 257 1-1215 1 311 1 748 1-397 1-241 1-498 1 400 1 141 1 572 1-471 1 666 1-858 1-893 1 1508 1-914 1-424 1 1861 1-1305 1 625 1-382 1 330 1-197 1-293 1 383 1-254 1-23 1 22 1 257 1 111 1 102 1-1175 1 1624 1-1728 1 635 1-278 1 694 1-725 1 665 1 438 1-365 1 387 1-1648 1 824 1 250 1 70 1-895 1 205 1 396 1 399 1-166 1-559 1 1037 1-499 1 28 1 432 1-834 1 544 1 264 1 152 1-522 1 727 1-334 1-257 1 233 1-217 1-225 1 1208 1-1282 1 486 1-141 1-386 1 17 1 604 1 228 1-443 1 1064 1-1405 1 871 1-557 1 204 1-910 1-25 1 1040 1-918 1 679 1 127 1-392 1 535 1-360 1 673 1-401 1-581 1 697 1-1161 1 352 1 811 1-630 1 408 1-746 1-102 1 1008 1 453 1-1634 1 1061 1 17 1-399 1 877 1-1466 1 809 1 337 1-1758 1-14 1 1087 1-56 1-197 1 925 1 1173 1-2100 1 679 1-168 1-247 1-183 1-383 1 785 1 484 1-697 1-133 1 67 1-356 1 225 1-6 1 230 1 726 1-1776 1 1794 1 197 1-761 1-1021 1 768 1-299 1 2291 1-1769 1 205 1-260 1-283 1-290 1 123 1 215 1-418 1 1162 1-5 1-218 1-56 1 227 1-426 1-365 1-75 1 528 1 94 1-15 1 66 1-360 1 908 1-454 1-67 1-1750 1 1692 1 441 1-689 1 633 1-1195 1-1203 1 1714 1 483 1-728 1-5 1-76 1 191 1-708 1 556 1 235 1-261 1 1150 1-394 1-947 1 809 1 87 1-602 1-627 1 901 1 392 1-189 1-70 1-630 1 1150 1-814 1-236 1 528 1 274 1-257 1-1570 1 1226 1-279 1 1293 1-605 1 393 1-683 1 414 1-588 1 418 1-669 1 512 1 99 1 37 1 250 1-363 1-424 1 983 1-831 1 138 1 425 1-23 1-1389 1 433 1 934 1-99 1 800 1-1203 1 929 1-753 1-39 1 1145 1-1533 1 20 1 242 1 2 1 369 1-515 1 291 1 150 1 302 1-102 1-180 1-666 1 266 1 969 1-1202 1-27 1 556 1-395 1 983 1-38 1 47 1-919 1 208 1 1312 1-1072 1 815 1-1056 1 269 1-493 1 475 1-40 1-603 1-464 1 910 1-660 1-343 1 706 1 957 1-970 1 675 1-211 1-615 1 405 1 447 1 582 1-1297 1 499 1-175 1 771 1-44 1-916 1 525 1-355 1-117 1-477 1-33 1 1262 1 352 1-768 1-312 1 652 1-1023 1 585 1-81 1 95 1-36 1-16 1-122 1 316 1-80 1-441 1 244 1-160 1 112 1 373 1-511 1 651 1-808 1 1578 1-1596 1 901 1-930 1 668 1-88 1 198 1 252 1-1609 1 783 1 767 1 397 1-1113 1 431 1-376 1-67 1-768 1 645 1 1158 1-1359 1 850 1-69 1-1704 1 1504 1 433 1 271 1-346 1 129 1-1188 1 754 1-719 1-152 1 1563 1-66 1 47 1-237 1-945 1 874 1-92 1-272 1-229 1 650 1-760 1 1327 1-2142 1 296 1 543 1-428 1 432 1 303 1 332 1-946 1 1580 1-1424 1 428 1-1464 1 1787 1-1048 1 22 1 1344 1-831 1 873 1-320 1-600 1 818 1-609 1 283 1 389 1-1189 1 880 1-255 1-448 1 1517 1 152 1-1669 1-44 1 34 1 604 1-604 1 855 1-1296 1 1069 1-722 1 1188 1-1321 1 290 1 982 1-1011 1 1965 1-1208 1-815 1 342 1 38 1 747 1-210 1-289 1-1007 1 193 1 529 1 113 1-480 1 377 1-261 1-424 1 648 1 175 1-135 1-294 1-169 1 363 1 33 1 234 1-66 1 284 1-1153 1 111 1 975 1 172 1-1137 1-311 1 1163 1-235 1-418 1-61 1-795 1 1165 1 434 1-1190 1 628 1 439 1 75 1-103 1-330 1-48 1 462 1-154 1 493 1-1148 1-86 1 819 1 538 1-882 1 738 1-817 1 249 1 328 1-57 1-418 1 464 1 438 1-929 1-502 1 560 1 127 1-303 1-357 1 1248 1-221 1-74 1-392 1 349 1-137 1 177 1 196 1-433 1 31 1-705 1 311 1 170 1 970 1-909 1 886 1 4 1 429 1-927 1-362 1-144 1-42 1-615 1 599 1 70 1 192 1 398 1-1096 1 508 1 254 1 112 1 963 1-1369 1 198 1 901 1-1698 1 725 1 708 1-510 1 157 1 561 1-1268 1 855 1-718 1 344 1 894 1-503 1-106 1-904 1-265 1 909 1-461 1-269 1 79 1 601 1 402 1-261 1-163 1 232 1-1082 1 1495 1-863 1 300 1 700 1-1290 1 944 1-805 1 687 1-1271 1 176 1 1388 1-104 1-924 1 168 1 290 1-201 1 26 1 160 1 448 1-955 1 506 1 478 1-483 1-652 1 679 1 823 1-774 1 347 1-557 1 316 1-226 1-20 1 304 1 385 1-1630 1 1002 1-746 1 2010 1-1806 1 1454 1-1678 1 487 1-232 1 21 1 314 1 371 1 122 1 369 1-440 1-558 1 350 1-159 1 96 1 177 1-650 1 1115 1 120 1-1534 1 401 1 776 1-1385 1 1270 1-854 1 625 1-158 1-266 1 52 1-178 1 861 1 117 1-415 1-193 1-575 1 619 1 384 1-1063 1 897 1-49 1 137 1 857 1-281 1-1289 1 298 1-236 1-19 1 879 1 259 1-558 1 43 1-253 1-167 1 132 1 176 1-164 1 170 1 251 1-653 1 540 1-338 1 744 1-669 1 730 1-1770 1 1344 1 203 1 506 1-384 1-1364 1-157 1 944 1-102 1 375 1-549 1 891 1-554 1 101 1 390 1-211 1-877 1 456 1-470 1 448 1 206 1-556 1 1589 1-1300 1 283 1 316 1-1037 1 293 1 548 1-46 1 1 1-334 1 401 1-240 1-593 1 407 1-220 1 729 1-95 1 111 1-310 1-94 1 881 1-2297 1 300 1 2024 1-1416 1 749 1 167 1-4 1 319 1-425 1 114 1 287 1-350 1-255 1 736 1-928 1 317 1 31 1 72 1 600 1-1229 1 53 1 697 1 179 1-77 1-470 1-226 1 212 1-205 1 298 1-226 1-732 1 782 1 778 1-617 1-677 1 1277 1-817 1-540 1 442 1-332 1-397 1 711 1 586 1 314 1-1509 1 913 1-240 1-532 1 1142 1-468 1 373 1-674 1-470 1 1337 1 39 1-1430 1 721 1-173 1-553 1 658 1 314 1-408 1 543 1-514 1 460 1-410 1 690 1-92 1-217 1-413 1-589 1 646 1 526 1 376 1-419 1 413 1-1159 1 1062 1-437 1-577 1 665 1-464 1-941 1 1548 1-665 1-12 1 370 1 311 1-759 1 593 1-264 1-1005 1 1600 1 43 1-1441 1 1211 1 742 1-1638 1 857 1-104 1-356 1 142 1 520 1-295 1-811 1 306 1 1316 1-1015 1 849 1-243 1-325 1-1094 1 488 1 911 1-1173 1 575 1-677 1 653 1 599 1-754 1-780 1 1039 1-364 1 356 1 544 1-825 1 59 1 497 1-420 1 377 1-837 1 430 1 751 1-1405 1 1655 1-420 1-599 1 269 1-504 1 616 1-768 1-109 1 350 1-77 1 889 1-1813 1 1322 1 212 1 398 1-736 1 78 1 601 1-113 1-703 1 792 1 414 1-797 1-475 1-296 1 366 1 1008 1-596 1 183 1-590 1 996 1-719 1-692 1 368 1 238 1-339 1 248 1-306 1 135 1 186 1 72 1 348 1-736 1 241 1 355 1-710 1 169 1 1036 1-432 1 322 1-515 1 684 1-420 1-578 1 342 1-98 1-662 1-177 1 464 1 64 1 473 1-157 1-658 1 1782 1-756 1-219 1-653 1 914 1-1083 1-165 1 790 1 578 1 178 1-837 1-775 1 1374 1-1208 1 159 1 1329 1-239 1-865 1-128 1-462 1 1268 1-306 1-318 1-687 1 483 1-61 1 1032 1-722 1 460 1 430 1-783 1-1660 1 971 1 936 1-566 1-636 1 701 1-858 1 458 1 2154 1-1697 1 265 1 514 1-76 1-490 1-21 1 4 1-757 1 776 1-4 1-4 1 314 1-251 1-1568 1 2916 1-1238 1-411 1 510 1-702 1 484 1-335 1-193 1 991 1-572 1 270 1-312 1 284 1-309 1 554 1-118 1-351 1 186 1-60 1 619 1-85 1-876 1 790 1-516 1 727 1-451 1-312 1 813 1 105 1-452 1 176 1 468 1-438 1-387 1-163 1 145 1-244 1 334 1-664 1 458 1-476 1 220 1 236 1-494 1 1164 1 241 1-874 1 836 1-691 1 993 1-980 1 615 1-1770 1 1062 1 79 1-826 1 665 1-450 1 1311 1-969 1 21 1 1002 1 361 1-1566 1 931 1-488 1-824 1 1228 1-370 1 45 1 404 1-919 1 1072 1-920 1-54 1 653 1-1018 1 127 1 329 1 450 1-683 1 357 1 525 1-649 1 506 1-318 1 1 1-291 1 35 1 218 1-254 1-539 1 1615 1 12 1-15 1-598 1-433 1 575 1-605 1-252 1 887 1-125 1-612 1 129 1 72 1-710 1 1559 1-1193 1 856 1 63 1-220 1-128 1-420 1 32 1 560 1-1074 1 1530 1-1628 1 545 1 88 1-321 1-67 1 220 1 1141 1-250 1-595 1 82 1-5 1 757 1-638 1-868 1 692 1-547 1 1088 1-1110 1-182 1 958 1-707 1 571 1-270 1 167 1 282 1 45 1-220 1 287 1 279 1 117 1-751 1-284 1 61 1-466 1 1551 1-765 1-359 1 734 1-1099 1 1047 1-1447 1 1453 1 341 1-615 1-649 1 1082 1-664 1 690 1 379 1-761 1-605 1 425 1 197 1 817 1-976 1-321 1-706 1 980 1-158 1 601 1 75 1-1129 1 247 1 450 1 42 1-71 1 442 1-264 1-697 1 1559 1-1643 1-25 1 486 1-650 1 1649 1-289 1-61 1-194 1 163 1 351 1-454 1 146 1 253 1-990 1-532 1 628 1 49 1-53 1-731 1 605 1 9 1 252 1 572 1-1240 1-2 1 512 1 85 1-615 1 185 1 672 1-17 1-616 1-70 1 922 1-1552 1 1779 1-216 1-275 1-518 1 482 1 267 1-830 1 529 1-195 1-92 1 703 1 2 1-464 1 196 1-18 1-375 1 389 1 328 1-1201 1 953 1-356 1 750 1-973 1 812 1-549 1-514 1 596 1 94 1-938 1 439 1-235 1 1148 1-498 1-22 1-1011 1 458 1 855 1-651 1 362 1-160 1 504 1-798 1 115 1 380 1-66 1-955 1 1012 1-944 1 1255 1 395 1-435 1 203 1-770 1 167 1 624 1-387 1 339 1-454 1-1125 1 392 1 1410 1-984 1 315 1 679 1-1130 1 1413 1-683 1-16 1-399 1 760 1-793 1 788 1-1396 1-68 1 575 1 1985 1-2981 1 2147 1-994 1-984 1 1162 1 241 1-587 1 907 1-443 1-85 1-484 1 640 1-176 1 586 1-727 1-489 1 1008 1-1076 1-376 1 492 1 124 1-712 1 445 1 616 1-350 1 49 1-241 1 1118 1 196 1-406 1 45 1-905 1-619 1 1405 1-309 1 4 1-310 1-154 1 120 1 929 1-359 1 27 1-483 1-90 1-187 1 671 1-65 1 396 1-1120 1 251 1 231 1-684 1 775 1-71 1-54 1-233 1-293 1 585 1 176 1-626 1 313 1 864 1-87 1-1019 1-307 1 413 1 365 1 13 1 182 1 343 1-163 1-403 1 470 1-1099 1 552 1 96 1 855 1-886 1 268 1-671 1 1177 1 225 1-876 1 13 1 39 1-639 1 828 1-261 1-531 1-800 1 494 1 862 1-203 1-572 1-161 1 538 1 51 1 967 1-359 1-890 1 403 1 245 1 149 1-465 1 461 1-483 1 1350 1-1857 1 861 1-316 1-113 1-837 1 1469 1-179 1 143 1-625 1 805 1-755 1-352 1-43 1 740 1-734 1 896 1 88 1-1401 1-94 1 1608 1 457 1-562 1-522 1 77 1-463 1 874 1-1127 1-281 1 1465 1-1542 1 1262 1 183 1-552 1 132 1 154 1-612 1 995 1-650 1 710 1-706 1 255 1 50 1-327 1 237 1-303 1 1438 1-371 1-950 1 10 1-463 1-25 1 1273 1-329 1 766 1-1188 1 698 1-863 1 46 1 946 1-1301 1 852 1-469 1-73 1-141 1 901 1-447 1 576 1-602 1-517 1 174 1 225 1-62 1 881 1 632 1-1780 1 1645 1-1522 1 480 1 190 1 45 1-194 1-561 1 949 1 10 1-308 1-978 1 303 1 578 1 824 1-1330 1-618 1 770 1 1443 1-1301 1-502 1 863 1-261 1-12 1 146 1-361 1-566 1 348 1-326 1 702 1-92 1 914 1-1291 1 594 1-196 1-295 1 422 1-956 1 511 1 356 1 544 1 210 1-1388 1-168 1 815 1-570 1 2078 1-1153 1-589 1-308 1 550 1 116 1-36 1-216 1 579 1-176 1 82 1-606 1 324 1 576 1 237 1-986 1 885 1-945 1-935 1 2088 1-1035 1-87 1 244 1-225 1-462 1 856 1-229 1-572 1 532 1 808 1-920 1-169 1 745 1-81 1-174 1 107 1 18 1-87 1-250 1-103 1 12 1-84 1-481 1 622 1 625 1-469 1 875 1-1379 1-556 1 1410 1-1052 1 260 1 498 1-53 1 206 1-322 1 285 1-1186 1 1400 1-986 1-126 1 1361 1-486 1-1130 1 671 1-190 1 38 1 655 1-248 1 1192 1-1660 1 73 1-8 1 68 1-86 1 1068 1 186 1-552 1 242 1-1115 1 880 1-475 1 758 1-1220 1 27 1 1785 1-1399 1 407 1-185 1 42 1 303 1-982 1 831 1 609 1-766 1-104 1 1019 1-830 1-68 1-135 1-159 1 551 1-678 1 235 1 713 1-431 1-361 1 410 1-318 1 830 1-118 1-1167 1 412 1 301 1-212 1-320 1 102 1 169 1 409 1 705 1-922 1 65 1-921 1 602 1-447 1 924 1-512 1 74 1 546 1-122 1 94 1-984 1 309 1 937 1 89 1-938 1 453 1-250 1-632 1 107 1 124 1 669 1-328 1-345 1 414 1 414 1 173 1-764 1 609 1-290 1 222 1-798 1-134 1-461 1 1694 1-939 1-74 1 1094 1-1420 1-368 1 395 1 802 1 541 1-727 1-629 1 387 1 302 1-850 1 404 1-158 1 994 1-938 1 672 1-339 1 312 1-285 1 292 1-269 1 1377 1-555 1-1677 1 1301 1-28 1-224 1 1038 1-1288 1 545 1-530 1-1024 1 1414 1 262 1-1201 1 988 1-856 1 238 1-5 1 329 1 603 1 285 1-750 1 650 1-518 1 339 1-309 1-145 1-357 1 471 1-372 1-307 1 654 1-727 1 110 1 1272 1-794 1-898 1 290 1 949 1-1446 1 1361 1 197 1-1131 1 1102 1-277 1-55 1-641 1 373 1-241 1 382 1 886 1-1114 1 470 1-342 1 263 1-643 1 543 1 780 1-416 1-87 1 96 1-1741 1 1792 1-213 1 140 1 400 1-1021 1 409 1-891 1-94 1 1093 1 797 1-836 1-661 1 586 1 25 1-330 1 120 1 387 1-744 1 842 1-1161 1-303 1 258 1 1171 1 67 1-911 1 275 1 631 1-503 1 162 1-152 1-218 1 417 1 190 1 685 1-1830 1 1230 1-1440 1 940 1-209 1 372 1-205 1-370 1 1553 1-1986 1 342 1 1229 1-1319 1 1035 1-382 1-122 1 531 1-210 1 38 1 85 1 539 1-1772 1 397 1 754 1 83 1-1084 1 241 1 664 1-71 1-401 1-18 1 223 1-129 1 314 1 466 1-829 1-151 1 316 1 314 1 44 1-27 1-682 1 506 1-819 1 794 1 485 1-862 1 333 1 646 1-944 1-31 1-378 1 418 1 543 1-517 1 553 1-826 1-274 1 774 1 958 1-940 1-156 1-1 1 581 1-1059 1-2 1 1710 1-1134 1-385 1-94 1 323 1-317 1 916 1 16 1-148 1-576 1-327 1 662 1 42 1-164 1 457 1-524 1 26 1-235 1 610 1-675 1 492 1 152 1 262 1-857 1 437 1-40 1-46 1 860 1-828 1 56 1-630 1 203 1 71 1-829 1 1295 1 182 1-319 1 260 1 98 1-1544 1 235 1 954 1 106 1 539 1-757 1 368 1 302 1-531 1 14 1 196 1 488 1-937 1 613 1 85 1-870 1 1138 1-360 1-654 1-35 1 231 1 887 1-481 1-520 1 669 1 160 1-297 1 194 1-572 1 443 1-297 1 177 1-864 1 112 1 633 1 621 1-1028 1-738 1 1134 1 24 1 337 1-1079 1 111 1 290 1-796 1 1699 1 502 1-1778 1 327 1-15 1 14 1 382 1 697 1-579 1-548 1-399 1 731 1-817 1 608 1 672 1-110 1 851 1-1512 1 553 1-191 1-917 1 1916 1-571 1-298 1 86 1-1010 1 137 1 323 1 330 1-180 1 400 1-900 1-100 1 134 1 1085 1-966 1 463 1-967 1 391 1 491 1 369 1-488 1 477 1-21 1-607 1 329 1 57 1 800 1-24 1-103 1 54 1-1078 1-70 1 373 1 815 1-358 1-353 1-92 1 105 1-1448 1 1182 1-363 1-501 1 1723 1 38 1-1136 1 939 1-872 1-270 1 778 1-302 1 41 1-761 1 793 1 93 1-243 1 87 1 13 1 48 1-755 1 1017 1-379 1 210 1-304 1 1121 1-1417 1 851 1-402 1-1152 1 1801 1-747 1 341 1-61 1 18 1 39 1-1042 1 1261 1-1383 1 776 1 620 1 321 1-1262 1 502 1-436 1-521 1 1334 1-219 1-7 1 550 1-634 1 634 1-287 1-46 1 20 1-377 1-499 1 353 1 1351 1-1714 1 751 1 111 1-732 1 970 1-69 1-375 1-823 1 688 1-604 1 503 1-31 1 572 1-341 1 266 1-200 1-654 1 191 1 225 1-357 1 850 1-1760 1 570 1 621 1 233 1-286 1 443 1-81 1 360 1-413 1-24 1-981 1 740 1 715 1-346 1-460 1-57 1-414 1-74 1 473 1 276 1 652 1-1039 1 357 1 225 1 56 1-602 1 32 1 752 1-1353 1 685 1 1079 1-2015 1 1175 1 269 1-50 1-677 1 774 1-163 1 871 1-1029 1 183 1-61 1-794 1 620 1 35 1 119 1 81 1-23 1-876 1 34 1 710 1-321 1-567 1 664 1 229 1-111 1 551 1-885 1 821 1 248 1-1150 1 1239 1-464 1 542 1 47 1-1283 1 1068 1-991 1 721 1-189 1-294 1-557 1 522 1 568 1-695 1-122 1-319 1 930 1 96 1 260 1-128 1-1074 1-53 1 1279 1-992 1 1526 1-1026 1 696 1-322 1-1334 1 695 1 116 1-568 1 981 1-736 1 88 1-303 1 461 1 403 1-371 1 854 1-1340 1-16 1 521 1 165 1-463 1-84 1 230 1 1065 1-1575 1 561 1 624 1-266 1 278 1-842 1 772 1-668 1 263 1-98 1-392 1 271 1-61 1 771 1-143 1 623 1-1612 1 1176 1-211 1 220 1-211 1-1055 1 1462 1-591 1 413 1-412 1-210 1-113 1 305 1-262 1 508 1-1548 1 835 1 35 1 891 1-69 1-541 1-311 1-364 1 793 1 817 1-1224 1 960 1-815 1-126 1-216 1 15 1 690 1-591 1 403 1-1008 1 1234 1-180 1-953 1 1411 1-969 1 1292 1-1271 1 1106 1-1636 1 503 1 136 1-400 1 1317 1-850 1 190 1-18 1 565 1-598 1-412 1 749 1 502 1 348 1-1755 1 1350 1-744 1-1032 1 1016 1-551 1 472 1-82 1-127 1 464 1-399 1-65 1 877 1-749 1-24 1-27 1 301 1 163 1 233 1-75 1-495 1-206 1 855 1 56 1-947 1-406 1 1047 1-458 1-566 1 1469 1-1086 1 51 1-242 1 425 1-412 1 1061 1 114 1-806 1 588 1-668 1-302 1 639 1-478 1 437 1 169 1 4 1-466 1-753 1 1402 1 161 1-403 1 756 1-1225 1-523 1 1544 1-639 1 647 1-759 1 82 1-721 1 655 1-506 1 1013 1-885 1 558 1 701 1-671 1-42 1 261 1-406 1 514 1-637 1 910 1-1427 1 706 1 222 1 1 1-262 1 339 1-255 1 215 1-704 1 493 1-569 1 985 1-727 1-1034 1 1554 1 89 1 115 1-112 1 562 1-1812 1 751 1 220 1-369 1-719 1 1571 1-663 1-200 1 408 1-1483 1 2117 1-426 1 205 1-643 1-19 1-850 1 1688 1-1221 1 273 1-206 1 673 1 10 1-623 1 920 1-153 1-800 1 623 1-867 1 819 1-271 1 806 1-937 1 1674 1-739 1-1200 1 542 1-394 1 1146 1-1010 1 35 1 460 1 145 1-615 1-175 1 182 1 265 1-268 1 200 1 835 1-1176 1 436 1 10 1-641 1 860 1-335 1 439 1 1049 1-1187 1 529 1 159 1-1312 1-471 1 1046 1-687 1 563 1 500 1-671 1-311 1-788 1 1300 1-1066 1 596 1 660 1-1103 1 649 1 407 1-259 1-467 1 749 1 315 1-803 1 219 1 412 1 110 1-1134 1 892 1 101 1 675 1-743 1-506 1 38 1 856 1-1846 1 2100 1-998 1 1340 1-1035 1-309 1-400 1-309 1 1130 1 406 1-940 1-76 1 436 1-888 1 774 1-707 1 1420 1-778 1-616 1 875 1-1250 1 888 1-1168 1 1207 1 473 1-113 1-438 1 370 1 611 1-599 1-455 1 365 1 158 1-1449 1 1149 1-542 1 780 1 90 1-940 1 477 1 472 1 711 1-884 1-994 1 191 1 273 1 372 1-44 1 10 1 848 1-429 1-405 1-636 1 99 1 419 1 292 1-55 1 1016 1-1719 1 643 1-197 1-65 1 224 1-690 1-7 1-334 1 694 1 686 1-484 1-226 1 21 1-220 1-411 1 884 1 227 1-1817 1 2029 1-264 1-440 1-604 1 747 1 693 1-1001 1 303 1 425 1 155 1-353 1 101 1 62 1-446 1 533 1-89 1-481 1 891 1-501 1-681 1 670 1-739 1 987 1 5 1 303 1-199 1-801 1 585 1 292 1-602 1 235 1-32 1-242 1-389 1 437 1-248 1 35 1-142 1 800 1 257 1-256 1-603 1-703 1 743 1 734 1-761 1 312 1 1126 1-834 1 421 1-1260 1 702 1-1345 1 1098 1-381 1 623 1-550 1 289 1-23 1-76 1 513 1-692 1-386 1 653 1 30 1-150 1 237 1 651 1-767 1 220 1-246 1-169 1-268 1 600 1 874 1-1922 1 1240 1-1665 1 1466 1-802 1 1552 1-797 1-221 1-532 1 1327 1-290 1 126 1-127 1-1029 1 482 1 278 1-155 1 550 1-1580 1 903 1 643 1-876 1 408 1-972 1 896 1-589 1-291 1 534 1 610 1-791 1 842 1 471 1-2493 1 1324 1 95 1 296 1 982 1-815 1 243 1 284 1-374 1 817 1-684 1-1323 1 1144 1 154 1-1207 1 612 1 567 1-921 1 246 1-219 1 966 1-321 1-25 1 90 1 415 1-515 1 362 1-659 1-193 1 1238 1-1470 1 1044 1 221 1-842 1 605 1-92 1-476 1 132 1 1616 1-2027 1 107 1 720 1 422 1-940 1-318 1 228 1 130 1 95 1-791 1 574 1 694 1-742 1 338 1-613 1-301 1 542 1 1538 1-725 1-353 1-721 1 1055 1-65 1-612 1-313 1 1673 1-2105 1 884 1-467 1 1032 1-924 1 240 1 563 1-472 1 241 1 341 1-729 1 409 1-711 1 708 1 13 1-430 1-289 1 8 1 75 1 415 1-58 1-1333 1 1503 1-825 1 1576 1-1264 1 1208 1-1177 1 342 1-445 1 133 1 358 1 185 1-499 1 926 1-805 1-383 1 1274 1-1367 1 30 1 746 1 278 1-971 1 384 1 264 1 126 1-605 1 239 1 401 1 45 1-1076 1 1284 1 817 1-1280 1 600 1-597 1-209 1 546 1-939 1 503 1 180 1-839 1 208 1 9 1 424 1 116 1 431 1-777 1 294 1 478 1 200 1-1135 1 748 1 808 1-1167 1-477 1 1065 1 266 1-1040 1-631 1 1569 1-616 1-611 1 134 1-461 1 1181 1 264 1-640 1 338 1 121 1-809 1 324 1 167 1-273 1-64 1 294 1-503 1 1051 1-357 1-220 1-117 1-520 1 627 1-639 1 414 1 339 1-297 1 104 1-83 1 1275 1-681 1 17 1-234 1 235 1-143 1-823 1 240 1 704 1-374 1 273 1-589 1-60 1 213 1 391 1-480 1 1023 1-1504 1 1948 1-741 1 59 1-159 1-122 1-1744 1 578 1 190 1 994 1-885 1 1117 1-679 1 239 1-32 1 284 1-55 1 146 1 769 1-1846 1 869 1 217 1-1161 1 1487 1-992 1 188 1 238 1 239 1-254 1 281 1-304 1-540 1 360 1-484 1 419 1-551 1-462 1 1128 1 278 1 338 1-149 1-1097 1 60 1 684 1-1070 1 235 1 1227 1-201 1 682 1-1609 1 99 1 1001 1-50 1-933 1 797 1-823 1 608 1 715 1 407 1-1873 1 1281 1-634 1-713 1 645 1 165 1 918 1-652 1-764 1 72 1 336 1 552 1-1076 1 1117 1-807 1-412 1 128 1 627 1-591 1 873 1-483 1 117 1 396 1-299 1 289 1-197 1 867 1-1165 1 619 1-892 1 474 1 37 1 230 1-222 1 122 1-95 1-868 1-485 1 1240 1-942 1 342 1 118 1 421 1 199 1-695 1 680 1-747 1 264 1-243 1 1690 1-882 1-619 1 242 1-473 1 676 1 196 1 801 1-1301 1 44 1 462 1-343 1 684 1-858 1 212 1-265 1 302 1-179 1 446 1-1066 1 522 1 583 1-705 1 249 1 1322 1-1325 1-816 1-110 1 666 1-66 1 932 1-201 1 914 1-929 1-981 1-122 1 1547 1-918 1 238 1 308 1 428 1-1013 1-212 1-55 1 365 1 1083 1-1857 1 1272 1-168 1-649 1 1066 1-515 1 57 1-644 1 1507 1-1173 1 210 1-508 1 1679 1-340 1-444 1-948 1 42 1 565 1-250 1 265 1-450 1 1161 1-1100 1-564 1 741 1 264 1-278 1-435 1 226 1-78 1 315 1 553 1 260 1-1167 1-34 1 164 1 784 1 320 1-917 1 561 1-919 1 1081 1-568 1-62 1 64 1 122 1-598 1 868 1-782 1 86 1-56 1 601 1 37 1-522 1-290 1 1134 1-629 1 443 1-791 1 761 1-458 1 713 1-131 1-1280 1 1802 1-488 1-685 1 357 1-409 1 333 1 65 1-1240 1 1668 1-1109 1-105 1-20 1 314 1 1414 1-410 1-429 1-352 1 122 1 366 1-672 1 305 1-558 1-236 1 1031 1-784 1-661 1 866 1 1061 1 685 1-629 1-913 1 309 1-1341 1 780 1-210 1 622 1 948 1-1279 1 388 1 211 1-1283 1 1160 1-101 1 170 1 243 1-807 1 1130 1-1096 1 158 1 254 1-210 1 698 1-761 1 251 1 936 1-179 1-323 1-158 1 215 1-1116 1 560 1 158 1-402 1 641 1-712 1 295 1-253 1 603 1-410 1-434 1 181 1-307 1-98 1 509 1 153 1-4 1 449 1-322 1 186 1-349 1-257 1 1865 1-1628 1 936 1-99 1-695 1-501 1-553 1 1285 1 254 1-1583 1 1445 1 131 1-501 1-744 1 588 1 611 1-794 1 421 1 494 1-1798 1 2098 1-1678 1 595 1-185 1 53 1 952 1-576 1 331 1-79 1-509 1 429 1 149 1-893 1 351 1 475 1 64 1-1065 1 663 1-733 1-15 1 519 1-371 1 753 1-682 1 4 1 412 1-367 1 311 1 127 1 344 1-61 1 187 1-702 1 7 1-345 1 509 1-686 1 514 1 678 1-318 1-121 1 454 1-1066 1 1372 1-988 1 254 1 755 1 126 1-1112 1-502 1 186 1-830 1 931 1 261 1-123 1-730 1 771 1 924 1-816 1 331 1-1031 1 832 1 749 1-383 1 712 1-1554 1 188 1 593 1-8 1-234 1-216 1 303 1-372 1 985 1 366 1-1264 1 368 1 315 1-1273 1 797 1-269 1 217 1 200 1 21 1-470 1 1032 1-1251 1 1000 1-974 1 1864 1-1816 1 49 1-580 1 1609 1-649 1-488 1 360 1-21 1 367 1-932 1 673 1-156 1 256 1-550 1 466 1-233 1 366 1 499 1 380 1-1930 1 261 1 1193 1-344 1-967 1 1215 1-539 1 947 1-514 1-411 1-113 1 463 1 237 1-188 1-1025 1 1293 1-1588 1 1567 1-625 1-158 1 649 1-906 1 707 1 156 1 386 1-971 1-58 1 687 1-841 1-338 1 1030 1-787 1 119 1-182 1 62 1-175 1 107 1 920 1-1134 1 888 1 414 1-1188 1 1921 1-1388 1-558 1 441 1 1091 1-74 1 7 1-505 1 149 1-660 1-550 1 248 1 321 1-567 1 645 1 705 1-457 1-176 1 62 1-238 1-937 1 387 1 1605 1-818 1-34 1 143 1 273 1-12 1-134 1-1015 1 103 1 1748 1-1137 1-147 1 637 1 372 1-1460 1 713 1-324 1 907 1-443 1 500 1-841 1 424 1-707 1 837 1-572 1 208 1-191 1 298 1-646 1 265 1-19 1 1072 1-1007 1-628 1 1664 1-1240 1 1222 1-1031 1 336 1-196 1 1015 1-319 1-1319 1 1349 1-614 1-104 1-538 1 443 1 330 1-579 1-8 1-509 1 1102 1-671 1-1128 1 1057 1-27 1 62 1 860 1-823 1-79 1 310 1-287 1 251 1-68 1 98 1-72 1 642 1-209 1 244 1-57 1-462 1 103 1-384 1-513 1 359 1 145 1-724 1 968 1 489 1-1162 1 468 1 255 1-411 1 919 1-487 1 1073 1-1291 1 1134 1-522 1-286 1-478 1 684 1-447 1 481 1-461 1 38 1 387 1-985 1 1377 1-722 1 249 1 23 1-341 1-9 1-11 1 182 1 143 1-93 1-1010 1 814 1-200 1 759 1-795 1 1489 1-1220 1 877 1-714 1-630 1-394 1 1299 1-179 1-78 1 692 1-160 1-1838 1 1227 1-65 1-78 1-55 1 284 1-907 1 527 1 323 1-269 1 523 1 626 1-33 1-96 1-466 1-549 1 123 1 441 1-783 1 449 1-684 1 330 1 379 1-121 1 640 1 619 1-1230 1 193 1 630 1-94 1-427 1-300 1-1016 1 1289 1-1145 1 1638 1-236 1-1089 1 168 1 468 1 602 1-719 1 363 1-94 1 121 1-933 1-145 1 216 1-331 1 672 1 888 1 110 1-510 1-94 1-299 1 175 1 104 1-1077 1 1730 1-497 1-1527 1 1196 1 487 1-606 1 531 1-647 1 559 1 76 1-130 1 1344 1-1564 1-431 1 187 1 563 1-849 1 807 1 387 1-481 1-138 1-617 1 1370 1-677 1-354 1 682 1-951 1 815 1-94 1 578 1-1164 1 857 1 73 1-1377 1 1429 1-251 1-829 1 114 1 904 1 148 1-701 1-23 1 437 1-437 1-25 1 701 1-17 1-674 1 581 1-381 1-397 1 583 1-63 1-312 1-32 1 219 1-238 1-92 1-283 1 506 1 781 1-695 1-290 1-160 1 302 1-96 1 104 1 149 1-105 1-360 1 328 1-364 1 672 1-1524 1 180 1 789 1 166 1 998 1-826 1-179 1-449 1 1012 1-1147 1-77 1 1024 1 114 1-286 1-117 1 46 1-1091 1 718 1 693 1-672 1 925 1 113 1 61 1-386 1-516 1-385 1 420 1-253 1 1309 1-932 1-529 1 360 1 502 1-1501 1 734 1 236 1-202 1 572 1 58 1-866 1 670 1 888 1-618 1-249 1-380 1-386 1 1274 1-610 1 158 1 263 1-730 1-174 1 526 1 374 1-995 1 905 1 287 1-439 1-662 1 120 1 8 1 1590 1-1880 1 612 1 645 1-980 1 678 1-924 1 448 1 884 1-620 1-255 1-812 1 145 1 736 1 882 1-54 1-652 1 313 1-135 1-206 1-480 1 554 1 327 1 433 1-878 1-310 1 981 1 57 1-875 1-175 1 752 1-110 1-738 1 199 1 1148 1-866 1 125 1-510 1 315 1 61 1 281 1-445 1 184 1-213 1 896 1-841 1 567 1-520 1 1049 1-1956 1 842 1-60 1-368 1 811 1-584 1 295 1-245 1 539 1 294 1-827 1 666 1 206 1-359 1-186 1 356 1-429 1 515 1-1048 1 461 1-906 1 1215 1 90 1-337 1-28 1-112 1-469 1 492 1-134 1 490 1-732 1 153 1-194 1-336 1 1675 1-1041 1-276 1 757 1 201 1 330 1-936 1 634 1-849 1 237 1 68 1-240 1 733 1 298 1-837 1 103 1 202 1-486 1-334 1 510 1 479 1-384 1-425 1 355 1 69 1 814 1-519 1-170 1 145 1-220 1 440 1-1252 1 883 1 1041 1-1858 1 851 1-1543 1 1932 1 303 1-160 1-198 1-49 1 461 1-977 1 333 1-1211 1 1353 1-481 1 535 1-343 1 379 1-390 1 402 1 356 1-153 1-1181 1 330 1 171 1 567 1-746 1 327 1-1043 1 1152 1-575 1 84 1 154 1 404 1 529 1-807 1 224 1-761 1 1108 1-561 1-248 1-10 1-137 1 558 1-987 1 1091 1-1025 1 257 1 284 1 747 1-897 1-206 1 727 1-405 1 354 1 86 1-1330 1 2375 1-1240 1-153 1-807 1 1097 1 278 1-1296 1 977 1-274 1-291 1 183 1 606 1-544 1 1193 1-1022 1-51 1 109 1 297 1 19 1 77 1-274 1 56 1 637 1-485 1-165 1 16 1 274 1 553 1-694 1-693 1-108 1-1155 1 2129 1-693 1 62 1-178 1 348 1-361 1 771 1-417 1 320 1-231 1-30 1 380 1-257 1-487 1 844 1-433 1-1371 1 1478 1-925 1 639 1 6 1 399 1-151 1 1031 1-1963 1 204 1-203 1 661 1 609 1-1169 1 244 1 203 1-547 1 425 1 597 1-109 1-206 1-311 1-90 1 127 1 1417 1-603 1-1726 1 1753 1 295 1-856 1-796 1 1469 1 272 1-1345 1 1229 1-707 1 691 1-731 1-513 1 242 1-249 1 1035 1 218 1-634 1-413 1 544 1-408 1 250 1-634 1 378 1 802 1-935 1-114 1 171 1 706 1-213 1-1064 1 165 1 752 1-1185 1 1726 1-113 1-490 1-853 1 1378 1 138 1-1336 1 1461 1-1420 1 746 1-214 1 10 1-260 1 784 1-1130 1 916 1-1148 1 407 1 1177 1-1001 1-246 1 177 1 879 1-1133 1 1870 1-1769 1 330 1-606 1 1046 1-201 1-113 1-540 1 1301 1-883 1 362 1-367 1 855 1-1471 1 190 1 1551 1-988 1-192 1 262 1-819 1 504 1-416 1 566 1 629 1-406 1 785 1-1520 1 1319 1-1325 1-334 1 1322 1-885 1 284 1 950 1-1412 1 748 1-235 1 21 1 477 1-362 1-785 1 1204 1-758 1 193 1-418 1 1371 1-375 1-213 1-153 1-248 1 957 1-1256 1 720 1 396 1-829 1 27 1-38 1 940 1 232 1-832 1 802 1-962 1 932 1-1192 1 986 1-444 1-525 1-460 1 1323 1-665 1 396 1-496 1 98 1 527 1-823 1 943 1-868 1 469 1-1181 1 1859 1-1339 1 207 1 328 1-71 1 35 1 441 1-173 1 511 1 462 1-1424 1 32 1 207 1 135 1-131 1 722 1-1320 1 377 1-248 1 1390 1-1146 1 179 1-235 1 1090 1-593 1-685 1-73 1 1300 1-822 1-19 1-468 1 1854 1-1484 1 789 1-497 1 159 1-746 1-88 1 364 1-492 1-63 1 477 1 5 1 704 1-321 1-1116 1 601 1-271 1 440 1 657 1-303 1 46 1 197 1-1091 1-232 1 1871 1-1014 1-941 1 646 1 9 1 445 1-359 1 168 1 245 1 158 1-1079 1 790 1-348 1 3 1 167 1 241 1-207 1 202 1 84 1-280 1-497 1 21 1-459 1 1295 1-371 1 1290 1-1557 1 1503 1-1061 1 11 1 512 1-1317 1 888 1 235 1-399 1-1221 1 27 1 1128 1 649 1-169 1-113 1-128 1-555 1 1251 1-658 1 336 1-52 1-295 1-242 1-213 1 421 1-667 1 1094 1 294 1-1329 1 1113 1-1044 1 215 1-779 1 331 1 669 1-850 1 734 1-315 1 800 1-826 1 506 1-356 1-291 1 450 1 371 1-736 1-726 1 1308 1-733 1 845 1 272 1-591 1 168 1 313 1-539 1-141 1 948 1-507 1-908 1 789 1 316 1 30 1-343 1 1084 1-1433 1 278 1 360 1-641 1-23 1-213 1 404 1 587 1-320 1-79 1 251 1-610 1 1007 1-1149 1 226 1 675 1-290 1-111 1 656 1-116 1-557 1-205 1 277 1 538 1-1486 1 1354 1-421 1-297 1 151 1 829 1-390 1-535 1 179 1 682 1-967 1 291 1-1020 1 749 1 478 1-378 1 381 1-752 1 505 1 15 1 645 1 183 1-906 1-509 1 551 1-43 1-736 1 863 1 239 1 246 1 113 1-250 1-653 1-103 1 161 1 324 1-465 1-185 1 1395 1-822 1-148 1 285 1 189 1-1330 1 1624 1-629 1 483 1-760 1 156 1 1061 1-844 1-771 1 912 1-91 1-602 1 508 1-364 1 511 1-55 1 737 1-860 1 694 1-1649 1 1790 1 40 1-52 1-790 1-367 1 926 1-440 1-1653 1 1018 1 414 1-373 1 478 1 510 1-259 1 112 1-703 1 500 1 227 1-251 1-399 1-570 1 1058 1-298 1-255 1 234 1 294 1-710 1 767 1 398 1-1493 1 1213 1-99 1-142 1 147 1 253 1-182 1-837 1 502 1 344 1-532 1 284 1-363 1 1035 1-883 1 116 1 115 1-826 1 545 1 146 1 457 1-606 1 43 1 985 1-1131 1-630 1 302 1 203 1 491 1 35 1-641 1 1386 1-967 1-70 1-382 1 611 1-450 1 1322 1-479 1-366 1 19 1-222 1-734 1 1289 1 484 1-737 1-872 1 1287 1-293 1-98 1-352 1 846 1-1652 1-680 1 1759 1-817 1 689 1-280 1 1051 1-893 1 358 1 777 1-411 1-460 1-711 1-13 1 675 1 31 1-705 1 476 1-157 1 135 1 82 1 489 1-362 1-230 1 146 1-190 1 599 1 323 1-390 1-89 1 396 1-343 1-220 1 112 1-475 1 532 1-208 1-694 1 867 1-326 1 304 1-529 1 1090 1-29 1-599 1 307 1-382 1-561 1-237 1 278 1 55 1-65 1-456 1 862 1 1093 1-345 1-69 1 352 1-194 1-154 1 337 1-1175 1-460 1 1523 1-1954 1 1178 1-216 1 696 1-1180 1 1245 1-1157 1 363 1-50 1-824 1 1487 1-883 1 1024 1 568 1-866 1-2 1-1370 1 514 1 929 1-668 1-30 1-211 1 122 1-255 1 433 1 753 1-769 1 161 1 76 1 569 1 299 1-1439 1 155 1 795 1-398 1-1 1-242 1 485 1-55 1-988 1 1055 1-164 1 185 1-1217 1 591 1-24 1 103 1-74 1-481 1 1351 1 477 1-1053 1 476 1-87 1-729 1 524 1 353 1-1381 1 745 1 179 1-77 1-113 1 122 1 347 1-272 1-56 1-214 1 581 1-1049 1 605 1-342 1 985 1-504 1 59 1-865 1 554 1 1310 1-1470 1 512 1-686 1 448 1-624 1 434 1 197 1-640 1 1524 1-923 1 78 1 388 1-1122 1 1053 1-162 1 206 1-605 1 562 1 604 1-1519 1 269 1 789 1 148 1-157 1-791 1 709 1-342 1 302 1 780 1-999 1-508 1 74 1 718 1 0 1-790 1 1323 1-637 1-280 1 68 1-993 1 86 1 986 1-264 1-27 1 769 1 35 1-718 1 141 1-594 1 126 1 126 1 241 1-15 1 409 1 551 1-1089 1 0 1 120 1 144 1-939 1 1085 1 179 1-804 1 206 1-96 1 140 1-382 1 314 1-207 1 126 1 846 1-1184 1-409 1 394 1 405 1 360 1-120 1 741 1-1067 1 115 1 432 1-105 1-689 1 551 1-329 1-14 1 557 1 876 1-1343 1 1076 1-1300 1-658 1 1633 1-207 1 579 1-836 1-1015 1 1669 1-704 1-360 1 529 1-587 1 887 1-357 1-131 1-171 1-948 1 1778 1-1195 1-78 1 736 1-572 1 104 1 432 1 114 1 603 1-548 1 186 1 430 1 73 1-1017 1 822 1 207 1-474 1-233 1-930 1 340 1 792 1 0 1-329 1 611 1-1526 1-130 1 1291 1-981 1 1590 1-1228 1 451 1-139 1-388 1-87 1 969 1-1932 1 1931 1-60 1-290 1 161 1 224 1-159 1-586 1-757 1 1193 1-202 1-591 1 1088 1 197 1-753 1 1283 1-1116 1 585 1-1023 1 641 1 362 1-550 1-936 1 1027 1 102 1 440 1-1050 1 598 1-574 1 162 1-669 1 662 1 1065 1-1144 1 1151 1-1016 1-241 1-423 1 1180 1-253 1-305 1-2 1 128 1 296 1-485 1-115 1 784 1 31 1-138 1-423 1 396 1-268 1 129 1-1573 1 2042 1-127 1-367 1-318 1 838 1-853 1 76 1 612 1 34 1-1036 1 1753 1-2250 1 378 1 832 1-372 1 620 1-1096 1-473 1 437 1 262 1-308 1 640 1 773 1-1045 1-4 1 31 1 296 1-560 1 705 1 68 1-754 1-75 1 635 1-405 1 58 1 260 1-716 1-522 1 1175 1 171 1-450 1-59 1 199 1 269 1 652 1-648 1-118 1-123 1 877 1-805 1 54 1 529 1-453 1 1199 1-821 1 546 1-649 1 864 1-547 1-324 1 140 1-1406 1 2008 1-998 1 119 1 140 1-434 1-792 1 1177 1 5 1 196 1-277 1 72 1-695 1 575 1-365 1-533 1 86 1 379 1-125 1 315 1-471 1 1358 1-769 1 1020 1-1643 1 370 1 626 1-573 1-959 1 1410 1-392 1 260 1 386 1-1109 1 615 1-685 1 422 1-255 1 786 1 649 1-1504 1 1216 1-1354 1 944 1 458 1-1351 1 1192 1-213 1-1214 1 951 1 112 1 723 1-1469 1 797 1-392 1 380 1 461 1-1077 1 124 1 25 1-16 1-1 1-625 1-384 1 730 1 98 1-87 1 1541 1-1203 1 709 1 35 1-1311 1 810 1-1091 1 650 1 305 1-214 1 1204 1-585 1-526 1 789 1 153 1-1479 1 919 1 35 1 183 1-716 1 57 1 506 1 612 1-402 1 78 1 400 1-1786 1 414 1 665 1-99 1 738 1-849 1-528 1 874 1-724 1 866 1-382 1-993 1 490 1 843 1-526 1 603 1-137 1-926 1 133 1 1529 1-1155 1-409 1 516 1 885 1-1305 1 932 1-466 1-381 1 772 1-1649 1 1347 1 558 1-116 1-867 1 337 1 483 1-798 1 1031 1-1614 1-308 1 1106 1 499 1-181 1-482 1 370 1 43 1-110 1 626 1-974 1 147 1-235 1 655 1-179 1-177 1-341 1 245 1 185 1-296 1 349 1-81 1-515 1 606 1-692 1 171 1 590 1 672 1 381 1-1201 1-245 1 734 1-1154 1 206 1-56 1 427 1-126 1-805 1 917 1-410 1-300 1 474 1 168 1 555 1-975 1 44 1 52 1-10 1 880 1-716 1 991 1-1401 1 520 1 71 1 214 1-929 1 207 1 873 1-254 1-222 1 959 1-85 1-662 1-315 1 15 1 929 1-420 1 28 1-1194 1 1350 1-348 1 208 1-342 1 117 1 188 1 397 1-117 1 375 1-1009 1-62 1-383 1 1677 1-803 1 663 1-345 1-42 1-108 1-492 1 301 1-301 1 114 1 504 1 457 1-640 1-760 1-432 1-305 1 696 1 123 1 332 1-597 1 970 1-504 1-56 1-18 1-279 1 380 1-637 1 1255 1-731 1 268 1 202 1-755 1 1527 1-974 1-344 1-1068 1 1944 1-834 1 142 1 215 1-559 1 1002 1-300 1-594 1 95 1 748 1-488 1 397 1-714 1 574 1-864 1 554 1 137 1-743 1-295 1 644 1 162 1-196 1 246 1-32 1-572 1 553 1-457 1 367 1-257 1 1396 1-578 1 315 1-934 1-124 1 240 1 333 1-1001 1 1359 1 709 1-1219 1-437 1 1020 1-82 1-663 1 157 1-234 1-26 1 655 1-477 1 419 1-668 1-225 1 836 1-717 1 317 1 1045 1-2187 1 1673 1-72 1-512 1 802 1-290 1-930 1 401 1-207 1 255 1-481 1 280 1 210 1 593 1-802 1 904 1-1697 1 1407 1-204 1-107 1 342 1-1171 1 1960 1-1296 1 589 1-52 1-72 1-151 1 43 1-344 1 503 1-162 1-116 1-436 1 660 1-468 1-719 1-86 1 1409 1-158 1-414 1 464 1-12 1-305 1 190 1 486 1-1091 1 363 1-257 1 1088 1-785 1-124 1-110 1 591 1-361 1-185 1 243 1 213 1-612 1 56 1-29 1 1031 1-881 1 401 1-199 1 382 1 415 1-357 1 608 1-1367 1-291 1 186 1 626 1 471 1 13 1-745 1 572 1 115 1-404 1-156 1-192 1-217 1 618 1 84 1-59 1 13 1-1400 1 1115 1 377 1-108 1-81 1 194 1-718 1 32 1 230 1 302 1-13 1-426 1-20 1 928 1-281 1-758 1 639 1 964 1-894 1-544 1-1527 1 1826 1-531 1 574 1-252 1-69 1-31 1 75 1-590 1 613 1 207 1-1383 1 512 1 857 1 295 1 408 1 125 1-640 1-218 1 1145 1-1301 1-411 1 565 1 254 1-912 1 489 1-182 1-69 1-568 1 514 1 578 1-939 1 241 1 113 1 907 1-279 1-1545 1 1669 1-512 1 434 1-362 1-678 1 400 1 182 1 1035 1-1046 1 225 1-430 1 303 1-117 1-477 1-241 1 1010 1-102 1 74 1 525 1-725 1-724 1 318 1 815 1-712 1 365 1 179 1-515 1 878 1-584 1-205 1-643 1 1902 1-385 1-148 1-373 1 5 1 253 1-743 1 988 1-631 1 455 1-424 1-303 1 838 1-645 1-520 1 971 1-925 1-550 1 1298 1-367 1 627 1-1200 1 646 1 544 1-666 1 760 1 118 1-629 1-94 1 43 1-261 1 55 1-316 1 64 1 188 1 42 1-168 1 55 1 438 1 37 1 549 1-88 1-1114 1 198 1 84 1 352 1 269 1-458 1-95 1-422 1 1624 1-63 1-582 1-757 1 638 1 79 1 135 1 108 1-1736 1 2050 1 54 1-305 1-926 1 479 1-149 1-476 1-102 1 210 1 982 1 18 1-781 1 1174 1-1342 1 220 1-729 1 1112 1 11 1-347 1 165 1 396 1-161 1-572 1-384 1 297 1 13 1 523 1-562 1 244 1-369 1 241 1 771 1-375 1-257 1 433 1-459 1-72 1 560 1-1213 1 761 1 582 1-655 1 344 1-168 1 825 1-1795 1 2080 1-2050 1 1268 1-162 1-147 1-176 1-304 1 996 1-1078 1-298 1 841 1-460 1 854 1-226 1 605 1-1533 1 552 1-111 1 70 1-519 1 62 1 952 1 371 1-704 1-376 1-55 1 637 1-638 1 1427 1-756 1 693 1-1452 1 852 1-52 1-53 1-127 1-768 1-102 1 1840 1-1602 1 23 1 43 1 772 1-130 1 111 1 201 1-654 1 687 1-873 1 475 1 423" stroke="#1CA71C" stroke-width="13.23" fill="none"/></g><text x="465.2" y="743.8" text-anchor="end" class="tk">−8</text><text x="465.2" y="690.9" text-anchor="end" class="tk">−6</text><text x="465.2" y="637.9" text-anchor="end" class="tk">−4</text><text x="465.2" y="585.0" text-anchor="end" class="tk">−2</text><text x="465.2" y="532.1" text-anchor="end" class="tk">0</text><text x="465.2" y="479.2" text-anchor="end" class="tk">2</text><text x="465.2" y="426.3" text-anchor="end" class="tk">4</text><text x="465.2" y="373.3" text-anchor="end" class="tk">6</text><text x="465.2" y="320.4" text-anchor="end" class="tk">8</text><text x="465.6" y="800" text-anchor="middle" class="tk">1000</text><text x="571.5" y="800" text-anchor="middle" class="tk">2000</text><text x="677.3" y="800" text-anchor="middle" class="tk">3000</text><text x="783.1" y="800" text-anchor="middle" class="tk">4000</text><text x="889.0" y="800" text-anchor="middle" class="tk">5000</text><text x="994.8" y="800" text-anchor="middle" class="tk">6000</text><text x="1100.6" y="800" text-anchor="middle" class="tk">7000</text><text x="1206.5" y="800" text-anchor="middle" class="tk">8000</text><text x="1312.3" y="800" text-anchor="middle" class="tk">9000</text><text x="942" y="824" text-anchor="middle" class="tt">Time</text><text transform="translate(427.1 527.2) rotate(-90)" text-anchor="middle" class="tt">Timeseries</text><rect x="466.7" y="239.3" width="26.6" height="16.5" rx="3" fill="#eeeeee"/><text x="480.9" y="251" text-anchor="middle" class="rb">1W</text><rect x="498.5" y="239.3" width="26.8" height="16.5" rx="3" fill="#eeeeee"/><text x="512.8" y="251" text-anchor="middle" class="rb">1M</text><rect x="530.2" y="239.3" width="27" height="16.5" rx="3" fill="#eeeeee"/><text x="544.6" y="251" text-anchor="middle" class="rb">6M</text><rect x="562.4" y="239.3" width="26.6" height="16.5" rx="3" fill="#eeeeee"/><text x="576.5" y="251" text-anchor="middle" class="rb">1Y</text><rect x="594.1" y="239.3" width="27.3" height="16.5" rx="3" fill="#d4d4d4"/><text x="608.6" y="251" text-anchor="middle" class="rb">ALL</text><g opacity="1"><path d="M1441.6 279.7H1469" stroke="#2E91E5" stroke-width="2"/><text x="1473.5" y="284.0" class="lg">X1</text></g><g opacity="1"><path d="M1441.6 297.1H1469" stroke="#E15F99" stroke-width="2"/><text x="1473.5" y="301.4" class="lg">X2</text></g><g opacity="1"><path d="M1441.6 314.4H1469" stroke="#1CA71C" stroke-width="2"/><text x="1473.5" y="318.7" class="lg">X3</text></g><g opacity="0.5"><path d="M1441.6 331.8H1469" stroke="#FB0D0D" stroke-width="2"/><text x="1473.5" y="336.1" class="lg">X4</text></g><g opacity="0.5"><path d="M1441.6 349.1H1469" stroke="#DA16FF" stroke-width="2"/><text x="1473.5" y="353.4" class="lg">X5</text></g><g opacity="0.5"><path d="M1441.6 366.5H1469" stroke="#222A2A" stroke-width="2"/><text x="1473.5" y="370.8" class="lg">X6</text></g><g opacity="0.5"><path d="M1441.6 383.9H1469" stroke="#B68100" stroke-width="2"/><text x="1473.5" y="388.2" class="lg">X7</text></g><g opacity="0.5"><path d="M1441.6 401.2H1469" stroke="#750D86" stroke-width="2"/><text x="1473.5" y="405.5" class="lg">X8</text></g><g opacity="0.5"><path d="M1441.6 418.6H1469" stroke="#EB663B" stroke-width="2"/><text x="1473.5" y="422.9" class="lg">X9</text></g><g opacity="0.5"><path d="M1441.6 435.9H1469" stroke="#511CFB" stroke-width="2"/><text x="1473.5" y="440.2" class="lg">X10</text></g><g opacity="0.5"><path d="M1441.6 453.3H1469" stroke="#00A08B" stroke-width="2"/><text x="1473.5" y="457.6" class="lg">X11</text></g><g opacity="0.5"><path d="M1441.6 470.7H1469" stroke="#FB00D1" stroke-width="2"/><text x="1473.5" y="475.0" class="lg">X12</text></g><g opacity="0.5"><path d="M1441.6 488.0H1469" stroke="#FC0080" stroke-width="2"/><text x="1473.5" y="492.3" class="lg">X13</text></g><g opacity="0.5"><path d="M1441.6 505.4H1469" stroke="#B2828D" stroke-width="2"/><text x="1473.5" y="509.7" class="lg">X14</text></g><g opacity="0.5"><path d="M1441.6 522.7H1469" stroke="#6C7C32" stroke-width="2"/><text x="1473.5" y="527.0" class="lg">X15</text></g><g opacity="0.5"><path d="M1441.6 540.1H1469" stroke="#778AAE" stroke-width="2"/><text x="1473.5" y="544.4" class="lg">X16</text></g><g opacity="0.5"><path d="M1441.6 557.5H1469" stroke="#862A16" stroke-width="2"/><text x="1473.5" y="561.8" class="lg">X17</text></g><g opacity="0.5"><path d="M1441.6 574.8H1469" stroke="#A777F1" stroke-width="2"/><text x="1473.5" y="579.1" class="lg">X18</text></g><g opacity="0.5"><path d="M1441.6 592.2H1469" stroke="#620042" stroke-width="2"/><text x="1473.5" y="596.5" class="lg">X19</text></g><g opacity="0.5"><path d="M1441.6 609.5H1469" stroke="#1616A7" stroke-width="2"/><text x="1473.5" y="613.8" class="lg">X20</text></g></svg><div class="abs" style="left:384px;top:887.8px;width:1136.4px;height:419.4px;background:#fff"></div><div class="t" style="left:393.4px;top:908.0px;font-size:13.7px;font-weight:bold;color:#222;">Time Series Samples</div><div class="abs" style="left:393px;top:933.2px;width:1118px;height:1px;background:#f4f4f4"></div><div class="abs" style="left:393.4px;top:938.5px;width:1117.6px;height:303px;overflow:hidden"><table class="dt" style="width:1165.6px"><tr><th style="width:46px">Index</th><th style="width:62.2px">X1</th><th style="width:62.2px">X2</th><th style="width:62.2px">X3</th><th style="width:62.2px">X4</th><th style="width:62.2px">X5</th><th style="width:62.2px">X6</th><th style="width:62.2px">X7</th><th style="width:62.2px">X8</th><th style="width:62.2px">X9</th><th style="width:62.2px">X10</th><th style="width:62.2px">X11</th><th style="width:62.2px">X12</th><th style="width:62.2px">X13</th><th style="width:62.2px">X14</th><th style="width:62.2px">X15</th><th style="width:62.2px">X16</th><th style="width:62.2px">X17</th><th style="width:62.2px">X18</th></tr><tr><td>0</td><td>0.4267</td><td>-3.8347</td><td>0.8206</td><td>2.2105</td><td>-0.8013</td><td>1.446</td><td>0.8459</td><td>1.4308</td><td>3.0604</td><td>0.8405</td><td>0.0702</td><td>4.6897</td><td>-3.0022</td><td>2.8682</td><td>1.0541</td><td>2.733</td><td>3.0229</td><td>0.5117</td></tr><tr><td>1</td><td>-2.4931</td><td>-0.2551</td><td>-2.6704</td><td>2.0178</td><td>-0.7049</td><td>7.438</td><td>3.9722</td><td>-2.8322</td><td>-4.0656</td><td>1.1816</td><td>2.7889</td><td>-4.1794</td><td>2.1017</td><td>-2.2248</td><td>7.7386</td><td>0.2391</td><td>0.4254</td><td>0.3625</td></tr><tr><td>2</td><td>-2.345</td><td>-0.7138</td><td>-1.577</td><td>2.4113</td><td>-1.3931</td><td>4.7314</td><td>4.2719</td><td>0.6038</td><td>-0.8459</td><td>-1.8778</td><td>2.473</td><td>-0.7752</td><td>1.6664</td><td>2.4615</td><td>6.5918</td><td>2.5848</td><td>1.6579</td><td>0.9131</td></tr><tr><td>3</td><td>0.5609</td><td>1.6192</td><td>0.8243</td><td>-2.5997</td><td>3.9722</td><td>-2.8288</td><td>-0.58</td><td>-4.8029</td><td>-4.4598</td><td>0.342</td><td>2.3298</td><td>0.1763</td><td>1.6154</td><td>-8.7003</td><td>0.0595</td><td>-0.9549</td><td>2.2288</td><td>4.0127</td></tr><tr><td>4</td><td>-1.5008</td><td>4.5678</td><td>-4.5492</td><td>1.9965</td><td>-1.1495</td><td>3.1489</td><td>2.9886</td><td>-0.6434</td><td>-5.1042</td><td>4.9278</td><td>2.0321</td><td>4.8462</td><td>6.5701</td><td>1.8526</td><td>-1.3688</td><td>-4.0556</td><td>-1.6571</td><td>2.3318</td></tr><tr><td>5</td><td>2.6748</td><td>0.3312</td><td>1.5276</td><td>2.2671</td><td>-3.6263</td><td>-2.0756</td><td>-1.8928</td><td>0.9615</td><td>-0.9008</td><td>-4.8908</td><td>-5.2475</td><td>-4.868</td><td>-3.7979</td><td>3.7558</td><td>6.5858</td><td>3.057</td><td>0.1281</td><td>-0.6532</td></tr><tr><td>6</td><td>-0.88</td><td>-1.6314</td><td>0.8191</td><td>3.1058</td><td>-3.8696</td><td>3.5307</td><td>-0.7104</td><td>3.7292</td><td>1.6453</td><td>0.3084</td><td>-0.0463</td><td>0.3459</td><td>-2.4652</td><td>2.8181</td><td>0.4624</td><td>0.6904</td><td>4.5981</td><td>-5.1127</td></tr><tr><td>7</td><td>1.2522</td><td>-1.4961</td><td>0.7897</td><td>-1.2142</td><td>-1.4584</td><td>0.2282</td><td>1.2947</td><td>3.5281</td><td>5.3328</td><td>-0.7332</td><td>1.7565</td><td>1.108</td><td>-1.3794</td><td>2.1691</td><td>2.4774</td><td>-0.5924</td><td>2.4799</td><td>-2.3411</td></tr><tr><td>8</td><td>2.8015</td><td>1.0602</td><td>0.6716</td><td>-2.3834</td><td>4.8866</td><td>-8.39</td><td>-7.6022</td><td>-0.9163</td><td>-0.51</td><td>-0.1669</td><td>-2.0951</td><td>-0.9158</td><td>-2.876</td><td>-3.7383</td><td>-0.4865</td><td>0.4173</td><td>2.2546</td><td>-0.2916</td></tr><tr><td>9</td><td>-0.8158</td><td>2.201</td><td>-1.7192</td><td>-2.2235</td><td>-0.8223</td><td>-4.4321</td><td>-1.5756</td><td>2.8187</td><td>-0.2755</td><td>-2.142</td><td>-1.6231</td><td>-0.5345</td><td>1.0558</td><td>3.1102</td><td>-3.4816</td><td>0.742</td><td>3.1717</td><td>-1.2248</td></tr></table></div><div class="abs" style="left:393.4px;top:1240.5px;width:1117.6px;height:13.5px;background:#fafafa;border-bottom:1px solid #ececec"></div><div class="abs" style="left:395.8px;top:1244.5px;width:951px;height:7.5px;background:#c1c1c1;border-radius:4px"></div><div class="t m" style="left:1307.3px;width:60px;text-align:center;top:1274px;font-size:13px;color:#333">«</div><div class="t m" style="left:1332.7px;width:60px;text-align:center;top:1274px;font-size:13px;color:#333">‹</div><div class="t m" style="left:1358.8px;width:60px;text-align:center;top:1274px;font-size:13px;color:#333">1</div><div class="t m" style="left:1385.8px;width:60px;text-align:center;top:1274px;font-size:13px;color:#333">/</div><div class="t m" style="left:1414.6px;width:60px;text-align:center;top:1274px;font-size:13px;color:#333">100</div><div class="t m" style="left:1442.8px;width:60px;text-align:center;top:1274px;font-size:13px;color:#333">›</div><div class="t m" style="left:1467.9px;width:60px;text-align:center;top:1274px;font-size:13px;color:#333">»</div><div class="abs" style="left:1374.4px;top:1291px;width:28.5px;height:1px;background:#dcdcdc"></div>
</body></html>
